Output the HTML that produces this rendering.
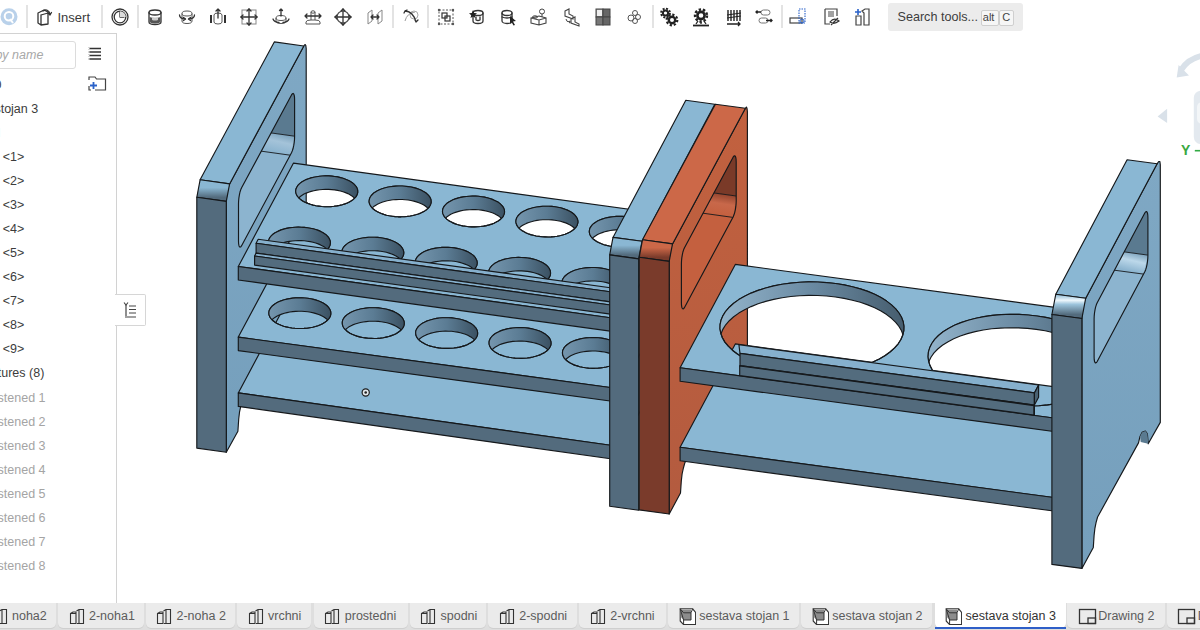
<!DOCTYPE html>
<html><head><meta charset="utf-8"><style>
html,body{margin:0;padding:0;width:1200px;height:630px;overflow:hidden;background:#fff;font-family:"Liberation Sans",sans-serif;}
#wrap{position:relative;width:1200px;height:630px;overflow:hidden;background:#fff;}
.t{position:absolute;white-space:nowrap;font-size:12.5px;line-height:1;}
.sep{position:absolute;top:5px;width:2px;height:23px;background:#e3e3e3;}
.ic{position:absolute;top:8px;}
.tab{position:absolute;top:603px;height:25px;background:#ebebeb;border-radius:0 0 5px 5px;box-shadow:0 1px 0 #cfcfcf;}
.tab span{position:absolute;top:7px;font-size:12.5px;color:#5a5a5a;white-space:nowrap;line-height:1;}
.li{position:absolute;font-size:12.5px;line-height:1;white-space:nowrap;color:#3c3c3c;}
.lg{color:#a6a6a6;}
</style></head><body><div id="wrap">
<svg width="1200" height="630" viewBox="0 0 1200 630" style="position:absolute;left:0;top:0"><defs><linearGradient id="g1" gradientUnits="userSpaceOnUse" x1="0.0" y1="44.5" x2="0.0" y2="452.2"><stop offset="0" stop-color="#7fa8c4"/><stop offset="1" stop-color="#759fbc"/></linearGradient><clipPath id="c2"><path d="M294.6,99.6 L294.5,97.1 L294.2,95.2 L293.7,93.9 L293.1,93.4 L292.3,93.8 L291.5,94.9 L241.6,187.8 L240.8,189.6 L240.0,192.0 L239.4,194.9 L238.9,197.9 L238.6,201.0 L238.5,203.9 L238.5,240.9 L238.6,243.5 L238.9,245.4 L239.4,246.7 L240.0,247.1 L240.8,246.8 L241.6,245.7 L291.5,152.8 L292.3,150.9 L293.1,148.5 L293.7,145.7 L294.2,142.6 L294.5,139.5 L294.6,136.6Z"/></clipPath><linearGradient id="g3" gradientUnits="userSpaceOnUse" x1="294.6" y1="136.2" x2="290.2" y2="155.2"><stop offset="0" stop-color="#7aa0ba"/><stop offset="0.45" stop-color="#a4c3d9"/><stop offset="1" stop-color="#8cb4cf"/></linearGradient><linearGradient id="g4" gradientUnits="userSpaceOnUse" x1="0.0" y1="179.8" x2="0.0" y2="197.3"><stop offset="0" stop-color="#8ab7d3"/><stop offset="0.45" stop-color="#8ab7d3"/><stop offset="1" stop-color="#536b7d"/></linearGradient><linearGradient id="g5" gradientUnits="userSpaceOnUse" x1="238.3" y1="0.0" x2="621.2" y2="0.0"><stop offset="0" stop-color="#5d7a8e"/><stop offset="1" stop-color="#56707f"/></linearGradient><clipPath id="c6"><path d="M329.8,317.2 L330.5,315.7 L330.8,314.2 L330.8,312.7 L330.6,311.2 L330.0,309.7 L329.2,308.3 L328.1,306.9 L326.7,305.5 L325.0,304.3 L323.1,303.1 L321.0,302.0 L318.7,301.0 L316.1,300.1 L313.5,299.4 L310.7,298.8 L307.8,298.3 L304.8,298.0 L301.8,297.8 L298.7,297.8 L295.7,297.9 L292.7,298.1 L289.8,298.6 L287.0,299.1 L284.3,299.8 L281.7,300.6 L279.3,301.5 L277.2,302.6 L275.2,303.7 L273.5,305.0 L272.0,306.3 L270.8,307.7 L269.9,309.1 L269.2,310.6 L268.9,312.1 L268.9,313.6 L269.1,315.1 L269.7,316.6 L270.5,318.0 L271.7,319.4 L273.1,320.8 L274.7,322.0 L276.6,323.2 L278.7,324.3 L281.1,325.3 L283.6,326.2 L286.2,326.9 L289.0,327.5 L291.9,328.0 L294.9,328.3 L297.9,328.5 L301.0,328.5 L304.0,328.4 L307.0,328.2 L309.9,327.7 L312.7,327.2 L315.5,326.5 L318.0,325.7 L320.4,324.8 L322.6,323.7 L324.5,322.6 L326.2,321.3 L327.7,320.0 L328.9,318.6Z"/></clipPath><linearGradient id="g7" gradientUnits="userSpaceOnUse" x1="268.9" y1="0.0" x2="330.8" y2="0.0"><stop offset="0" stop-color="#7596ae"/><stop offset="0.5" stop-color="#5b7c94"/><stop offset="1" stop-color="#3b5162"/></linearGradient><clipPath id="c8"><path d="M403.2,327.2 L403.9,325.7 L404.2,324.2 L404.2,322.7 L404.0,321.2 L403.4,319.7 L402.6,318.2 L401.5,316.8 L400.1,315.5 L398.4,314.2 L396.5,313.0 L394.4,311.9 L392.0,310.9 L389.5,310.1 L386.9,309.3 L384.1,308.7 L381.2,308.3 L378.2,307.9 L375.2,307.7 L372.1,307.7 L369.1,307.8 L366.1,308.1 L363.2,308.5 L360.4,309.0 L357.7,309.7 L355.1,310.5 L352.7,311.5 L350.6,312.5 L348.6,313.7 L346.9,314.9 L345.4,316.2 L344.2,317.6 L343.3,319.0 L342.6,320.5 L342.3,322.0 L342.3,323.5 L342.5,325.0 L343.1,326.5 L343.9,328.0 L345.1,329.4 L346.5,330.7 L348.1,332.0 L350.0,333.2 L352.1,334.3 L354.5,335.2 L357.0,336.1 L359.6,336.9 L362.4,337.5 L365.3,337.9 L368.3,338.3 L371.3,338.4 L374.4,338.5 L377.4,338.4 L380.4,338.1 L383.3,337.7 L386.1,337.1 L388.8,336.5 L391.4,335.6 L393.8,334.7 L396.0,333.7 L397.9,332.5 L399.6,331.3 L401.1,330.0 L402.3,328.6Z"/></clipPath><linearGradient id="g9" gradientUnits="userSpaceOnUse" x1="342.3" y1="0.0" x2="404.2" y2="0.0"><stop offset="0" stop-color="#7596ae"/><stop offset="0.5" stop-color="#5b7c94"/><stop offset="1" stop-color="#3b5162"/></linearGradient><clipPath id="c10"><path d="M476.6,337.1 L477.3,335.6 L477.6,334.1 L477.6,332.6 L477.4,331.1 L476.8,329.6 L476.0,328.2 L474.8,326.8 L473.5,325.4 L471.8,324.1 L469.9,323.0 L467.8,321.9 L465.4,320.9 L462.9,320.0 L460.3,319.3 L457.5,318.7 L454.6,318.2 L451.6,317.9 L448.6,317.7 L445.5,317.7 L442.5,317.8 L439.5,318.0 L436.6,318.4 L433.8,319.0 L431.1,319.7 L428.5,320.5 L426.1,321.4 L423.9,322.5 L422.0,323.6 L420.3,324.8 L418.8,326.2 L417.6,327.5 L416.7,329.0 L416.0,330.4 L415.7,331.9 L415.7,333.5 L415.9,335.0 L416.5,336.4 L417.3,337.9 L418.4,339.3 L419.8,340.7 L421.5,341.9 L423.4,343.1 L425.5,344.2 L427.9,345.2 L430.4,346.1 L433.0,346.8 L435.8,347.4 L438.7,347.9 L441.7,348.2 L444.7,348.4 L447.8,348.4 L450.8,348.3 L453.8,348.0 L456.7,347.6 L459.5,347.1 L462.2,346.4 L464.8,345.6 L467.2,344.7 L469.3,343.6 L471.3,342.5 L473.0,341.2 L474.5,339.9 L475.7,338.5Z"/></clipPath><linearGradient id="g11" gradientUnits="userSpaceOnUse" x1="415.7" y1="0.0" x2="477.6" y2="0.0"><stop offset="0" stop-color="#7596ae"/><stop offset="0.5" stop-color="#5b7c94"/><stop offset="1" stop-color="#3b5162"/></linearGradient><clipPath id="c12"><path d="M550.0,347.0 L550.7,345.6 L551.0,344.1 L551.0,342.6 L550.8,341.1 L550.2,339.6 L549.4,338.1 L548.2,336.7 L546.8,335.4 L545.2,334.1 L543.3,332.9 L541.2,331.8 L538.8,330.8 L536.3,330.0 L533.7,329.2 L530.9,328.6 L528.0,328.1 L525.0,327.8 L522.0,327.6 L518.9,327.6 L515.9,327.7 L512.9,328.0 L510.0,328.4 L507.2,328.9 L504.5,329.6 L501.9,330.4 L499.5,331.4 L497.3,332.4 L495.4,333.5 L493.7,334.8 L492.2,336.1 L491.0,337.5 L490.1,338.9 L489.4,340.4 L489.1,341.9 L489.1,343.4 L489.3,344.9 L489.9,346.4 L490.7,347.8 L491.8,349.3 L493.2,350.6 L494.9,351.9 L496.8,353.1 L498.9,354.2 L501.2,355.1 L503.8,356.0 L506.4,356.7 L509.2,357.3 L512.1,357.8 L515.1,358.1 L518.1,358.3 L521.2,358.4 L524.2,358.2 L527.2,358.0 L530.1,357.6 L532.9,357.0 L535.6,356.3 L538.2,355.5 L540.6,354.6 L542.7,353.6 L544.7,352.4 L546.4,351.2 L547.9,349.9 L549.1,348.5Z"/></clipPath><linearGradient id="g13" gradientUnits="userSpaceOnUse" x1="489.1" y1="0.0" x2="551.0" y2="0.0"><stop offset="0" stop-color="#7596ae"/><stop offset="0.5" stop-color="#5b7c94"/><stop offset="1" stop-color="#3b5162"/></linearGradient><clipPath id="c14"><path d="M623.4,357.0 L624.0,355.5 L624.4,354.0 L624.4,352.5 L624.2,351.0 L623.6,349.5 L622.8,348.1 L621.6,346.6 L620.2,345.3 L618.6,344.0 L616.7,342.8 L614.6,341.7 L612.2,340.8 L609.7,339.9 L607.1,339.2 L604.3,338.6 L601.4,338.1 L598.4,337.8 L595.4,337.6 L592.3,337.5 L589.3,337.7 L586.3,337.9 L583.4,338.3 L580.5,338.9 L577.8,339.6 L575.3,340.4 L572.9,341.3 L570.7,342.3 L568.8,343.5 L567.1,344.7 L565.6,346.0 L564.4,347.4 L563.5,348.9 L562.8,350.3 L562.5,351.8 L562.5,353.3 L562.7,354.8 L563.3,356.3 L564.1,357.8 L565.2,359.2 L566.6,360.5 L568.3,361.8 L570.2,363.0 L572.3,364.1 L574.6,365.1 L577.2,365.9 L579.8,366.7 L582.6,367.3 L585.5,367.8 L588.5,368.1 L591.5,368.3 L594.6,368.3 L597.6,368.2 L600.6,367.9 L603.5,367.5 L606.3,367.0 L609.0,366.3 L611.6,365.5 L614.0,364.5 L616.1,363.5 L618.1,362.4 L619.8,361.1 L621.3,359.8 L622.5,358.4Z"/></clipPath><linearGradient id="g15" gradientUnits="userSpaceOnUse" x1="562.5" y1="0.0" x2="624.4" y2="0.0"><stop offset="0" stop-color="#7596ae"/><stop offset="0.5" stop-color="#5b7c94"/><stop offset="1" stop-color="#3b5162"/></linearGradient><linearGradient id="g16" gradientUnits="userSpaceOnUse" x1="238.3" y1="0.0" x2="621.2" y2="0.0"><stop offset="0" stop-color="#5d7a8e"/><stop offset="1" stop-color="#56707f"/></linearGradient><clipPath id="c17"><path d="M329.4,246.6 L330.0,245.2 L330.3,243.7 L330.4,242.2 L330.1,240.7 L329.5,239.2 L328.7,237.7 L327.6,236.3 L326.2,234.9 L324.5,233.7 L322.6,232.5 L320.5,231.4 L318.2,230.4 L315.7,229.5 L313.0,228.8 L310.2,228.2 L307.3,227.7 L304.3,227.4 L301.3,227.2 L298.3,227.1 L295.2,227.2 L292.2,227.5 L289.3,227.9 L286.5,228.4 L283.8,229.1 L281.2,229.9 L278.9,230.9 L276.7,231.9 L274.7,233.0 L273.0,234.3 L271.5,235.6 L270.3,237.0 L269.4,238.4 L268.8,239.9 L268.4,241.4 L268.4,242.9 L268.6,244.4 L269.2,245.9 L270.0,247.3 L271.2,248.8 L272.6,250.1 L274.2,251.4 L276.1,252.6 L278.3,253.7 L280.6,254.7 L283.1,255.5 L285.8,256.3 L288.5,256.9 L291.4,257.4 L294.4,257.7 L297.4,257.9 L300.5,257.9 L303.5,257.8 L306.5,257.6 L309.4,257.2 L312.3,256.6 L315.0,255.9 L317.5,255.1 L319.9,254.2 L322.1,253.2 L324.0,252.0 L325.8,250.8 L327.2,249.5 L328.4,248.1Z"/></clipPath><linearGradient id="g18" gradientUnits="userSpaceOnUse" x1="268.4" y1="0.0" x2="330.4" y2="0.0"><stop offset="0" stop-color="#7596ae"/><stop offset="0.5" stop-color="#5b7c94"/><stop offset="1" stop-color="#3b5162"/></linearGradient><clipPath id="c19"><path d="M402.7,256.7 L403.4,255.3 L403.7,253.8 L403.8,252.3 L403.5,250.8 L402.9,249.3 L402.1,247.8 L401.0,246.4 L399.6,245.0 L397.9,243.8 L396.0,242.6 L393.9,241.5 L391.6,240.5 L389.1,239.6 L386.4,238.9 L383.6,238.3 L380.7,237.8 L377.7,237.4 L374.7,237.3 L371.7,237.2 L368.6,237.3 L365.6,237.6 L362.7,238.0 L359.9,238.5 L357.2,239.2 L354.6,240.0 L352.2,240.9 L350.1,242.0 L348.1,243.1 L346.4,244.4 L344.9,245.7 L343.7,247.1 L342.8,248.5 L342.2,250.0 L341.8,251.5 L341.8,253.0 L342.0,254.5 L342.6,256.0 L343.4,257.4 L344.6,258.8 L346.0,260.2 L347.6,261.5 L349.5,262.7 L351.6,263.8 L354.0,264.8 L356.5,265.6 L359.1,266.4 L361.9,267.0 L364.8,267.5 L367.8,267.8 L370.8,268.0 L373.9,268.0 L376.9,267.9 L379.9,267.7 L382.8,267.3 L385.7,266.7 L388.4,266.0 L390.9,265.2 L393.3,264.3 L395.5,263.3 L397.4,262.1 L399.2,260.9 L400.6,259.6 L401.8,258.2Z"/></clipPath><linearGradient id="g20" gradientUnits="userSpaceOnUse" x1="341.8" y1="0.0" x2="403.8" y2="0.0"><stop offset="0" stop-color="#7596ae"/><stop offset="0.5" stop-color="#5b7c94"/><stop offset="1" stop-color="#3b5162"/></linearGradient><clipPath id="c21"><path d="M476.1,266.8 L476.8,265.4 L477.1,263.9 L477.2,262.4 L476.9,260.8 L476.3,259.4 L475.5,257.9 L474.4,256.5 L473.0,255.1 L471.3,253.9 L469.4,252.7 L467.3,251.6 L465.0,250.6 L462.5,249.7 L459.8,249.0 L457.0,248.4 L454.1,247.9 L451.1,247.5 L448.1,247.4 L445.0,247.3 L442.0,247.4 L439.0,247.7 L436.1,248.1 L433.3,248.6 L430.6,249.3 L428.0,250.1 L425.6,251.0 L423.5,252.1 L421.5,253.2 L419.8,254.5 L418.3,255.8 L417.1,257.2 L416.2,258.6 L415.6,260.1 L415.2,261.6 L415.2,263.1 L415.4,264.6 L416.0,266.1 L416.8,267.5 L418.0,268.9 L419.4,270.3 L421.0,271.6 L422.9,272.8 L425.0,273.9 L427.4,274.8 L429.9,275.7 L432.5,276.5 L435.3,277.1 L438.2,277.6 L441.2,277.9 L444.2,278.1 L447.3,278.1 L450.3,278.0 L453.3,277.7 L456.2,277.3 L459.1,276.8 L461.8,276.1 L464.3,275.3 L466.7,274.4 L468.9,273.3 L470.8,272.2 L472.6,271.0 L474.0,269.7 L475.2,268.3Z"/></clipPath><linearGradient id="g22" gradientUnits="userSpaceOnUse" x1="415.2" y1="0.0" x2="477.2" y2="0.0"><stop offset="0" stop-color="#7596ae"/><stop offset="0.5" stop-color="#5b7c94"/><stop offset="1" stop-color="#3b5162"/></linearGradient><clipPath id="c23"><path d="M549.5,276.9 L550.2,275.5 L550.5,274.0 L550.5,272.4 L550.3,270.9 L549.7,269.5 L548.9,268.0 L547.8,266.6 L546.4,265.2 L544.7,264.0 L542.8,262.8 L540.7,261.7 L538.4,260.7 L535.8,259.8 L533.2,259.1 L530.4,258.4 L527.5,258.0 L524.5,257.6 L521.5,257.5 L518.4,257.4 L515.4,257.5 L512.4,257.8 L509.5,258.2 L506.7,258.7 L504.0,259.4 L501.4,260.2 L499.0,261.1 L496.9,262.2 L494.9,263.3 L493.2,264.6 L491.7,265.9 L490.5,267.3 L489.6,268.7 L489.0,270.2 L488.6,271.7 L488.6,273.2 L488.8,274.7 L489.4,276.2 L490.2,277.6 L491.4,279.0 L492.8,280.4 L494.4,281.7 L496.3,282.9 L498.4,284.0 L500.8,284.9 L503.3,285.8 L505.9,286.6 L508.7,287.2 L511.6,287.7 L514.6,288.0 L517.6,288.2 L520.7,288.2 L523.7,288.1 L526.7,287.8 L529.6,287.4 L532.5,286.9 L535.2,286.2 L537.7,285.4 L540.1,284.5 L542.3,283.4 L544.2,282.3 L545.9,281.1 L547.4,279.7 L548.6,278.4Z"/></clipPath><linearGradient id="g24" gradientUnits="userSpaceOnUse" x1="488.6" y1="0.0" x2="550.5" y2="0.0"><stop offset="0" stop-color="#7596ae"/><stop offset="0.5" stop-color="#5b7c94"/><stop offset="1" stop-color="#3b5162"/></linearGradient><clipPath id="c25"><path d="M622.9,287.0 L623.6,285.6 L623.9,284.1 L623.9,282.5 L623.7,281.0 L623.1,279.5 L622.3,278.1 L621.2,276.7 L619.8,275.3 L618.1,274.0 L616.2,272.9 L614.1,271.8 L611.8,270.8 L609.2,269.9 L606.6,269.2 L603.8,268.5 L600.9,268.1 L597.9,267.7 L594.9,267.5 L591.8,267.5 L588.8,267.6 L585.8,267.9 L582.9,268.3 L580.1,268.8 L577.4,269.5 L574.8,270.3 L572.4,271.2 L570.3,272.3 L568.3,273.4 L566.6,274.7 L565.1,276.0 L563.9,277.3 L563.0,278.8 L562.3,280.3 L562.0,281.8 L562.0,283.3 L562.2,284.8 L562.8,286.3 L563.6,287.7 L564.8,289.1 L566.2,290.5 L567.8,291.8 L569.7,293.0 L571.8,294.0 L574.2,295.0 L576.7,295.9 L579.3,296.7 L582.1,297.3 L585.0,297.7 L588.0,298.1 L591.0,298.3 L594.1,298.3 L597.1,298.2 L600.1,297.9 L603.0,297.5 L605.8,297.0 L608.5,296.3 L611.1,295.5 L613.5,294.6 L615.7,293.5 L617.6,292.4 L619.3,291.2 L620.8,289.8 L622.0,288.5Z"/></clipPath><linearGradient id="g26" gradientUnits="userSpaceOnUse" x1="562.0" y1="0.0" x2="623.9" y2="0.0"><stop offset="0" stop-color="#7596ae"/><stop offset="0.5" stop-color="#5b7c94"/><stop offset="1" stop-color="#3b5162"/></linearGradient><clipPath id="c27"><path d="M356.7,195.4 L357.3,194.0 L357.7,192.5 L357.7,190.9 L357.5,189.4 L356.9,187.9 L356.1,186.5 L354.9,185.1 L353.5,183.7 L351.9,182.4 L350.0,181.3 L347.9,180.2 L345.5,179.2 L343.0,178.3 L340.4,177.6 L337.6,176.9 L334.7,176.5 L331.7,176.1 L328.7,175.9 L325.6,175.9 L322.6,176.0 L319.6,176.3 L316.7,176.7 L313.8,177.2 L311.1,177.9 L308.6,178.7 L306.2,179.6 L304.0,180.7 L302.1,181.8 L300.3,183.1 L298.9,184.4 L297.7,185.7 L296.8,187.2 L296.1,188.7 L295.8,190.2 L295.7,191.7 L296.0,193.2 L296.6,194.7 L297.4,196.1 L298.5,197.5 L299.9,198.9 L301.6,200.2 L303.5,201.4 L305.6,202.4 L307.9,203.4 L310.4,204.3 L313.1,205.1 L315.9,205.7 L318.8,206.1 L321.8,206.5 L324.8,206.7 L327.9,206.7 L330.9,206.6 L333.9,206.3 L336.8,205.9 L339.6,205.4 L342.3,204.7 L344.9,203.9 L347.3,203.0 L349.4,201.9 L351.4,200.8 L353.1,199.6 L354.6,198.2 L355.8,196.9Z"/></clipPath><linearGradient id="g28" gradientUnits="userSpaceOnUse" x1="295.7" y1="0.0" x2="357.7" y2="0.0"><stop offset="0" stop-color="#7596ae"/><stop offset="0.5" stop-color="#5b7c94"/><stop offset="1" stop-color="#3b5162"/></linearGradient><clipPath id="c29"><path d="M430.1,205.5 L430.7,204.0 L431.1,202.5 L431.1,201.0 L430.9,199.5 L430.3,198.0 L429.5,196.6 L428.3,195.2 L426.9,193.8 L425.3,192.5 L423.4,191.4 L421.3,190.3 L418.9,189.3 L416.4,188.4 L413.8,187.6 L411.0,187.0 L408.1,186.6 L405.1,186.2 L402.1,186.0 L399.0,186.0 L396.0,186.1 L393.0,186.4 L390.1,186.8 L387.2,187.3 L384.5,188.0 L382.0,188.8 L379.6,189.7 L377.4,190.8 L375.5,191.9 L373.7,193.1 L372.3,194.5 L371.1,195.8 L370.2,197.3 L369.5,198.8 L369.2,200.3 L369.1,201.8 L369.4,203.3 L370.0,204.8 L370.8,206.2 L371.9,207.6 L373.3,209.0 L375.0,210.3 L376.9,211.4 L379.0,212.5 L381.3,213.5 L383.8,214.4 L386.5,215.2 L389.3,215.8 L392.2,216.2 L395.2,216.6 L398.2,216.8 L401.2,216.8 L404.3,216.7 L407.3,216.4 L410.2,216.0 L413.0,215.5 L415.7,214.8 L418.3,214.0 L420.7,213.1 L422.8,212.0 L424.8,210.9 L426.5,209.7 L428.0,208.3 L429.2,207.0Z"/></clipPath><linearGradient id="g30" gradientUnits="userSpaceOnUse" x1="369.1" y1="0.0" x2="431.1" y2="0.0"><stop offset="0" stop-color="#7596ae"/><stop offset="0.5" stop-color="#5b7c94"/><stop offset="1" stop-color="#3b5162"/></linearGradient><clipPath id="c31"><path d="M503.5,215.6 L504.1,214.1 L504.5,212.6 L504.5,211.1 L504.3,209.6 L503.7,208.1 L502.9,206.7 L501.7,205.3 L500.3,203.9 L498.7,202.6 L496.8,201.4 L494.6,200.4 L492.3,199.4 L489.8,198.5 L487.1,197.7 L484.4,197.1 L481.5,196.7 L478.5,196.3 L475.5,196.1 L472.4,196.1 L469.4,196.2 L466.4,196.5 L463.5,196.9 L460.6,197.4 L457.9,198.1 L455.4,198.9 L453.0,199.8 L450.8,200.9 L448.9,202.0 L447.1,203.2 L445.7,204.6 L444.5,205.9 L443.5,207.4 L442.9,208.8 L442.6,210.3 L442.5,211.9 L442.8,213.4 L443.4,214.9 L444.2,216.3 L445.3,217.7 L446.7,219.1 L448.4,220.4 L450.3,221.5 L452.4,222.6 L454.7,223.6 L457.2,224.5 L459.9,225.2 L462.7,225.9 L465.6,226.3 L468.6,226.7 L471.6,226.9 L474.6,226.9 L477.7,226.8 L480.7,226.5 L483.6,226.1 L486.4,225.6 L489.1,224.9 L491.7,224.1 L494.0,223.2 L496.2,222.1 L498.2,221.0 L499.9,219.7 L501.4,218.4 L502.6,217.1Z"/></clipPath><linearGradient id="g32" gradientUnits="userSpaceOnUse" x1="442.5" y1="0.0" x2="504.5" y2="0.0"><stop offset="0" stop-color="#7596ae"/><stop offset="0.5" stop-color="#5b7c94"/><stop offset="1" stop-color="#3b5162"/></linearGradient><clipPath id="c33"><path d="M576.9,225.7 L577.5,224.2 L577.9,222.7 L577.9,221.2 L577.6,219.7 L577.1,218.2 L576.2,216.8 L575.1,215.4 L573.7,214.0 L572.1,212.7 L570.2,211.5 L568.0,210.4 L565.7,209.5 L563.2,208.6 L560.5,207.8 L557.7,207.2 L554.8,206.7 L551.9,206.4 L548.8,206.2 L545.8,206.2 L542.8,206.3 L539.8,206.6 L536.9,207.0 L534.0,207.5 L531.3,208.2 L528.8,209.0 L526.4,209.9 L524.2,211.0 L522.3,212.1 L520.5,213.3 L519.1,214.7 L517.9,216.0 L516.9,217.5 L516.3,218.9 L516.0,220.4 L515.9,222.0 L516.2,223.5 L516.7,224.9 L517.6,226.4 L518.7,227.8 L520.1,229.2 L521.8,230.4 L523.7,231.6 L525.8,232.7 L528.1,233.7 L530.6,234.6 L533.3,235.3 L536.1,236.0 L539.0,236.4 L542.0,236.8 L545.0,236.9 L548.0,237.0 L551.1,236.9 L554.1,236.6 L557.0,236.2 L559.8,235.7 L562.5,235.0 L565.1,234.2 L567.4,233.3 L569.6,232.2 L571.6,231.1 L573.3,229.8 L574.8,228.5 L576.0,227.1Z"/></clipPath><linearGradient id="g34" gradientUnits="userSpaceOnUse" x1="515.9" y1="0.0" x2="577.9" y2="0.0"><stop offset="0" stop-color="#7596ae"/><stop offset="0.5" stop-color="#5b7c94"/><stop offset="1" stop-color="#3b5162"/></linearGradient><clipPath id="c35"><path d="M650.3,235.8 L650.9,234.3 L651.3,232.8 L651.3,231.3 L651.0,229.8 L650.5,228.3 L649.6,226.9 L648.5,225.5 L647.1,224.1 L645.5,222.8 L643.6,221.6 L641.4,220.5 L639.1,219.6 L636.6,218.7 L633.9,217.9 L631.1,217.3 L628.2,216.8 L625.3,216.5 L622.2,216.3 L619.2,216.3 L616.2,216.4 L613.2,216.7 L610.3,217.1 L607.4,217.6 L604.7,218.3 L602.2,219.1 L599.8,220.0 L597.6,221.1 L595.7,222.2 L593.9,223.4 L592.5,224.7 L591.3,226.1 L590.3,227.6 L589.7,229.0 L589.4,230.5 L589.3,232.0 L589.6,233.6 L590.1,235.0 L591.0,236.5 L592.1,237.9 L593.5,239.3 L595.2,240.5 L597.1,241.7 L599.2,242.8 L601.5,243.8 L604.0,244.7 L606.7,245.4 L609.5,246.0 L612.4,246.5 L615.4,246.9 L618.4,247.0 L621.4,247.1 L624.5,247.0 L627.5,246.7 L630.4,246.3 L633.2,245.8 L635.9,245.1 L638.5,244.3 L640.8,243.4 L643.0,242.3 L645.0,241.2 L646.7,239.9 L648.2,238.6 L649.4,237.2Z"/></clipPath><linearGradient id="g36" gradientUnits="userSpaceOnUse" x1="589.3" y1="0.0" x2="651.3" y2="0.0"><stop offset="0" stop-color="#7596ae"/><stop offset="0.5" stop-color="#5b7c94"/><stop offset="1" stop-color="#3b5162"/></linearGradient><linearGradient id="g37" gradientUnits="userSpaceOnUse" x1="238.3" y1="0.0" x2="621.2" y2="0.0"><stop offset="0" stop-color="#5d7a8e"/><stop offset="1" stop-color="#56707f"/></linearGradient><linearGradient id="g38" gradientUnits="userSpaceOnUse" x1="0.0" y1="243.2" x2="0.0" y2="253.1"><stop offset="0" stop-color="#4f6779"/><stop offset="1" stop-color="#5f7a8d"/></linearGradient><linearGradient id="g39" gradientUnits="userSpaceOnUse" x1="0.0" y1="237.4" x2="0.0" y2="254.9"><stop offset="0" stop-color="#8ab7d3"/><stop offset="0.45" stop-color="#8ab7d3"/><stop offset="1" stop-color="#536b7d"/></linearGradient><linearGradient id="g40" gradientUnits="userSpaceOnUse" x1="0.0" y1="107.1" x2="0.0" y2="514.0"><stop offset="0" stop-color="#c2613f"/><stop offset="1" stop-color="#b35b3f"/></linearGradient><clipPath id="c41"><path d="M736.2,161.9 L736.1,159.4 L735.8,157.5 L735.3,156.2 L734.7,155.8 L733.9,156.1 L733.1,157.2 L684.5,247.8 L683.7,249.6 L682.9,252.0 L682.3,254.9 L681.8,257.9 L681.5,261.0 L681.4,263.9 L681.4,302.7 L681.5,305.2 L681.8,307.2 L682.3,308.4 L682.9,308.9 L683.7,308.6 L684.5,307.4 L733.1,216.9 L733.9,215.1 L734.7,212.6 L735.3,209.8 L735.8,206.7 L736.1,203.6 L736.2,200.8Z"/></clipPath><linearGradient id="g42" gradientUnits="userSpaceOnUse" x1="736.2" y1="196.0" x2="732.9" y2="217.4"><stop offset="0" stop-color="#93442e"/><stop offset="0.45" stop-color="#c8684a"/><stop offset="1" stop-color="#c4603f"/></linearGradient><linearGradient id="g43" gradientUnits="userSpaceOnUse" x1="0.0" y1="239.8" x2="0.0" y2="257.3"><stop offset="0" stop-color="#cc6848"/><stop offset="0.45" stop-color="#cc6848"/><stop offset="1" stop-color="#7a3b2b"/></linearGradient><linearGradient id="g44" gradientUnits="userSpaceOnUse" x1="680.1" y1="0.0" x2="1063.0" y2="0.0"><stop offset="0" stop-color="#5d7a8e"/><stop offset="1" stop-color="#56707f"/></linearGradient><clipPath id="c45"><path d="M900.9,339.5 L902.8,335.1 L903.8,330.7 L903.9,326.2 L903.2,321.7 L901.5,317.3 L899.0,313.0 L895.7,308.9 L891.5,304.9 L886.6,301.1 L881.0,297.6 L874.7,294.3 L867.8,291.4 L860.3,288.9 L852.4,286.7 L844.1,284.9 L835.5,283.5 L826.7,282.6 L817.7,282.0 L808.7,281.9 L799.7,282.3 L790.8,283.1 L782.1,284.3 L773.7,285.9 L765.7,288.0 L758.1,290.4 L751.1,293.1 L744.6,296.2 L738.8,299.6 L733.7,303.3 L729.3,307.2 L725.7,311.3 L723.0,315.6 L721.1,320.0 L720.1,324.4 L720.0,328.9 L720.8,333.4 L722.4,337.8 L724.9,342.1 L728.3,346.2 L732.4,350.2 L737.4,354.0 L743.0,357.5 L749.3,360.8 L756.2,363.7 L763.6,366.2 L771.6,368.4 L779.8,370.2 L788.5,371.6 L797.3,372.6 L806.3,373.1 L815.3,373.2 L824.3,372.8 L833.2,372.0 L841.8,370.8 L850.2,369.2 L858.3,367.2 L865.8,364.7 L872.9,362.0 L879.3,358.9 L885.2,355.5 L890.3,351.8 L894.6,347.9 L898.2,343.8Z"/></clipPath><linearGradient id="g46" gradientUnits="userSpaceOnUse" x1="720.0" y1="0.0" x2="903.9" y2="0.0"><stop offset="0" stop-color="#93b4cb"/><stop offset="0.5" stop-color="#6a8aa2"/><stop offset="1" stop-color="#465d6e"/></linearGradient><clipPath id="c47"><path d="M1108.2,376.7 L1110.3,372.5 L1111.6,368.1 L1111.9,363.6 L1111.4,359.1 L1110.0,354.6 L1107.7,350.2 L1104.6,345.8 L1100.6,341.6 L1095.9,337.6 L1090.5,333.8 L1084.3,330.3 L1077.6,327.0 L1070.3,324.0 L1062.5,321.4 L1054.3,319.2 L1045.8,317.4 L1037.0,316.0 L1028.1,315.0 L1019.1,314.4 L1010.1,314.3 L1001.2,314.6 L992.4,315.4 L984.0,316.6 L975.9,318.2 L968.2,320.2 L961.0,322.6 L954.4,325.3 L948.4,328.4 L943.1,331.8 L938.5,335.5 L934.7,339.4 L931.8,343.5 L929.7,347.8 L928.4,352.2 L928.1,356.7 L928.6,361.2 L930.0,365.6 L932.3,370.1 L935.4,374.4 L939.4,378.6 L944.1,382.6 L949.5,386.5 L955.7,390.0 L962.4,393.3 L969.7,396.2 L977.5,398.8 L985.7,401.1 L994.2,402.9 L1003.0,404.3 L1011.9,405.3 L1020.9,405.9 L1029.9,406.0 L1038.8,405.7 L1047.6,404.9 L1056.0,403.7 L1064.1,402.1 L1071.8,400.1 L1079.0,397.7 L1085.6,394.9 L1091.6,391.8 L1096.9,388.4 L1101.5,384.8 L1105.3,380.8Z"/></clipPath><linearGradient id="g48" gradientUnits="userSpaceOnUse" x1="928.1" y1="0.0" x2="1111.9" y2="0.0"><stop offset="0" stop-color="#93b4cb"/><stop offset="0.5" stop-color="#6a8aa2"/><stop offset="1" stop-color="#465d6e"/></linearGradient><linearGradient id="g49" gradientUnits="userSpaceOnUse" x1="680.1" y1="0.0" x2="1063.0" y2="0.0"><stop offset="0" stop-color="#5d7a8e"/><stop offset="1" stop-color="#56707f"/></linearGradient><linearGradient id="g50" gradientUnits="userSpaceOnUse" x1="0.0" y1="353.4" x2="0.0" y2="365.5"><stop offset="0" stop-color="#4f6779"/><stop offset="1" stop-color="#5f7a8d"/></linearGradient><linearGradient id="g51" gradientUnits="userSpaceOnUse" x1="0.0" y1="161.5" x2="0.0" y2="568.4"><stop offset="0" stop-color="#7fa8c4"/><stop offset="1" stop-color="#759fbc"/></linearGradient><clipPath id="c52"><path d="M1147.9,217.6 L1147.8,215.1 L1147.5,213.2 L1147.0,212.0 L1146.4,211.5 L1145.6,211.9 L1144.8,213.0 L1097.2,302.8 L1096.4,304.6 L1095.6,307.1 L1095.0,309.9 L1094.5,313.0 L1094.2,316.1 L1094.1,319.0 L1094.1,356.8 L1094.2,359.4 L1094.5,361.3 L1095.0,362.5 L1095.6,363.0 L1096.4,362.6 L1097.2,361.5 L1144.8,271.7 L1145.6,269.9 L1146.4,267.4 L1147.0,264.6 L1147.5,261.5 L1147.8,258.4 L1147.9,255.5Z"/></clipPath><linearGradient id="g53" gradientUnits="userSpaceOnUse" x1="1147.9" y1="255.1" x2="1143.5" y2="274.1"><stop offset="0" stop-color="#7aa0ba"/><stop offset="0.45" stop-color="#bcd8ea"/><stop offset="1" stop-color="#8cb4cf"/></linearGradient><linearGradient id="g54" gradientUnits="userSpaceOnUse" x1="0.0" y1="294.2" x2="0.0" y2="314.5"><stop offset="0" stop-color="#8ab7d3"/><stop offset="0.3" stop-color="#eef7fc"/><stop offset="0.5" stop-color="#9cc4dc"/><stop offset="1" stop-color="#536b7d"/></linearGradient></defs><polygon points="229.6,183.9 228.8,185.9 228.0,188.5 227.3,191.6 226.7,194.9 226.4,198.3 226.3,201.4 226.3,452.2 237.9,431.2 238.3,425.2 238.7,419.2 239.5,412.2 240.8,406.2 242.3,400.8 284.0,326.7 285.5,320.2 287.6,316.2 291.0,314.8 293.1,317.6 293.9,327.6 306.2,306.2 306.2,48.5 305.8,45.3 305.0,44.5 303.8,46.0" fill="url(#g1)" stroke="#15181b" stroke-width="1.15" stroke-linejoin="round" />
<polygon points="285.5,320.2 287.6,316.2 291.0,314.8 293.1,317.6 293.9,327.6 286.3,325.7" fill="#5a7a90"  />
<g clip-path="url(#c2)">
<polygon points="294.6,99.6 294.5,97.1 294.2,95.2 293.7,93.9 293.1,93.4 292.3,93.8 291.5,94.9 241.6,187.8 240.8,189.6 240.0,192.0 239.4,194.9 238.9,197.9 238.6,201.0 238.5,203.9 238.5,240.9 238.6,243.5 238.9,245.4 239.4,246.7 240.0,247.1 240.8,246.8 241.6,245.7 291.5,152.8 292.3,150.9 293.1,148.5 293.7,145.7 294.2,142.6 294.5,139.5 294.6,136.6" fill="#8cb4cf"  />
<polygon points="294.6,84.8 294.6,136.2 265.1,132.1 265.1,80.8" fill="#5a7a90"  />
<polygon points="294.6,136.2 290.2,155.2 260.8,151.1 265.1,132.1" fill="url(#g3)"  />
<line x1="294.6" y1="136.2" x2="265.1" y2="132.1" stroke="#16191c" stroke-width="0.9"/>
<line x1="290.2" y1="155.2" x2="260.8" y2="151.1" stroke="#16191c" stroke-width="0.9"/>
</g>
<polygon points="294.6,99.6 294.5,97.1 294.2,95.2 293.7,93.9 293.1,93.4 292.3,93.8 291.5,94.9 241.6,187.8 240.8,189.6 240.0,192.0 239.4,194.9 238.9,197.9 238.6,201.0 238.5,203.9 238.5,240.9 238.6,243.5 238.9,245.4 239.4,246.7 240.0,247.1 240.8,246.8 241.6,245.7 291.5,152.8 292.3,150.9 293.1,148.5 293.7,145.7 294.2,142.6 294.5,139.5 294.6,136.6" fill="none" stroke="#15181b" stroke-width="1.15" stroke-linejoin="round" />
<polygon points="200.1,179.8 229.6,183.9 303.8,46.0 274.3,41.9" fill="#8ab7d3" stroke="#15181b" stroke-width="1.15" stroke-linejoin="round" />
<polygon points="200.1,179.8 229.6,183.9 226.3,201.4 196.8,197.3" fill="url(#g4)" stroke="#15181b" stroke-width="1.15" stroke-linejoin="round" />
<polygon points="196.8,197.3 226.3,201.4 226.3,452.2 196.8,448.1" fill="#536b7d" stroke="#15181b" stroke-width="1.15" stroke-linejoin="round" />
<path d="M238.3,392.9 L621.2,446.8 L676.5,343.4 L293.5,289.5Z" fill="#8ab7d3" stroke="#15181b" stroke-width="1.15" stroke-linejoin="round" fill-rule="evenodd"/>
<polygon points="238.3,392.9 621.2,446.8 621.2,460.3 238.3,406.4" fill="#536b7d" stroke="#15181b" stroke-width="1.15" stroke-linejoin="round" />
<circle cx="365.7" cy="392.5" r="3.6" fill="#e4e9ec" stroke="#1e1e1e" stroke-width="1.2"/><circle cx="365.7" cy="392.5" r="1.3" fill="#222"/>
<path d="M238.3,337.1 L621.2,389.0 L676.5,285.6 L293.5,233.8ZM329.8,317.2 L330.5,315.7 L330.8,314.2 L330.8,312.7 L330.6,311.2 L330.0,309.7 L329.2,308.3 L328.1,306.9 L326.7,305.5 L325.0,304.3 L323.1,303.1 L321.0,302.0 L318.7,301.0 L316.1,300.1 L313.5,299.4 L310.7,298.8 L307.8,298.3 L304.8,298.0 L301.8,297.8 L298.7,297.8 L295.7,297.9 L292.7,298.1 L289.8,298.6 L287.0,299.1 L284.3,299.8 L281.7,300.6 L279.3,301.5 L277.2,302.6 L275.2,303.7 L273.5,305.0 L272.0,306.3 L270.8,307.7 L269.9,309.1 L269.2,310.6 L268.9,312.1 L268.9,313.6 L269.1,315.1 L269.7,316.6 L270.5,318.0 L271.7,319.4 L273.1,320.8 L274.7,322.0 L276.6,323.2 L278.7,324.3 L281.1,325.3 L283.6,326.2 L286.2,326.9 L289.0,327.5 L291.9,328.0 L294.9,328.3 L297.9,328.5 L301.0,328.5 L304.0,328.4 L307.0,328.2 L309.9,327.7 L312.7,327.2 L315.5,326.5 L318.0,325.7 L320.4,324.8 L322.6,323.7 L324.5,322.6 L326.2,321.3 L327.7,320.0 L328.9,318.6ZM403.2,327.2 L403.9,325.7 L404.2,324.2 L404.2,322.7 L404.0,321.2 L403.4,319.7 L402.6,318.2 L401.5,316.8 L400.1,315.5 L398.4,314.2 L396.5,313.0 L394.4,311.9 L392.0,310.9 L389.5,310.1 L386.9,309.3 L384.1,308.7 L381.2,308.3 L378.2,307.9 L375.2,307.7 L372.1,307.7 L369.1,307.8 L366.1,308.1 L363.2,308.5 L360.4,309.0 L357.7,309.7 L355.1,310.5 L352.7,311.5 L350.6,312.5 L348.6,313.7 L346.9,314.9 L345.4,316.2 L344.2,317.6 L343.3,319.0 L342.6,320.5 L342.3,322.0 L342.3,323.5 L342.5,325.0 L343.1,326.5 L343.9,328.0 L345.1,329.4 L346.5,330.7 L348.1,332.0 L350.0,333.2 L352.1,334.3 L354.5,335.2 L357.0,336.1 L359.6,336.9 L362.4,337.5 L365.3,337.9 L368.3,338.3 L371.3,338.4 L374.4,338.5 L377.4,338.4 L380.4,338.1 L383.3,337.7 L386.1,337.1 L388.8,336.5 L391.4,335.6 L393.8,334.7 L396.0,333.7 L397.9,332.5 L399.6,331.3 L401.1,330.0 L402.3,328.6ZM476.6,337.1 L477.3,335.6 L477.6,334.1 L477.6,332.6 L477.4,331.1 L476.8,329.6 L476.0,328.2 L474.8,326.8 L473.5,325.4 L471.8,324.1 L469.9,323.0 L467.8,321.9 L465.4,320.9 L462.9,320.0 L460.3,319.3 L457.5,318.7 L454.6,318.2 L451.6,317.9 L448.6,317.7 L445.5,317.7 L442.5,317.8 L439.5,318.0 L436.6,318.4 L433.8,319.0 L431.1,319.7 L428.5,320.5 L426.1,321.4 L423.9,322.5 L422.0,323.6 L420.3,324.8 L418.8,326.2 L417.6,327.5 L416.7,329.0 L416.0,330.4 L415.7,331.9 L415.7,333.5 L415.9,335.0 L416.5,336.4 L417.3,337.9 L418.4,339.3 L419.8,340.7 L421.5,341.9 L423.4,343.1 L425.5,344.2 L427.9,345.2 L430.4,346.1 L433.0,346.8 L435.8,347.4 L438.7,347.9 L441.7,348.2 L444.7,348.4 L447.8,348.4 L450.8,348.3 L453.8,348.0 L456.7,347.6 L459.5,347.1 L462.2,346.4 L464.8,345.6 L467.2,344.7 L469.3,343.6 L471.3,342.5 L473.0,341.2 L474.5,339.9 L475.7,338.5ZM550.0,347.0 L550.7,345.6 L551.0,344.1 L551.0,342.6 L550.8,341.1 L550.2,339.6 L549.4,338.1 L548.2,336.7 L546.8,335.4 L545.2,334.1 L543.3,332.9 L541.2,331.8 L538.8,330.8 L536.3,330.0 L533.7,329.2 L530.9,328.6 L528.0,328.1 L525.0,327.8 L522.0,327.6 L518.9,327.6 L515.9,327.7 L512.9,328.0 L510.0,328.4 L507.2,328.9 L504.5,329.6 L501.9,330.4 L499.5,331.4 L497.3,332.4 L495.4,333.5 L493.7,334.8 L492.2,336.1 L491.0,337.5 L490.1,338.9 L489.4,340.4 L489.1,341.9 L489.1,343.4 L489.3,344.9 L489.9,346.4 L490.7,347.8 L491.8,349.3 L493.2,350.6 L494.9,351.9 L496.8,353.1 L498.9,354.2 L501.2,355.1 L503.8,356.0 L506.4,356.7 L509.2,357.3 L512.1,357.8 L515.1,358.1 L518.1,358.3 L521.2,358.4 L524.2,358.2 L527.2,358.0 L530.1,357.6 L532.9,357.0 L535.6,356.3 L538.2,355.5 L540.6,354.6 L542.7,353.6 L544.7,352.4 L546.4,351.2 L547.9,349.9 L549.1,348.5ZM623.4,357.0 L624.0,355.5 L624.4,354.0 L624.4,352.5 L624.2,351.0 L623.6,349.5 L622.8,348.1 L621.6,346.6 L620.2,345.3 L618.6,344.0 L616.7,342.8 L614.6,341.7 L612.2,340.8 L609.7,339.9 L607.1,339.2 L604.3,338.6 L601.4,338.1 L598.4,337.8 L595.4,337.6 L592.3,337.5 L589.3,337.7 L586.3,337.9 L583.4,338.3 L580.5,338.9 L577.8,339.6 L575.3,340.4 L572.9,341.3 L570.7,342.3 L568.8,343.5 L567.1,344.7 L565.6,346.0 L564.4,347.4 L563.5,348.9 L562.8,350.3 L562.5,351.8 L562.5,353.3 L562.7,354.8 L563.3,356.3 L564.1,357.8 L565.2,359.2 L566.6,360.5 L568.3,361.8 L570.2,363.0 L572.3,364.1 L574.6,365.1 L577.2,365.9 L579.8,366.7 L582.6,367.3 L585.5,367.8 L588.5,368.1 L591.5,368.3 L594.6,368.3 L597.6,368.2 L600.6,367.9 L603.5,367.5 L606.3,367.0 L609.0,366.3 L611.6,365.5 L614.0,364.5 L616.1,363.5 L618.1,362.4 L619.8,361.1 L621.3,359.8 L622.5,358.4Z" fill="#8ab7d3" stroke="#15181b" stroke-width="1.15" stroke-linejoin="round" fill-rule="evenodd"/>
<path d="M329.8,317.2 L330.5,315.7 L330.8,314.2 L330.8,312.7 L330.6,311.2 L330.0,309.7 L329.2,308.3 L328.1,306.9 L326.7,305.5 L325.0,304.3 L323.1,303.1 L321.0,302.0 L318.7,301.0 L316.1,300.1 L313.5,299.4 L310.7,298.8 L307.8,298.3 L304.8,298.0 L301.8,297.8 L298.7,297.8 L295.7,297.9 L292.7,298.1 L289.8,298.6 L287.0,299.1 L284.3,299.8 L281.7,300.6 L279.3,301.5 L277.2,302.6 L275.2,303.7 L273.5,305.0 L272.0,306.3 L270.8,307.7 L269.9,309.1 L269.2,310.6 L268.9,312.1 L268.9,313.6 L269.1,315.1 L269.7,316.6 L270.5,318.0 L271.7,319.4 L273.1,320.8 L274.7,322.0 L276.6,323.2 L278.7,324.3 L281.1,325.3 L283.6,326.2 L286.2,326.9 L289.0,327.5 L291.9,328.0 L294.9,328.3 L297.9,328.5 L301.0,328.5 L304.0,328.4 L307.0,328.2 L309.9,327.7 L312.7,327.2 L315.5,326.5 L318.0,325.7 L320.4,324.8 L322.6,323.7 L324.5,322.6 L326.2,321.3 L327.7,320.0 L328.9,318.6ZM329.8,330.7 L330.5,329.2 L330.8,327.7 L330.8,326.2 L330.6,324.7 L330.0,323.2 L329.2,321.8 L328.1,320.3 L326.7,319.0 L325.0,317.7 L323.1,316.5 L321.0,315.4 L318.7,314.5 L316.1,313.6 L313.5,312.9 L310.7,312.2 L307.8,311.8 L304.8,311.5 L301.8,311.3 L298.7,311.2 L295.7,311.4 L292.7,311.6 L289.8,312.0 L287.0,312.6 L284.3,313.3 L281.7,314.1 L279.3,315.0 L277.2,316.0 L275.2,317.2 L273.5,318.4 L272.0,319.7 L270.8,321.1 L269.9,322.6 L269.2,324.0 L268.9,325.5 L268.9,327.0 L269.1,328.5 L269.7,330.0 L270.5,331.5 L271.7,332.9 L273.1,334.2 L274.7,335.5 L276.6,336.7 L278.7,337.8 L281.1,338.8 L283.6,339.6 L286.2,340.4 L289.0,341.0 L291.9,341.5 L294.9,341.8 L297.9,342.0 L301.0,342.0 L304.0,341.9 L307.0,341.6 L309.9,341.2 L312.7,340.7 L315.5,340.0 L318.0,339.2 L320.4,338.2 L322.6,337.2 L324.5,336.0 L326.2,334.8 L327.7,333.5 L328.9,332.1Z" fill="url(#g7)" fill-rule="evenodd" clip-path="url(#c6)"/>
<path d="M329.8,330.7 L330.5,329.2 L330.8,327.7 L330.8,326.2 L330.6,324.7 L330.0,323.2 L329.2,321.8 L328.1,320.3 L326.7,319.0 L325.0,317.7 L323.1,316.5 L321.0,315.4 L318.7,314.5 L316.1,313.6 L313.5,312.9 L310.7,312.2 L307.8,311.8 L304.8,311.5 L301.8,311.3 L298.7,311.2 L295.7,311.4 L292.7,311.6 L289.8,312.0 L287.0,312.6 L284.3,313.3 L281.7,314.1 L279.3,315.0 L277.2,316.0 L275.2,317.2 L273.5,318.4 L272.0,319.7 L270.8,321.1 L269.9,322.6 L269.2,324.0 L268.9,325.5 L268.9,327.0 L269.1,328.5 L269.7,330.0 L270.5,331.5 L271.7,332.9 L273.1,334.2 L274.7,335.5 L276.6,336.7 L278.7,337.8 L281.1,338.8 L283.6,339.6 L286.2,340.4 L289.0,341.0 L291.9,341.5 L294.9,341.8 L297.9,342.0 L301.0,342.0 L304.0,341.9 L307.0,341.6 L309.9,341.2 L312.7,340.7 L315.5,340.0 L318.0,339.2 L320.4,338.2 L322.6,337.2 L324.5,336.0 L326.2,334.8 L327.7,333.5 L328.9,332.1Z" fill="none" stroke="#15181b" stroke-width="1.15" stroke-linejoin="round" clip-path="url(#c6)"/>
<path d="M329.8,317.2 L330.5,315.7 L330.8,314.2 L330.8,312.7 L330.6,311.2 L330.0,309.7 L329.2,308.3 L328.1,306.9 L326.7,305.5 L325.0,304.3 L323.1,303.1 L321.0,302.0 L318.7,301.0 L316.1,300.1 L313.5,299.4 L310.7,298.8 L307.8,298.3 L304.8,298.0 L301.8,297.8 L298.7,297.8 L295.7,297.9 L292.7,298.1 L289.8,298.6 L287.0,299.1 L284.3,299.8 L281.7,300.6 L279.3,301.5 L277.2,302.6 L275.2,303.7 L273.5,305.0 L272.0,306.3 L270.8,307.7 L269.9,309.1 L269.2,310.6 L268.9,312.1 L268.9,313.6 L269.1,315.1 L269.7,316.6 L270.5,318.0 L271.7,319.4 L273.1,320.8 L274.7,322.0 L276.6,323.2 L278.7,324.3 L281.1,325.3 L283.6,326.2 L286.2,326.9 L289.0,327.5 L291.9,328.0 L294.9,328.3 L297.9,328.5 L301.0,328.5 L304.0,328.4 L307.0,328.2 L309.9,327.7 L312.7,327.2 L315.5,326.5 L318.0,325.7 L320.4,324.8 L322.6,323.7 L324.5,322.6 L326.2,321.3 L327.7,320.0 L328.9,318.6Z" fill="none" stroke="#15181b" stroke-width="1.15" stroke-linejoin="round" />
<path d="M403.2,327.2 L403.9,325.7 L404.2,324.2 L404.2,322.7 L404.0,321.2 L403.4,319.7 L402.6,318.2 L401.5,316.8 L400.1,315.5 L398.4,314.2 L396.5,313.0 L394.4,311.9 L392.0,310.9 L389.5,310.1 L386.9,309.3 L384.1,308.7 L381.2,308.3 L378.2,307.9 L375.2,307.7 L372.1,307.7 L369.1,307.8 L366.1,308.1 L363.2,308.5 L360.4,309.0 L357.7,309.7 L355.1,310.5 L352.7,311.5 L350.6,312.5 L348.6,313.7 L346.9,314.9 L345.4,316.2 L344.2,317.6 L343.3,319.0 L342.6,320.5 L342.3,322.0 L342.3,323.5 L342.5,325.0 L343.1,326.5 L343.9,328.0 L345.1,329.4 L346.5,330.7 L348.1,332.0 L350.0,333.2 L352.1,334.3 L354.5,335.2 L357.0,336.1 L359.6,336.9 L362.4,337.5 L365.3,337.9 L368.3,338.3 L371.3,338.4 L374.4,338.5 L377.4,338.4 L380.4,338.1 L383.3,337.7 L386.1,337.1 L388.8,336.5 L391.4,335.6 L393.8,334.7 L396.0,333.7 L397.9,332.5 L399.6,331.3 L401.1,330.0 L402.3,328.6ZM403.2,340.6 L403.9,339.1 L404.2,337.6 L404.2,336.1 L404.0,334.6 L403.4,333.1 L402.6,331.7 L401.5,330.3 L400.1,328.9 L398.4,327.7 L396.5,326.5 L394.4,325.4 L392.0,324.4 L389.5,323.5 L386.9,322.8 L384.1,322.2 L381.2,321.7 L378.2,321.4 L375.2,321.2 L372.1,321.2 L369.1,321.3 L366.1,321.6 L363.2,322.0 L360.4,322.5 L357.7,323.2 L355.1,324.0 L352.7,324.9 L350.6,326.0 L348.6,327.1 L346.9,328.4 L345.4,329.7 L344.2,331.1 L343.3,332.5 L342.6,334.0 L342.3,335.5 L342.3,337.0 L342.5,338.5 L343.1,340.0 L343.9,341.4 L345.1,342.8 L346.5,344.2 L348.1,345.5 L350.0,346.6 L352.1,347.7 L354.5,348.7 L357.0,349.6 L359.6,350.3 L362.4,350.9 L365.3,351.4 L368.3,351.7 L371.3,351.9 L374.4,351.9 L377.4,351.8 L380.4,351.6 L383.3,351.2 L386.1,350.6 L388.8,349.9 L391.4,349.1 L393.8,348.2 L396.0,347.1 L397.9,346.0 L399.6,344.8 L401.1,343.4 L402.3,342.1Z" fill="url(#g9)" fill-rule="evenodd" clip-path="url(#c8)"/>
<path d="M403.2,340.6 L403.9,339.1 L404.2,337.6 L404.2,336.1 L404.0,334.6 L403.4,333.1 L402.6,331.7 L401.5,330.3 L400.1,328.9 L398.4,327.7 L396.5,326.5 L394.4,325.4 L392.0,324.4 L389.5,323.5 L386.9,322.8 L384.1,322.2 L381.2,321.7 L378.2,321.4 L375.2,321.2 L372.1,321.2 L369.1,321.3 L366.1,321.6 L363.2,322.0 L360.4,322.5 L357.7,323.2 L355.1,324.0 L352.7,324.9 L350.6,326.0 L348.6,327.1 L346.9,328.4 L345.4,329.7 L344.2,331.1 L343.3,332.5 L342.6,334.0 L342.3,335.5 L342.3,337.0 L342.5,338.5 L343.1,340.0 L343.9,341.4 L345.1,342.8 L346.5,344.2 L348.1,345.5 L350.0,346.6 L352.1,347.7 L354.5,348.7 L357.0,349.6 L359.6,350.3 L362.4,350.9 L365.3,351.4 L368.3,351.7 L371.3,351.9 L374.4,351.9 L377.4,351.8 L380.4,351.6 L383.3,351.2 L386.1,350.6 L388.8,349.9 L391.4,349.1 L393.8,348.2 L396.0,347.1 L397.9,346.0 L399.6,344.8 L401.1,343.4 L402.3,342.1Z" fill="none" stroke="#15181b" stroke-width="1.15" stroke-linejoin="round" clip-path="url(#c8)"/>
<path d="M403.2,327.2 L403.9,325.7 L404.2,324.2 L404.2,322.7 L404.0,321.2 L403.4,319.7 L402.6,318.2 L401.5,316.8 L400.1,315.5 L398.4,314.2 L396.5,313.0 L394.4,311.9 L392.0,310.9 L389.5,310.1 L386.9,309.3 L384.1,308.7 L381.2,308.3 L378.2,307.9 L375.2,307.7 L372.1,307.7 L369.1,307.8 L366.1,308.1 L363.2,308.5 L360.4,309.0 L357.7,309.7 L355.1,310.5 L352.7,311.5 L350.6,312.5 L348.6,313.7 L346.9,314.9 L345.4,316.2 L344.2,317.6 L343.3,319.0 L342.6,320.5 L342.3,322.0 L342.3,323.5 L342.5,325.0 L343.1,326.5 L343.9,328.0 L345.1,329.4 L346.5,330.7 L348.1,332.0 L350.0,333.2 L352.1,334.3 L354.5,335.2 L357.0,336.1 L359.6,336.9 L362.4,337.5 L365.3,337.9 L368.3,338.3 L371.3,338.4 L374.4,338.5 L377.4,338.4 L380.4,338.1 L383.3,337.7 L386.1,337.1 L388.8,336.5 L391.4,335.6 L393.8,334.7 L396.0,333.7 L397.9,332.5 L399.6,331.3 L401.1,330.0 L402.3,328.6Z" fill="none" stroke="#15181b" stroke-width="1.15" stroke-linejoin="round" />
<path d="M476.6,337.1 L477.3,335.6 L477.6,334.1 L477.6,332.6 L477.4,331.1 L476.8,329.6 L476.0,328.2 L474.8,326.8 L473.5,325.4 L471.8,324.1 L469.9,323.0 L467.8,321.9 L465.4,320.9 L462.9,320.0 L460.3,319.3 L457.5,318.7 L454.6,318.2 L451.6,317.9 L448.6,317.7 L445.5,317.7 L442.5,317.8 L439.5,318.0 L436.6,318.4 L433.8,319.0 L431.1,319.7 L428.5,320.5 L426.1,321.4 L423.9,322.5 L422.0,323.6 L420.3,324.8 L418.8,326.2 L417.6,327.5 L416.7,329.0 L416.0,330.4 L415.7,331.9 L415.7,333.5 L415.9,335.0 L416.5,336.4 L417.3,337.9 L418.4,339.3 L419.8,340.7 L421.5,341.9 L423.4,343.1 L425.5,344.2 L427.9,345.2 L430.4,346.1 L433.0,346.8 L435.8,347.4 L438.7,347.9 L441.7,348.2 L444.7,348.4 L447.8,348.4 L450.8,348.3 L453.8,348.0 L456.7,347.6 L459.5,347.1 L462.2,346.4 L464.8,345.6 L467.2,344.7 L469.3,343.6 L471.3,342.5 L473.0,341.2 L474.5,339.9 L475.7,338.5ZM476.6,350.6 L477.3,349.1 L477.6,347.6 L477.6,346.1 L477.4,344.6 L476.8,343.1 L476.0,341.6 L474.8,340.2 L473.5,338.9 L471.8,337.6 L469.9,336.4 L467.8,335.3 L465.4,334.3 L462.9,333.5 L460.3,332.7 L457.5,332.1 L454.6,331.7 L451.6,331.3 L448.6,331.2 L445.5,331.1 L442.5,331.2 L439.5,331.5 L436.6,331.9 L433.8,332.5 L431.1,333.1 L428.5,334.0 L426.1,334.9 L423.9,335.9 L422.0,337.1 L420.3,338.3 L418.8,339.6 L417.6,341.0 L416.7,342.4 L416.0,343.9 L415.7,345.4 L415.7,346.9 L415.9,348.4 L416.5,349.9 L417.3,351.4 L418.4,352.8 L419.8,354.1 L421.5,355.4 L423.4,356.6 L425.5,357.7 L427.9,358.7 L430.4,359.5 L433.0,360.3 L435.8,360.9 L438.7,361.3 L441.7,361.7 L444.7,361.9 L447.8,361.9 L450.8,361.8 L453.8,361.5 L456.7,361.1 L459.5,360.6 L462.2,359.9 L464.8,359.1 L467.2,358.1 L469.3,357.1 L471.3,355.9 L473.0,354.7 L474.5,353.4 L475.7,352.0Z" fill="url(#g11)" fill-rule="evenodd" clip-path="url(#c10)"/>
<path d="M476.6,350.6 L477.3,349.1 L477.6,347.6 L477.6,346.1 L477.4,344.6 L476.8,343.1 L476.0,341.6 L474.8,340.2 L473.5,338.9 L471.8,337.6 L469.9,336.4 L467.8,335.3 L465.4,334.3 L462.9,333.5 L460.3,332.7 L457.5,332.1 L454.6,331.7 L451.6,331.3 L448.6,331.2 L445.5,331.1 L442.5,331.2 L439.5,331.5 L436.6,331.9 L433.8,332.5 L431.1,333.1 L428.5,334.0 L426.1,334.9 L423.9,335.9 L422.0,337.1 L420.3,338.3 L418.8,339.6 L417.6,341.0 L416.7,342.4 L416.0,343.9 L415.7,345.4 L415.7,346.9 L415.9,348.4 L416.5,349.9 L417.3,351.4 L418.4,352.8 L419.8,354.1 L421.5,355.4 L423.4,356.6 L425.5,357.7 L427.9,358.7 L430.4,359.5 L433.0,360.3 L435.8,360.9 L438.7,361.3 L441.7,361.7 L444.7,361.9 L447.8,361.9 L450.8,361.8 L453.8,361.5 L456.7,361.1 L459.5,360.6 L462.2,359.9 L464.8,359.1 L467.2,358.1 L469.3,357.1 L471.3,355.9 L473.0,354.7 L474.5,353.4 L475.7,352.0Z" fill="none" stroke="#15181b" stroke-width="1.15" stroke-linejoin="round" clip-path="url(#c10)"/>
<path d="M476.6,337.1 L477.3,335.6 L477.6,334.1 L477.6,332.6 L477.4,331.1 L476.8,329.6 L476.0,328.2 L474.8,326.8 L473.5,325.4 L471.8,324.1 L469.9,323.0 L467.8,321.9 L465.4,320.9 L462.9,320.0 L460.3,319.3 L457.5,318.7 L454.6,318.2 L451.6,317.9 L448.6,317.7 L445.5,317.7 L442.5,317.8 L439.5,318.0 L436.6,318.4 L433.8,319.0 L431.1,319.7 L428.5,320.5 L426.1,321.4 L423.9,322.5 L422.0,323.6 L420.3,324.8 L418.8,326.2 L417.6,327.5 L416.7,329.0 L416.0,330.4 L415.7,331.9 L415.7,333.5 L415.9,335.0 L416.5,336.4 L417.3,337.9 L418.4,339.3 L419.8,340.7 L421.5,341.9 L423.4,343.1 L425.5,344.2 L427.9,345.2 L430.4,346.1 L433.0,346.8 L435.8,347.4 L438.7,347.9 L441.7,348.2 L444.7,348.4 L447.8,348.4 L450.8,348.3 L453.8,348.0 L456.7,347.6 L459.5,347.1 L462.2,346.4 L464.8,345.6 L467.2,344.7 L469.3,343.6 L471.3,342.5 L473.0,341.2 L474.5,339.9 L475.7,338.5Z" fill="none" stroke="#15181b" stroke-width="1.15" stroke-linejoin="round" />
<path d="M550.0,347.0 L550.7,345.6 L551.0,344.1 L551.0,342.6 L550.8,341.1 L550.2,339.6 L549.4,338.1 L548.2,336.7 L546.8,335.4 L545.2,334.1 L543.3,332.9 L541.2,331.8 L538.8,330.8 L536.3,330.0 L533.7,329.2 L530.9,328.6 L528.0,328.1 L525.0,327.8 L522.0,327.6 L518.9,327.6 L515.9,327.7 L512.9,328.0 L510.0,328.4 L507.2,328.9 L504.5,329.6 L501.9,330.4 L499.5,331.4 L497.3,332.4 L495.4,333.5 L493.7,334.8 L492.2,336.1 L491.0,337.5 L490.1,338.9 L489.4,340.4 L489.1,341.9 L489.1,343.4 L489.3,344.9 L489.9,346.4 L490.7,347.8 L491.8,349.3 L493.2,350.6 L494.9,351.9 L496.8,353.1 L498.9,354.2 L501.2,355.1 L503.8,356.0 L506.4,356.7 L509.2,357.3 L512.1,357.8 L515.1,358.1 L518.1,358.3 L521.2,358.4 L524.2,358.2 L527.2,358.0 L530.1,357.6 L532.9,357.0 L535.6,356.3 L538.2,355.5 L540.6,354.6 L542.7,353.6 L544.7,352.4 L546.4,351.2 L547.9,349.9 L549.1,348.5ZM550.0,360.5 L550.7,359.0 L551.0,357.5 L551.0,356.0 L550.8,354.5 L550.2,353.0 L549.4,351.6 L548.2,350.2 L546.8,348.8 L545.2,347.6 L543.3,346.4 L541.2,345.3 L538.8,344.3 L536.3,343.4 L533.7,342.7 L530.9,342.1 L528.0,341.6 L525.0,341.3 L522.0,341.1 L518.9,341.1 L515.9,341.2 L512.9,341.4 L510.0,341.9 L507.2,342.4 L504.5,343.1 L501.9,343.9 L499.5,344.8 L497.3,345.9 L495.4,347.0 L493.7,348.3 L492.2,349.6 L491.0,351.0 L490.1,352.4 L489.4,353.9 L489.1,355.4 L489.1,356.9 L489.3,358.4 L489.9,359.9 L490.7,361.3 L491.8,362.7 L493.2,364.1 L494.9,365.3 L496.8,366.5 L498.9,367.6 L501.2,368.6 L503.8,369.5 L506.4,370.2 L509.2,370.8 L512.1,371.3 L515.1,371.6 L518.1,371.8 L521.2,371.8 L524.2,371.7 L527.2,371.4 L530.1,371.0 L532.9,370.5 L535.6,369.8 L538.2,369.0 L540.6,368.1 L542.7,367.0 L544.7,365.9 L546.4,364.6 L547.9,363.3 L549.1,361.9Z" fill="url(#g13)" fill-rule="evenodd" clip-path="url(#c12)"/>
<path d="M550.0,360.5 L550.7,359.0 L551.0,357.5 L551.0,356.0 L550.8,354.5 L550.2,353.0 L549.4,351.6 L548.2,350.2 L546.8,348.8 L545.2,347.6 L543.3,346.4 L541.2,345.3 L538.8,344.3 L536.3,343.4 L533.7,342.7 L530.9,342.1 L528.0,341.6 L525.0,341.3 L522.0,341.1 L518.9,341.1 L515.9,341.2 L512.9,341.4 L510.0,341.9 L507.2,342.4 L504.5,343.1 L501.9,343.9 L499.5,344.8 L497.3,345.9 L495.4,347.0 L493.7,348.3 L492.2,349.6 L491.0,351.0 L490.1,352.4 L489.4,353.9 L489.1,355.4 L489.1,356.9 L489.3,358.4 L489.9,359.9 L490.7,361.3 L491.8,362.7 L493.2,364.1 L494.9,365.3 L496.8,366.5 L498.9,367.6 L501.2,368.6 L503.8,369.5 L506.4,370.2 L509.2,370.8 L512.1,371.3 L515.1,371.6 L518.1,371.8 L521.2,371.8 L524.2,371.7 L527.2,371.4 L530.1,371.0 L532.9,370.5 L535.6,369.8 L538.2,369.0 L540.6,368.1 L542.7,367.0 L544.7,365.9 L546.4,364.6 L547.9,363.3 L549.1,361.9Z" fill="none" stroke="#15181b" stroke-width="1.15" stroke-linejoin="round" clip-path="url(#c12)"/>
<path d="M550.0,347.0 L550.7,345.6 L551.0,344.1 L551.0,342.6 L550.8,341.1 L550.2,339.6 L549.4,338.1 L548.2,336.7 L546.8,335.4 L545.2,334.1 L543.3,332.9 L541.2,331.8 L538.8,330.8 L536.3,330.0 L533.7,329.2 L530.9,328.6 L528.0,328.1 L525.0,327.8 L522.0,327.6 L518.9,327.6 L515.9,327.7 L512.9,328.0 L510.0,328.4 L507.2,328.9 L504.5,329.6 L501.9,330.4 L499.5,331.4 L497.3,332.4 L495.4,333.5 L493.7,334.8 L492.2,336.1 L491.0,337.5 L490.1,338.9 L489.4,340.4 L489.1,341.9 L489.1,343.4 L489.3,344.9 L489.9,346.4 L490.7,347.8 L491.8,349.3 L493.2,350.6 L494.9,351.9 L496.8,353.1 L498.9,354.2 L501.2,355.1 L503.8,356.0 L506.4,356.7 L509.2,357.3 L512.1,357.8 L515.1,358.1 L518.1,358.3 L521.2,358.4 L524.2,358.2 L527.2,358.0 L530.1,357.6 L532.9,357.0 L535.6,356.3 L538.2,355.5 L540.6,354.6 L542.7,353.6 L544.7,352.4 L546.4,351.2 L547.9,349.9 L549.1,348.5Z" fill="none" stroke="#15181b" stroke-width="1.15" stroke-linejoin="round" />
<path d="M623.4,357.0 L624.0,355.5 L624.4,354.0 L624.4,352.5 L624.2,351.0 L623.6,349.5 L622.8,348.1 L621.6,346.6 L620.2,345.3 L618.6,344.0 L616.7,342.8 L614.6,341.7 L612.2,340.8 L609.7,339.9 L607.1,339.2 L604.3,338.6 L601.4,338.1 L598.4,337.8 L595.4,337.6 L592.3,337.5 L589.3,337.7 L586.3,337.9 L583.4,338.3 L580.5,338.9 L577.8,339.6 L575.3,340.4 L572.9,341.3 L570.7,342.3 L568.8,343.5 L567.1,344.7 L565.6,346.0 L564.4,347.4 L563.5,348.9 L562.8,350.3 L562.5,351.8 L562.5,353.3 L562.7,354.8 L563.3,356.3 L564.1,357.8 L565.2,359.2 L566.6,360.5 L568.3,361.8 L570.2,363.0 L572.3,364.1 L574.6,365.1 L577.2,365.9 L579.8,366.7 L582.6,367.3 L585.5,367.8 L588.5,368.1 L591.5,368.3 L594.6,368.3 L597.6,368.2 L600.6,367.9 L603.5,367.5 L606.3,367.0 L609.0,366.3 L611.6,365.5 L614.0,364.5 L616.1,363.5 L618.1,362.4 L619.8,361.1 L621.3,359.8 L622.5,358.4ZM623.4,370.5 L624.0,369.0 L624.4,367.5 L624.4,366.0 L624.2,364.5 L623.6,363.0 L622.8,361.5 L621.6,360.1 L620.2,358.8 L618.6,357.5 L616.7,356.3 L614.6,355.2 L612.2,354.2 L609.7,353.4 L607.1,352.6 L604.3,352.0 L601.4,351.6 L598.4,351.2 L595.4,351.0 L592.3,351.0 L589.3,351.1 L586.3,351.4 L583.4,351.8 L580.5,352.3 L577.8,353.0 L575.3,353.8 L572.9,354.8 L570.7,355.8 L568.8,357.0 L567.1,358.2 L565.6,359.5 L564.4,360.9 L563.5,362.3 L562.8,363.8 L562.5,365.3 L562.5,366.8 L562.7,368.3 L563.3,369.8 L564.1,371.3 L565.2,372.7 L566.6,374.0 L568.3,375.3 L570.2,376.5 L572.3,377.6 L574.6,378.5 L577.2,379.4 L579.8,380.2 L582.6,380.8 L585.5,381.2 L588.5,381.6 L591.5,381.7 L594.6,381.8 L597.6,381.7 L600.6,381.4 L603.5,381.0 L606.3,380.4 L609.0,379.8 L611.6,378.9 L614.0,378.0 L616.1,377.0 L618.1,375.8 L619.8,374.6 L621.3,373.3 L622.5,371.9Z" fill="url(#g15)" fill-rule="evenodd" clip-path="url(#c14)"/>
<path d="M623.4,370.5 L624.0,369.0 L624.4,367.5 L624.4,366.0 L624.2,364.5 L623.6,363.0 L622.8,361.5 L621.6,360.1 L620.2,358.8 L618.6,357.5 L616.7,356.3 L614.6,355.2 L612.2,354.2 L609.7,353.4 L607.1,352.6 L604.3,352.0 L601.4,351.6 L598.4,351.2 L595.4,351.0 L592.3,351.0 L589.3,351.1 L586.3,351.4 L583.4,351.8 L580.5,352.3 L577.8,353.0 L575.3,353.8 L572.9,354.8 L570.7,355.8 L568.8,357.0 L567.1,358.2 L565.6,359.5 L564.4,360.9 L563.5,362.3 L562.8,363.8 L562.5,365.3 L562.5,366.8 L562.7,368.3 L563.3,369.8 L564.1,371.3 L565.2,372.7 L566.6,374.0 L568.3,375.3 L570.2,376.5 L572.3,377.6 L574.6,378.5 L577.2,379.4 L579.8,380.2 L582.6,380.8 L585.5,381.2 L588.5,381.6 L591.5,381.7 L594.6,381.8 L597.6,381.7 L600.6,381.4 L603.5,381.0 L606.3,380.4 L609.0,379.8 L611.6,378.9 L614.0,378.0 L616.1,377.0 L618.1,375.8 L619.8,374.6 L621.3,373.3 L622.5,371.9Z" fill="none" stroke="#15181b" stroke-width="1.15" stroke-linejoin="round" clip-path="url(#c14)"/>
<path d="M623.4,357.0 L624.0,355.5 L624.4,354.0 L624.4,352.5 L624.2,351.0 L623.6,349.5 L622.8,348.1 L621.6,346.6 L620.2,345.3 L618.6,344.0 L616.7,342.8 L614.6,341.7 L612.2,340.8 L609.7,339.9 L607.1,339.2 L604.3,338.6 L601.4,338.1 L598.4,337.8 L595.4,337.6 L592.3,337.5 L589.3,337.7 L586.3,337.9 L583.4,338.3 L580.5,338.9 L577.8,339.6 L575.3,340.4 L572.9,341.3 L570.7,342.3 L568.8,343.5 L567.1,344.7 L565.6,346.0 L564.4,347.4 L563.5,348.9 L562.8,350.3 L562.5,351.8 L562.5,353.3 L562.7,354.8 L563.3,356.3 L564.1,357.8 L565.2,359.2 L566.6,360.5 L568.3,361.8 L570.2,363.0 L572.3,364.1 L574.6,365.1 L577.2,365.9 L579.8,366.7 L582.6,367.3 L585.5,367.8 L588.5,368.1 L591.5,368.3 L594.6,368.3 L597.6,368.2 L600.6,367.9 L603.5,367.5 L606.3,367.0 L609.0,366.3 L611.6,365.5 L614.0,364.5 L616.1,363.5 L618.1,362.4 L619.8,361.1 L621.3,359.8 L622.5,358.4Z" fill="none" stroke="#15181b" stroke-width="1.15" stroke-linejoin="round" />
<polygon points="238.3,337.1 621.2,389.0 621.2,402.5 238.3,350.6" fill="#536b7d" stroke="#15181b" stroke-width="1.15" stroke-linejoin="round" />
<path d="M238.3,266.5 L621.2,319.2 L676.5,215.8 L293.5,163.1ZM329.4,246.6 L330.0,245.2 L330.3,243.7 L330.4,242.2 L330.1,240.7 L329.5,239.2 L328.7,237.7 L327.6,236.3 L326.2,234.9 L324.5,233.7 L322.6,232.5 L320.5,231.4 L318.2,230.4 L315.7,229.5 L313.0,228.8 L310.2,228.2 L307.3,227.7 L304.3,227.4 L301.3,227.2 L298.3,227.1 L295.2,227.2 L292.2,227.5 L289.3,227.9 L286.5,228.4 L283.8,229.1 L281.2,229.9 L278.9,230.9 L276.7,231.9 L274.7,233.0 L273.0,234.3 L271.5,235.6 L270.3,237.0 L269.4,238.4 L268.8,239.9 L268.4,241.4 L268.4,242.9 L268.6,244.4 L269.2,245.9 L270.0,247.3 L271.2,248.8 L272.6,250.1 L274.2,251.4 L276.1,252.6 L278.3,253.7 L280.6,254.7 L283.1,255.5 L285.8,256.3 L288.5,256.9 L291.4,257.4 L294.4,257.7 L297.4,257.9 L300.5,257.9 L303.5,257.8 L306.5,257.6 L309.4,257.2 L312.3,256.6 L315.0,255.9 L317.5,255.1 L319.9,254.2 L322.1,253.2 L324.0,252.0 L325.8,250.8 L327.2,249.5 L328.4,248.1ZM402.7,256.7 L403.4,255.3 L403.7,253.8 L403.8,252.3 L403.5,250.8 L402.9,249.3 L402.1,247.8 L401.0,246.4 L399.6,245.0 L397.9,243.8 L396.0,242.6 L393.9,241.5 L391.6,240.5 L389.1,239.6 L386.4,238.9 L383.6,238.3 L380.7,237.8 L377.7,237.4 L374.7,237.3 L371.7,237.2 L368.6,237.3 L365.6,237.6 L362.7,238.0 L359.9,238.5 L357.2,239.2 L354.6,240.0 L352.2,240.9 L350.1,242.0 L348.1,243.1 L346.4,244.4 L344.9,245.7 L343.7,247.1 L342.8,248.5 L342.2,250.0 L341.8,251.5 L341.8,253.0 L342.0,254.5 L342.6,256.0 L343.4,257.4 L344.6,258.8 L346.0,260.2 L347.6,261.5 L349.5,262.7 L351.6,263.8 L354.0,264.8 L356.5,265.6 L359.1,266.4 L361.9,267.0 L364.8,267.5 L367.8,267.8 L370.8,268.0 L373.9,268.0 L376.9,267.9 L379.9,267.7 L382.8,267.3 L385.7,266.7 L388.4,266.0 L390.9,265.2 L393.3,264.3 L395.5,263.3 L397.4,262.1 L399.2,260.9 L400.6,259.6 L401.8,258.2ZM476.1,266.8 L476.8,265.4 L477.1,263.9 L477.2,262.4 L476.9,260.8 L476.3,259.4 L475.5,257.9 L474.4,256.5 L473.0,255.1 L471.3,253.9 L469.4,252.7 L467.3,251.6 L465.0,250.6 L462.5,249.7 L459.8,249.0 L457.0,248.4 L454.1,247.9 L451.1,247.5 L448.1,247.4 L445.0,247.3 L442.0,247.4 L439.0,247.7 L436.1,248.1 L433.3,248.6 L430.6,249.3 L428.0,250.1 L425.6,251.0 L423.5,252.1 L421.5,253.2 L419.8,254.5 L418.3,255.8 L417.1,257.2 L416.2,258.6 L415.6,260.1 L415.2,261.6 L415.2,263.1 L415.4,264.6 L416.0,266.1 L416.8,267.5 L418.0,268.9 L419.4,270.3 L421.0,271.6 L422.9,272.8 L425.0,273.9 L427.4,274.8 L429.9,275.7 L432.5,276.5 L435.3,277.1 L438.2,277.6 L441.2,277.9 L444.2,278.1 L447.3,278.1 L450.3,278.0 L453.3,277.7 L456.2,277.3 L459.1,276.8 L461.8,276.1 L464.3,275.3 L466.7,274.4 L468.9,273.3 L470.8,272.2 L472.6,271.0 L474.0,269.7 L475.2,268.3ZM549.5,276.9 L550.2,275.5 L550.5,274.0 L550.5,272.4 L550.3,270.9 L549.7,269.5 L548.9,268.0 L547.8,266.6 L546.4,265.2 L544.7,264.0 L542.8,262.8 L540.7,261.7 L538.4,260.7 L535.8,259.8 L533.2,259.1 L530.4,258.4 L527.5,258.0 L524.5,257.6 L521.5,257.5 L518.4,257.4 L515.4,257.5 L512.4,257.8 L509.5,258.2 L506.7,258.7 L504.0,259.4 L501.4,260.2 L499.0,261.1 L496.9,262.2 L494.9,263.3 L493.2,264.6 L491.7,265.9 L490.5,267.3 L489.6,268.7 L489.0,270.2 L488.6,271.7 L488.6,273.2 L488.8,274.7 L489.4,276.2 L490.2,277.6 L491.4,279.0 L492.8,280.4 L494.4,281.7 L496.3,282.9 L498.4,284.0 L500.8,284.9 L503.3,285.8 L505.9,286.6 L508.7,287.2 L511.6,287.7 L514.6,288.0 L517.6,288.2 L520.7,288.2 L523.7,288.1 L526.7,287.8 L529.6,287.4 L532.5,286.9 L535.2,286.2 L537.7,285.4 L540.1,284.5 L542.3,283.4 L544.2,282.3 L545.9,281.1 L547.4,279.7 L548.6,278.4ZM622.9,287.0 L623.6,285.6 L623.9,284.1 L623.9,282.5 L623.7,281.0 L623.1,279.5 L622.3,278.1 L621.2,276.7 L619.8,275.3 L618.1,274.0 L616.2,272.9 L614.1,271.8 L611.8,270.8 L609.2,269.9 L606.6,269.2 L603.8,268.5 L600.9,268.1 L597.9,267.7 L594.9,267.5 L591.8,267.5 L588.8,267.6 L585.8,267.9 L582.9,268.3 L580.1,268.8 L577.4,269.5 L574.8,270.3 L572.4,271.2 L570.3,272.3 L568.3,273.4 L566.6,274.7 L565.1,276.0 L563.9,277.3 L563.0,278.8 L562.3,280.3 L562.0,281.8 L562.0,283.3 L562.2,284.8 L562.8,286.3 L563.6,287.7 L564.8,289.1 L566.2,290.5 L567.8,291.8 L569.7,293.0 L571.8,294.0 L574.2,295.0 L576.7,295.9 L579.3,296.7 L582.1,297.3 L585.0,297.7 L588.0,298.1 L591.0,298.3 L594.1,298.3 L597.1,298.2 L600.1,297.9 L603.0,297.5 L605.8,297.0 L608.5,296.3 L611.1,295.5 L613.5,294.6 L615.7,293.5 L617.6,292.4 L619.3,291.2 L620.8,289.8 L622.0,288.5ZM356.7,195.4 L357.3,194.0 L357.7,192.5 L357.7,190.9 L357.5,189.4 L356.9,187.9 L356.1,186.5 L354.9,185.1 L353.5,183.7 L351.9,182.4 L350.0,181.3 L347.9,180.2 L345.5,179.2 L343.0,178.3 L340.4,177.6 L337.6,176.9 L334.7,176.5 L331.7,176.1 L328.7,175.9 L325.6,175.9 L322.6,176.0 L319.6,176.3 L316.7,176.7 L313.8,177.2 L311.1,177.9 L308.6,178.7 L306.2,179.6 L304.0,180.7 L302.1,181.8 L300.3,183.1 L298.9,184.4 L297.7,185.7 L296.8,187.2 L296.1,188.7 L295.8,190.2 L295.7,191.7 L296.0,193.2 L296.6,194.7 L297.4,196.1 L298.5,197.5 L299.9,198.9 L301.6,200.2 L303.5,201.4 L305.6,202.4 L307.9,203.4 L310.4,204.3 L313.1,205.1 L315.9,205.7 L318.8,206.1 L321.8,206.5 L324.8,206.7 L327.9,206.7 L330.9,206.6 L333.9,206.3 L336.8,205.9 L339.6,205.4 L342.3,204.7 L344.9,203.9 L347.3,203.0 L349.4,201.9 L351.4,200.8 L353.1,199.6 L354.6,198.2 L355.8,196.9ZM430.1,205.5 L430.7,204.0 L431.1,202.5 L431.1,201.0 L430.9,199.5 L430.3,198.0 L429.5,196.6 L428.3,195.2 L426.9,193.8 L425.3,192.5 L423.4,191.4 L421.3,190.3 L418.9,189.3 L416.4,188.4 L413.8,187.6 L411.0,187.0 L408.1,186.6 L405.1,186.2 L402.1,186.0 L399.0,186.0 L396.0,186.1 L393.0,186.4 L390.1,186.8 L387.2,187.3 L384.5,188.0 L382.0,188.8 L379.6,189.7 L377.4,190.8 L375.5,191.9 L373.7,193.1 L372.3,194.5 L371.1,195.8 L370.2,197.3 L369.5,198.8 L369.2,200.3 L369.1,201.8 L369.4,203.3 L370.0,204.8 L370.8,206.2 L371.9,207.6 L373.3,209.0 L375.0,210.3 L376.9,211.4 L379.0,212.5 L381.3,213.5 L383.8,214.4 L386.5,215.2 L389.3,215.8 L392.2,216.2 L395.2,216.6 L398.2,216.8 L401.2,216.8 L404.3,216.7 L407.3,216.4 L410.2,216.0 L413.0,215.5 L415.7,214.8 L418.3,214.0 L420.7,213.1 L422.8,212.0 L424.8,210.9 L426.5,209.7 L428.0,208.3 L429.2,207.0ZM503.5,215.6 L504.1,214.1 L504.5,212.6 L504.5,211.1 L504.3,209.6 L503.7,208.1 L502.9,206.7 L501.7,205.3 L500.3,203.9 L498.7,202.6 L496.8,201.4 L494.6,200.4 L492.3,199.4 L489.8,198.5 L487.1,197.7 L484.4,197.1 L481.5,196.7 L478.5,196.3 L475.5,196.1 L472.4,196.1 L469.4,196.2 L466.4,196.5 L463.5,196.9 L460.6,197.4 L457.9,198.1 L455.4,198.9 L453.0,199.8 L450.8,200.9 L448.9,202.0 L447.1,203.2 L445.7,204.6 L444.5,205.9 L443.5,207.4 L442.9,208.8 L442.6,210.3 L442.5,211.9 L442.8,213.4 L443.4,214.9 L444.2,216.3 L445.3,217.7 L446.7,219.1 L448.4,220.4 L450.3,221.5 L452.4,222.6 L454.7,223.6 L457.2,224.5 L459.9,225.2 L462.7,225.9 L465.6,226.3 L468.6,226.7 L471.6,226.9 L474.6,226.9 L477.7,226.8 L480.7,226.5 L483.6,226.1 L486.4,225.6 L489.1,224.9 L491.7,224.1 L494.0,223.2 L496.2,222.1 L498.2,221.0 L499.9,219.7 L501.4,218.4 L502.6,217.1ZM576.9,225.7 L577.5,224.2 L577.9,222.7 L577.9,221.2 L577.6,219.7 L577.1,218.2 L576.2,216.8 L575.1,215.4 L573.7,214.0 L572.1,212.7 L570.2,211.5 L568.0,210.4 L565.7,209.5 L563.2,208.6 L560.5,207.8 L557.7,207.2 L554.8,206.7 L551.9,206.4 L548.8,206.2 L545.8,206.2 L542.8,206.3 L539.8,206.6 L536.9,207.0 L534.0,207.5 L531.3,208.2 L528.8,209.0 L526.4,209.9 L524.2,211.0 L522.3,212.1 L520.5,213.3 L519.1,214.7 L517.9,216.0 L516.9,217.5 L516.3,218.9 L516.0,220.4 L515.9,222.0 L516.2,223.5 L516.7,224.9 L517.6,226.4 L518.7,227.8 L520.1,229.2 L521.8,230.4 L523.7,231.6 L525.8,232.7 L528.1,233.7 L530.6,234.6 L533.3,235.3 L536.1,236.0 L539.0,236.4 L542.0,236.8 L545.0,236.9 L548.0,237.0 L551.1,236.9 L554.1,236.6 L557.0,236.2 L559.8,235.7 L562.5,235.0 L565.1,234.2 L567.4,233.3 L569.6,232.2 L571.6,231.1 L573.3,229.8 L574.8,228.5 L576.0,227.1ZM650.3,235.8 L650.9,234.3 L651.3,232.8 L651.3,231.3 L651.0,229.8 L650.5,228.3 L649.6,226.9 L648.5,225.5 L647.1,224.1 L645.5,222.8 L643.6,221.6 L641.4,220.5 L639.1,219.6 L636.6,218.7 L633.9,217.9 L631.1,217.3 L628.2,216.8 L625.3,216.5 L622.2,216.3 L619.2,216.3 L616.2,216.4 L613.2,216.7 L610.3,217.1 L607.4,217.6 L604.7,218.3 L602.2,219.1 L599.8,220.0 L597.6,221.1 L595.7,222.2 L593.9,223.4 L592.5,224.7 L591.3,226.1 L590.3,227.6 L589.7,229.0 L589.4,230.5 L589.3,232.0 L589.6,233.6 L590.1,235.0 L591.0,236.5 L592.1,237.9 L593.5,239.3 L595.2,240.5 L597.1,241.7 L599.2,242.8 L601.5,243.8 L604.0,244.7 L606.7,245.4 L609.5,246.0 L612.4,246.5 L615.4,246.9 L618.4,247.0 L621.4,247.1 L624.5,247.0 L627.5,246.7 L630.4,246.3 L633.2,245.8 L635.9,245.1 L638.5,244.3 L640.8,243.4 L643.0,242.3 L645.0,241.2 L646.7,239.9 L648.2,238.6 L649.4,237.2Z" fill="#8ab7d3" stroke="#15181b" stroke-width="1.15" stroke-linejoin="round" fill-rule="evenodd"/>
<path d="M329.4,246.6 L330.0,245.2 L330.3,243.7 L330.4,242.2 L330.1,240.7 L329.5,239.2 L328.7,237.7 L327.6,236.3 L326.2,234.9 L324.5,233.7 L322.6,232.5 L320.5,231.4 L318.2,230.4 L315.7,229.5 L313.0,228.8 L310.2,228.2 L307.3,227.7 L304.3,227.4 L301.3,227.2 L298.3,227.1 L295.2,227.2 L292.2,227.5 L289.3,227.9 L286.5,228.4 L283.8,229.1 L281.2,229.9 L278.9,230.9 L276.7,231.9 L274.7,233.0 L273.0,234.3 L271.5,235.6 L270.3,237.0 L269.4,238.4 L268.8,239.9 L268.4,241.4 L268.4,242.9 L268.6,244.4 L269.2,245.9 L270.0,247.3 L271.2,248.8 L272.6,250.1 L274.2,251.4 L276.1,252.6 L278.3,253.7 L280.6,254.7 L283.1,255.5 L285.8,256.3 L288.5,256.9 L291.4,257.4 L294.4,257.7 L297.4,257.9 L300.5,257.9 L303.5,257.8 L306.5,257.6 L309.4,257.2 L312.3,256.6 L315.0,255.9 L317.5,255.1 L319.9,254.2 L322.1,253.2 L324.0,252.0 L325.8,250.8 L327.2,249.5 L328.4,248.1ZM329.4,260.1 L330.0,258.6 L330.3,257.1 L330.4,255.6 L330.1,254.1 L329.5,252.6 L328.7,251.2 L327.6,249.8 L326.2,248.4 L324.5,247.1 L322.6,245.9 L320.5,244.9 L318.2,243.9 L315.7,243.0 L313.0,242.2 L310.2,241.6 L307.3,241.2 L304.3,240.8 L301.3,240.6 L298.3,240.6 L295.2,240.7 L292.2,241.0 L289.3,241.4 L286.5,241.9 L283.8,242.6 L281.2,243.4 L278.9,244.3 L276.7,245.4 L274.7,246.5 L273.0,247.7 L271.5,249.1 L270.3,250.4 L269.4,251.9 L268.8,253.3 L268.4,254.8 L268.4,256.4 L268.6,257.9 L269.2,259.4 L270.0,260.8 L271.2,262.2 L272.6,263.6 L274.2,264.9 L276.1,266.0 L278.3,267.1 L280.6,268.1 L283.1,269.0 L285.8,269.7 L288.5,270.4 L291.4,270.8 L294.4,271.2 L297.4,271.4 L300.5,271.4 L303.5,271.3 L306.5,271.0 L309.4,270.6 L312.3,270.1 L315.0,269.4 L317.5,268.6 L319.9,267.7 L322.1,266.6 L324.0,265.5 L325.8,264.2 L327.2,262.9 L328.4,261.6Z" fill="url(#g18)" fill-rule="evenodd" clip-path="url(#c17)"/>
<path d="M329.4,260.1 L330.0,258.6 L330.3,257.1 L330.4,255.6 L330.1,254.1 L329.5,252.6 L328.7,251.2 L327.6,249.8 L326.2,248.4 L324.5,247.1 L322.6,245.9 L320.5,244.9 L318.2,243.9 L315.7,243.0 L313.0,242.2 L310.2,241.6 L307.3,241.2 L304.3,240.8 L301.3,240.6 L298.3,240.6 L295.2,240.7 L292.2,241.0 L289.3,241.4 L286.5,241.9 L283.8,242.6 L281.2,243.4 L278.9,244.3 L276.7,245.4 L274.7,246.5 L273.0,247.7 L271.5,249.1 L270.3,250.4 L269.4,251.9 L268.8,253.3 L268.4,254.8 L268.4,256.4 L268.6,257.9 L269.2,259.4 L270.0,260.8 L271.2,262.2 L272.6,263.6 L274.2,264.9 L276.1,266.0 L278.3,267.1 L280.6,268.1 L283.1,269.0 L285.8,269.7 L288.5,270.4 L291.4,270.8 L294.4,271.2 L297.4,271.4 L300.5,271.4 L303.5,271.3 L306.5,271.0 L309.4,270.6 L312.3,270.1 L315.0,269.4 L317.5,268.6 L319.9,267.7 L322.1,266.6 L324.0,265.5 L325.8,264.2 L327.2,262.9 L328.4,261.6Z" fill="none" stroke="#15181b" stroke-width="1.15" stroke-linejoin="round" clip-path="url(#c17)"/>
<path d="M329.4,246.6 L330.0,245.2 L330.3,243.7 L330.4,242.2 L330.1,240.7 L329.5,239.2 L328.7,237.7 L327.6,236.3 L326.2,234.9 L324.5,233.7 L322.6,232.5 L320.5,231.4 L318.2,230.4 L315.7,229.5 L313.0,228.8 L310.2,228.2 L307.3,227.7 L304.3,227.4 L301.3,227.2 L298.3,227.1 L295.2,227.2 L292.2,227.5 L289.3,227.9 L286.5,228.4 L283.8,229.1 L281.2,229.9 L278.9,230.9 L276.7,231.9 L274.7,233.0 L273.0,234.3 L271.5,235.6 L270.3,237.0 L269.4,238.4 L268.8,239.9 L268.4,241.4 L268.4,242.9 L268.6,244.4 L269.2,245.9 L270.0,247.3 L271.2,248.8 L272.6,250.1 L274.2,251.4 L276.1,252.6 L278.3,253.7 L280.6,254.7 L283.1,255.5 L285.8,256.3 L288.5,256.9 L291.4,257.4 L294.4,257.7 L297.4,257.9 L300.5,257.9 L303.5,257.8 L306.5,257.6 L309.4,257.2 L312.3,256.6 L315.0,255.9 L317.5,255.1 L319.9,254.2 L322.1,253.2 L324.0,252.0 L325.8,250.8 L327.2,249.5 L328.4,248.1Z" fill="none" stroke="#15181b" stroke-width="1.15" stroke-linejoin="round" />
<path d="M402.7,256.7 L403.4,255.3 L403.7,253.8 L403.8,252.3 L403.5,250.8 L402.9,249.3 L402.1,247.8 L401.0,246.4 L399.6,245.0 L397.9,243.8 L396.0,242.6 L393.9,241.5 L391.6,240.5 L389.1,239.6 L386.4,238.9 L383.6,238.3 L380.7,237.8 L377.7,237.4 L374.7,237.3 L371.7,237.2 L368.6,237.3 L365.6,237.6 L362.7,238.0 L359.9,238.5 L357.2,239.2 L354.6,240.0 L352.2,240.9 L350.1,242.0 L348.1,243.1 L346.4,244.4 L344.9,245.7 L343.7,247.1 L342.8,248.5 L342.2,250.0 L341.8,251.5 L341.8,253.0 L342.0,254.5 L342.6,256.0 L343.4,257.4 L344.6,258.8 L346.0,260.2 L347.6,261.5 L349.5,262.7 L351.6,263.8 L354.0,264.8 L356.5,265.6 L359.1,266.4 L361.9,267.0 L364.8,267.5 L367.8,267.8 L370.8,268.0 L373.9,268.0 L376.9,267.9 L379.9,267.7 L382.8,267.3 L385.7,266.7 L388.4,266.0 L390.9,265.2 L393.3,264.3 L395.5,263.3 L397.4,262.1 L399.2,260.9 L400.6,259.6 L401.8,258.2ZM402.7,270.2 L403.4,268.7 L403.7,267.2 L403.8,265.7 L403.5,264.2 L402.9,262.7 L402.1,261.3 L401.0,259.9 L399.6,258.5 L397.9,257.2 L396.0,256.0 L393.9,254.9 L391.6,254.0 L389.1,253.1 L386.4,252.3 L383.6,251.7 L380.7,251.3 L377.7,250.9 L374.7,250.7 L371.7,250.7 L368.6,250.8 L365.6,251.1 L362.7,251.5 L359.9,252.0 L357.2,252.7 L354.6,253.5 L352.2,254.4 L350.1,255.5 L348.1,256.6 L346.4,257.8 L344.9,259.2 L343.7,260.5 L342.8,262.0 L342.2,263.4 L341.8,264.9 L341.8,266.5 L342.0,268.0 L342.6,269.4 L343.4,270.9 L344.6,272.3 L346.0,273.7 L347.6,274.9 L349.5,276.1 L351.6,277.2 L354.0,278.2 L356.5,279.1 L359.1,279.8 L361.9,280.5 L364.8,280.9 L367.8,281.3 L370.8,281.4 L373.9,281.5 L376.9,281.4 L379.9,281.1 L382.8,280.7 L385.7,280.2 L388.4,279.5 L390.9,278.7 L393.3,277.8 L395.5,276.7 L397.4,275.6 L399.2,274.3 L400.6,273.0 L401.8,271.6Z" fill="url(#g20)" fill-rule="evenodd" clip-path="url(#c19)"/>
<path d="M402.7,270.2 L403.4,268.7 L403.7,267.2 L403.8,265.7 L403.5,264.2 L402.9,262.7 L402.1,261.3 L401.0,259.9 L399.6,258.5 L397.9,257.2 L396.0,256.0 L393.9,254.9 L391.6,254.0 L389.1,253.1 L386.4,252.3 L383.6,251.7 L380.7,251.3 L377.7,250.9 L374.7,250.7 L371.7,250.7 L368.6,250.8 L365.6,251.1 L362.7,251.5 L359.9,252.0 L357.2,252.7 L354.6,253.5 L352.2,254.4 L350.1,255.5 L348.1,256.6 L346.4,257.8 L344.9,259.2 L343.7,260.5 L342.8,262.0 L342.2,263.4 L341.8,264.9 L341.8,266.5 L342.0,268.0 L342.6,269.4 L343.4,270.9 L344.6,272.3 L346.0,273.7 L347.6,274.9 L349.5,276.1 L351.6,277.2 L354.0,278.2 L356.5,279.1 L359.1,279.8 L361.9,280.5 L364.8,280.9 L367.8,281.3 L370.8,281.4 L373.9,281.5 L376.9,281.4 L379.9,281.1 L382.8,280.7 L385.7,280.2 L388.4,279.5 L390.9,278.7 L393.3,277.8 L395.5,276.7 L397.4,275.6 L399.2,274.3 L400.6,273.0 L401.8,271.6Z" fill="none" stroke="#15181b" stroke-width="1.15" stroke-linejoin="round" clip-path="url(#c19)"/>
<path d="M402.7,256.7 L403.4,255.3 L403.7,253.8 L403.8,252.3 L403.5,250.8 L402.9,249.3 L402.1,247.8 L401.0,246.4 L399.6,245.0 L397.9,243.8 L396.0,242.6 L393.9,241.5 L391.6,240.5 L389.1,239.6 L386.4,238.9 L383.6,238.3 L380.7,237.8 L377.7,237.4 L374.7,237.3 L371.7,237.2 L368.6,237.3 L365.6,237.6 L362.7,238.0 L359.9,238.5 L357.2,239.2 L354.6,240.0 L352.2,240.9 L350.1,242.0 L348.1,243.1 L346.4,244.4 L344.9,245.7 L343.7,247.1 L342.8,248.5 L342.2,250.0 L341.8,251.5 L341.8,253.0 L342.0,254.5 L342.6,256.0 L343.4,257.4 L344.6,258.8 L346.0,260.2 L347.6,261.5 L349.5,262.7 L351.6,263.8 L354.0,264.8 L356.5,265.6 L359.1,266.4 L361.9,267.0 L364.8,267.5 L367.8,267.8 L370.8,268.0 L373.9,268.0 L376.9,267.9 L379.9,267.7 L382.8,267.3 L385.7,266.7 L388.4,266.0 L390.9,265.2 L393.3,264.3 L395.5,263.3 L397.4,262.1 L399.2,260.9 L400.6,259.6 L401.8,258.2Z" fill="none" stroke="#15181b" stroke-width="1.15" stroke-linejoin="round" />
<path d="M476.1,266.8 L476.8,265.4 L477.1,263.9 L477.2,262.4 L476.9,260.8 L476.3,259.4 L475.5,257.9 L474.4,256.5 L473.0,255.1 L471.3,253.9 L469.4,252.7 L467.3,251.6 L465.0,250.6 L462.5,249.7 L459.8,249.0 L457.0,248.4 L454.1,247.9 L451.1,247.5 L448.1,247.4 L445.0,247.3 L442.0,247.4 L439.0,247.7 L436.1,248.1 L433.3,248.6 L430.6,249.3 L428.0,250.1 L425.6,251.0 L423.5,252.1 L421.5,253.2 L419.8,254.5 L418.3,255.8 L417.1,257.2 L416.2,258.6 L415.6,260.1 L415.2,261.6 L415.2,263.1 L415.4,264.6 L416.0,266.1 L416.8,267.5 L418.0,268.9 L419.4,270.3 L421.0,271.6 L422.9,272.8 L425.0,273.9 L427.4,274.8 L429.9,275.7 L432.5,276.5 L435.3,277.1 L438.2,277.6 L441.2,277.9 L444.2,278.1 L447.3,278.1 L450.3,278.0 L453.3,277.7 L456.2,277.3 L459.1,276.8 L461.8,276.1 L464.3,275.3 L466.7,274.4 L468.9,273.3 L470.8,272.2 L472.6,271.0 L474.0,269.7 L475.2,268.3ZM476.1,280.3 L476.8,278.8 L477.1,277.3 L477.2,275.8 L476.9,274.3 L476.3,272.8 L475.5,271.4 L474.4,270.0 L473.0,268.6 L471.3,267.3 L469.4,266.1 L467.3,265.0 L465.0,264.1 L462.5,263.2 L459.8,262.4 L457.0,261.8 L454.1,261.3 L451.1,261.0 L448.1,260.8 L445.0,260.8 L442.0,260.9 L439.0,261.2 L436.1,261.6 L433.3,262.1 L430.6,262.8 L428.0,263.6 L425.6,264.5 L423.5,265.6 L421.5,266.7 L419.8,267.9 L418.3,269.2 L417.1,270.6 L416.2,272.1 L415.6,273.5 L415.2,275.0 L415.2,276.5 L415.4,278.1 L416.0,279.5 L416.8,281.0 L418.0,282.4 L419.4,283.8 L421.0,285.0 L422.9,286.2 L425.0,287.3 L427.4,288.3 L429.9,289.2 L432.5,289.9 L435.3,290.5 L438.2,291.0 L441.2,291.4 L444.2,291.5 L447.3,291.6 L450.3,291.5 L453.3,291.2 L456.2,290.8 L459.1,290.3 L461.8,289.6 L464.3,288.8 L466.7,287.9 L468.9,286.8 L470.8,285.7 L472.6,284.4 L474.0,283.1 L475.2,281.7Z" fill="url(#g22)" fill-rule="evenodd" clip-path="url(#c21)"/>
<path d="M476.1,280.3 L476.8,278.8 L477.1,277.3 L477.2,275.8 L476.9,274.3 L476.3,272.8 L475.5,271.4 L474.4,270.0 L473.0,268.6 L471.3,267.3 L469.4,266.1 L467.3,265.0 L465.0,264.1 L462.5,263.2 L459.8,262.4 L457.0,261.8 L454.1,261.3 L451.1,261.0 L448.1,260.8 L445.0,260.8 L442.0,260.9 L439.0,261.2 L436.1,261.6 L433.3,262.1 L430.6,262.8 L428.0,263.6 L425.6,264.5 L423.5,265.6 L421.5,266.7 L419.8,267.9 L418.3,269.2 L417.1,270.6 L416.2,272.1 L415.6,273.5 L415.2,275.0 L415.2,276.5 L415.4,278.1 L416.0,279.5 L416.8,281.0 L418.0,282.4 L419.4,283.8 L421.0,285.0 L422.9,286.2 L425.0,287.3 L427.4,288.3 L429.9,289.2 L432.5,289.9 L435.3,290.5 L438.2,291.0 L441.2,291.4 L444.2,291.5 L447.3,291.6 L450.3,291.5 L453.3,291.2 L456.2,290.8 L459.1,290.3 L461.8,289.6 L464.3,288.8 L466.7,287.9 L468.9,286.8 L470.8,285.7 L472.6,284.4 L474.0,283.1 L475.2,281.7Z" fill="none" stroke="#15181b" stroke-width="1.15" stroke-linejoin="round" clip-path="url(#c21)"/>
<path d="M476.1,266.8 L476.8,265.4 L477.1,263.9 L477.2,262.4 L476.9,260.8 L476.3,259.4 L475.5,257.9 L474.4,256.5 L473.0,255.1 L471.3,253.9 L469.4,252.7 L467.3,251.6 L465.0,250.6 L462.5,249.7 L459.8,249.0 L457.0,248.4 L454.1,247.9 L451.1,247.5 L448.1,247.4 L445.0,247.3 L442.0,247.4 L439.0,247.7 L436.1,248.1 L433.3,248.6 L430.6,249.3 L428.0,250.1 L425.6,251.0 L423.5,252.1 L421.5,253.2 L419.8,254.5 L418.3,255.8 L417.1,257.2 L416.2,258.6 L415.6,260.1 L415.2,261.6 L415.2,263.1 L415.4,264.6 L416.0,266.1 L416.8,267.5 L418.0,268.9 L419.4,270.3 L421.0,271.6 L422.9,272.8 L425.0,273.9 L427.4,274.8 L429.9,275.7 L432.5,276.5 L435.3,277.1 L438.2,277.6 L441.2,277.9 L444.2,278.1 L447.3,278.1 L450.3,278.0 L453.3,277.7 L456.2,277.3 L459.1,276.8 L461.8,276.1 L464.3,275.3 L466.7,274.4 L468.9,273.3 L470.8,272.2 L472.6,271.0 L474.0,269.7 L475.2,268.3Z" fill="none" stroke="#15181b" stroke-width="1.15" stroke-linejoin="round" />
<path d="M549.5,276.9 L550.2,275.5 L550.5,274.0 L550.5,272.4 L550.3,270.9 L549.7,269.5 L548.9,268.0 L547.8,266.6 L546.4,265.2 L544.7,264.0 L542.8,262.8 L540.7,261.7 L538.4,260.7 L535.8,259.8 L533.2,259.1 L530.4,258.4 L527.5,258.0 L524.5,257.6 L521.5,257.5 L518.4,257.4 L515.4,257.5 L512.4,257.8 L509.5,258.2 L506.7,258.7 L504.0,259.4 L501.4,260.2 L499.0,261.1 L496.9,262.2 L494.9,263.3 L493.2,264.6 L491.7,265.9 L490.5,267.3 L489.6,268.7 L489.0,270.2 L488.6,271.7 L488.6,273.2 L488.8,274.7 L489.4,276.2 L490.2,277.6 L491.4,279.0 L492.8,280.4 L494.4,281.7 L496.3,282.9 L498.4,284.0 L500.8,284.9 L503.3,285.8 L505.9,286.6 L508.7,287.2 L511.6,287.7 L514.6,288.0 L517.6,288.2 L520.7,288.2 L523.7,288.1 L526.7,287.8 L529.6,287.4 L532.5,286.9 L535.2,286.2 L537.7,285.4 L540.1,284.5 L542.3,283.4 L544.2,282.3 L545.9,281.1 L547.4,279.7 L548.6,278.4ZM549.5,290.4 L550.2,288.9 L550.5,287.4 L550.5,285.9 L550.3,284.4 L549.7,282.9 L548.9,281.5 L547.8,280.1 L546.4,278.7 L544.7,277.4 L542.8,276.2 L540.7,275.1 L538.4,274.1 L535.8,273.3 L533.2,272.5 L530.4,271.9 L527.5,271.4 L524.5,271.1 L521.5,270.9 L518.4,270.9 L515.4,271.0 L512.4,271.2 L509.5,271.7 L506.7,272.2 L504.0,272.9 L501.4,273.7 L499.0,274.6 L496.9,275.6 L494.9,276.8 L493.2,278.0 L491.7,279.3 L490.5,280.7 L489.6,282.2 L489.0,283.6 L488.6,285.1 L488.6,286.6 L488.8,288.1 L489.4,289.6 L490.2,291.1 L491.4,292.5 L492.8,293.9 L494.4,295.1 L496.3,296.3 L498.4,297.4 L500.8,298.4 L503.3,299.3 L505.9,300.0 L508.7,300.6 L511.6,301.1 L514.6,301.5 L517.6,301.6 L520.7,301.7 L523.7,301.6 L526.7,301.3 L529.6,300.9 L532.5,300.4 L535.2,299.7 L537.7,298.9 L540.1,298.0 L542.3,296.9 L544.2,295.8 L545.9,294.5 L547.4,293.2 L548.6,291.8Z" fill="url(#g24)" fill-rule="evenodd" clip-path="url(#c23)"/>
<path d="M549.5,290.4 L550.2,288.9 L550.5,287.4 L550.5,285.9 L550.3,284.4 L549.7,282.9 L548.9,281.5 L547.8,280.1 L546.4,278.7 L544.7,277.4 L542.8,276.2 L540.7,275.1 L538.4,274.1 L535.8,273.3 L533.2,272.5 L530.4,271.9 L527.5,271.4 L524.5,271.1 L521.5,270.9 L518.4,270.9 L515.4,271.0 L512.4,271.2 L509.5,271.7 L506.7,272.2 L504.0,272.9 L501.4,273.7 L499.0,274.6 L496.9,275.6 L494.9,276.8 L493.2,278.0 L491.7,279.3 L490.5,280.7 L489.6,282.2 L489.0,283.6 L488.6,285.1 L488.6,286.6 L488.8,288.1 L489.4,289.6 L490.2,291.1 L491.4,292.5 L492.8,293.9 L494.4,295.1 L496.3,296.3 L498.4,297.4 L500.8,298.4 L503.3,299.3 L505.9,300.0 L508.7,300.6 L511.6,301.1 L514.6,301.5 L517.6,301.6 L520.7,301.7 L523.7,301.6 L526.7,301.3 L529.6,300.9 L532.5,300.4 L535.2,299.7 L537.7,298.9 L540.1,298.0 L542.3,296.9 L544.2,295.8 L545.9,294.5 L547.4,293.2 L548.6,291.8Z" fill="none" stroke="#15181b" stroke-width="1.15" stroke-linejoin="round" clip-path="url(#c23)"/>
<path d="M549.5,276.9 L550.2,275.5 L550.5,274.0 L550.5,272.4 L550.3,270.9 L549.7,269.5 L548.9,268.0 L547.8,266.6 L546.4,265.2 L544.7,264.0 L542.8,262.8 L540.7,261.7 L538.4,260.7 L535.8,259.8 L533.2,259.1 L530.4,258.4 L527.5,258.0 L524.5,257.6 L521.5,257.5 L518.4,257.4 L515.4,257.5 L512.4,257.8 L509.5,258.2 L506.7,258.7 L504.0,259.4 L501.4,260.2 L499.0,261.1 L496.9,262.2 L494.9,263.3 L493.2,264.6 L491.7,265.9 L490.5,267.3 L489.6,268.7 L489.0,270.2 L488.6,271.7 L488.6,273.2 L488.8,274.7 L489.4,276.2 L490.2,277.6 L491.4,279.0 L492.8,280.4 L494.4,281.7 L496.3,282.9 L498.4,284.0 L500.8,284.9 L503.3,285.8 L505.9,286.6 L508.7,287.2 L511.6,287.7 L514.6,288.0 L517.6,288.2 L520.7,288.2 L523.7,288.1 L526.7,287.8 L529.6,287.4 L532.5,286.9 L535.2,286.2 L537.7,285.4 L540.1,284.5 L542.3,283.4 L544.2,282.3 L545.9,281.1 L547.4,279.7 L548.6,278.4Z" fill="none" stroke="#15181b" stroke-width="1.15" stroke-linejoin="round" />
<path d="M622.9,287.0 L623.6,285.6 L623.9,284.1 L623.9,282.5 L623.7,281.0 L623.1,279.5 L622.3,278.1 L621.2,276.7 L619.8,275.3 L618.1,274.0 L616.2,272.9 L614.1,271.8 L611.8,270.8 L609.2,269.9 L606.6,269.2 L603.8,268.5 L600.9,268.1 L597.9,267.7 L594.9,267.5 L591.8,267.5 L588.8,267.6 L585.8,267.9 L582.9,268.3 L580.1,268.8 L577.4,269.5 L574.8,270.3 L572.4,271.2 L570.3,272.3 L568.3,273.4 L566.6,274.7 L565.1,276.0 L563.9,277.3 L563.0,278.8 L562.3,280.3 L562.0,281.8 L562.0,283.3 L562.2,284.8 L562.8,286.3 L563.6,287.7 L564.8,289.1 L566.2,290.5 L567.8,291.8 L569.7,293.0 L571.8,294.0 L574.2,295.0 L576.7,295.9 L579.3,296.7 L582.1,297.3 L585.0,297.7 L588.0,298.1 L591.0,298.3 L594.1,298.3 L597.1,298.2 L600.1,297.9 L603.0,297.5 L605.8,297.0 L608.5,296.3 L611.1,295.5 L613.5,294.6 L615.7,293.5 L617.6,292.4 L619.3,291.2 L620.8,289.8 L622.0,288.5ZM622.9,300.5 L623.6,299.0 L623.9,297.5 L623.9,296.0 L623.7,294.5 L623.1,293.0 L622.3,291.6 L621.2,290.1 L619.8,288.8 L618.1,287.5 L616.2,286.3 L614.1,285.2 L611.8,284.2 L609.2,283.4 L606.6,282.6 L603.8,282.0 L600.9,281.5 L597.9,281.2 L594.9,281.0 L591.8,281.0 L588.8,281.1 L585.8,281.3 L582.9,281.7 L580.1,282.3 L577.4,283.0 L574.8,283.8 L572.4,284.7 L570.3,285.7 L568.3,286.9 L566.6,288.1 L565.1,289.4 L563.9,290.8 L563.0,292.3 L562.3,293.7 L562.0,295.2 L562.0,296.7 L562.2,298.2 L562.8,299.7 L563.6,301.2 L564.8,302.6 L566.2,304.0 L567.8,305.2 L569.7,306.4 L571.8,307.5 L574.2,308.5 L576.7,309.4 L579.3,310.1 L582.1,310.7 L585.0,311.2 L588.0,311.5 L591.0,311.7 L594.1,311.8 L597.1,311.7 L600.1,311.4 L603.0,311.0 L605.8,310.5 L608.5,309.8 L611.1,309.0 L613.5,308.0 L615.7,307.0 L617.6,305.9 L619.3,304.6 L620.8,303.3 L622.0,301.9Z" fill="url(#g26)" fill-rule="evenodd" clip-path="url(#c25)"/>
<path d="M622.9,300.5 L623.6,299.0 L623.9,297.5 L623.9,296.0 L623.7,294.5 L623.1,293.0 L622.3,291.6 L621.2,290.1 L619.8,288.8 L618.1,287.5 L616.2,286.3 L614.1,285.2 L611.8,284.2 L609.2,283.4 L606.6,282.6 L603.8,282.0 L600.9,281.5 L597.9,281.2 L594.9,281.0 L591.8,281.0 L588.8,281.1 L585.8,281.3 L582.9,281.7 L580.1,282.3 L577.4,283.0 L574.8,283.8 L572.4,284.7 L570.3,285.7 L568.3,286.9 L566.6,288.1 L565.1,289.4 L563.9,290.8 L563.0,292.3 L562.3,293.7 L562.0,295.2 L562.0,296.7 L562.2,298.2 L562.8,299.7 L563.6,301.2 L564.8,302.6 L566.2,304.0 L567.8,305.2 L569.7,306.4 L571.8,307.5 L574.2,308.5 L576.7,309.4 L579.3,310.1 L582.1,310.7 L585.0,311.2 L588.0,311.5 L591.0,311.7 L594.1,311.8 L597.1,311.7 L600.1,311.4 L603.0,311.0 L605.8,310.5 L608.5,309.8 L611.1,309.0 L613.5,308.0 L615.7,307.0 L617.6,305.9 L619.3,304.6 L620.8,303.3 L622.0,301.9Z" fill="none" stroke="#15181b" stroke-width="1.15" stroke-linejoin="round" clip-path="url(#c25)"/>
<path d="M622.9,287.0 L623.6,285.6 L623.9,284.1 L623.9,282.5 L623.7,281.0 L623.1,279.5 L622.3,278.1 L621.2,276.7 L619.8,275.3 L618.1,274.0 L616.2,272.9 L614.1,271.8 L611.8,270.8 L609.2,269.9 L606.6,269.2 L603.8,268.5 L600.9,268.1 L597.9,267.7 L594.9,267.5 L591.8,267.5 L588.8,267.6 L585.8,267.9 L582.9,268.3 L580.1,268.8 L577.4,269.5 L574.8,270.3 L572.4,271.2 L570.3,272.3 L568.3,273.4 L566.6,274.7 L565.1,276.0 L563.9,277.3 L563.0,278.8 L562.3,280.3 L562.0,281.8 L562.0,283.3 L562.2,284.8 L562.8,286.3 L563.6,287.7 L564.8,289.1 L566.2,290.5 L567.8,291.8 L569.7,293.0 L571.8,294.0 L574.2,295.0 L576.7,295.9 L579.3,296.7 L582.1,297.3 L585.0,297.7 L588.0,298.1 L591.0,298.3 L594.1,298.3 L597.1,298.2 L600.1,297.9 L603.0,297.5 L605.8,297.0 L608.5,296.3 L611.1,295.5 L613.5,294.6 L615.7,293.5 L617.6,292.4 L619.3,291.2 L620.8,289.8 L622.0,288.5Z" fill="none" stroke="#15181b" stroke-width="1.15" stroke-linejoin="round" />
<path d="M356.7,195.4 L357.3,194.0 L357.7,192.5 L357.7,190.9 L357.5,189.4 L356.9,187.9 L356.1,186.5 L354.9,185.1 L353.5,183.7 L351.9,182.4 L350.0,181.3 L347.9,180.2 L345.5,179.2 L343.0,178.3 L340.4,177.6 L337.6,176.9 L334.7,176.5 L331.7,176.1 L328.7,175.9 L325.6,175.9 L322.6,176.0 L319.6,176.3 L316.7,176.7 L313.8,177.2 L311.1,177.9 L308.6,178.7 L306.2,179.6 L304.0,180.7 L302.1,181.8 L300.3,183.1 L298.9,184.4 L297.7,185.7 L296.8,187.2 L296.1,188.7 L295.8,190.2 L295.7,191.7 L296.0,193.2 L296.6,194.7 L297.4,196.1 L298.5,197.5 L299.9,198.9 L301.6,200.2 L303.5,201.4 L305.6,202.4 L307.9,203.4 L310.4,204.3 L313.1,205.1 L315.9,205.7 L318.8,206.1 L321.8,206.5 L324.8,206.7 L327.9,206.7 L330.9,206.6 L333.9,206.3 L336.8,205.9 L339.6,205.4 L342.3,204.7 L344.9,203.9 L347.3,203.0 L349.4,201.9 L351.4,200.8 L353.1,199.6 L354.6,198.2 L355.8,196.9ZM356.7,208.9 L357.3,207.4 L357.7,205.9 L357.7,204.4 L357.5,202.9 L356.9,201.4 L356.1,200.0 L354.9,198.5 L353.5,197.2 L351.9,195.9 L350.0,194.7 L347.9,193.6 L345.5,192.6 L343.0,191.8 L340.4,191.0 L337.6,190.4 L334.7,189.9 L331.7,189.6 L328.7,189.4 L325.6,189.4 L322.6,189.5 L319.6,189.7 L316.7,190.1 L313.8,190.7 L311.1,191.4 L308.6,192.2 L306.2,193.1 L304.0,194.1 L302.1,195.3 L300.3,196.5 L298.9,197.8 L297.7,199.2 L296.8,200.7 L296.1,202.1 L295.8,203.6 L295.7,205.1 L296.0,206.6 L296.6,208.1 L297.4,209.6 L298.5,211.0 L299.9,212.4 L301.6,213.6 L303.5,214.8 L305.6,215.9 L307.9,216.9 L310.4,217.8 L313.1,218.5 L315.9,219.1 L318.8,219.6 L321.8,219.9 L324.8,220.1 L327.9,220.2 L330.9,220.1 L333.9,219.8 L336.8,219.4 L339.6,218.9 L342.3,218.2 L344.9,217.4 L347.3,216.4 L349.4,215.4 L351.4,214.3 L353.1,213.0 L354.6,211.7 L355.8,210.3Z" fill="url(#g28)" fill-rule="evenodd" clip-path="url(#c27)"/>
<path d="M356.7,208.9 L357.3,207.4 L357.7,205.9 L357.7,204.4 L357.5,202.9 L356.9,201.4 L356.1,200.0 L354.9,198.5 L353.5,197.2 L351.9,195.9 L350.0,194.7 L347.9,193.6 L345.5,192.6 L343.0,191.8 L340.4,191.0 L337.6,190.4 L334.7,189.9 L331.7,189.6 L328.7,189.4 L325.6,189.4 L322.6,189.5 L319.6,189.7 L316.7,190.1 L313.8,190.7 L311.1,191.4 L308.6,192.2 L306.2,193.1 L304.0,194.1 L302.1,195.3 L300.3,196.5 L298.9,197.8 L297.7,199.2 L296.8,200.7 L296.1,202.1 L295.8,203.6 L295.7,205.1 L296.0,206.6 L296.6,208.1 L297.4,209.6 L298.5,211.0 L299.9,212.4 L301.6,213.6 L303.5,214.8 L305.6,215.9 L307.9,216.9 L310.4,217.8 L313.1,218.5 L315.9,219.1 L318.8,219.6 L321.8,219.9 L324.8,220.1 L327.9,220.2 L330.9,220.1 L333.9,219.8 L336.8,219.4 L339.6,218.9 L342.3,218.2 L344.9,217.4 L347.3,216.4 L349.4,215.4 L351.4,214.3 L353.1,213.0 L354.6,211.7 L355.8,210.3Z" fill="none" stroke="#15181b" stroke-width="1.15" stroke-linejoin="round" clip-path="url(#c27)"/>
<path d="M356.7,195.4 L357.3,194.0 L357.7,192.5 L357.7,190.9 L357.5,189.4 L356.9,187.9 L356.1,186.5 L354.9,185.1 L353.5,183.7 L351.9,182.4 L350.0,181.3 L347.9,180.2 L345.5,179.2 L343.0,178.3 L340.4,177.6 L337.6,176.9 L334.7,176.5 L331.7,176.1 L328.7,175.9 L325.6,175.9 L322.6,176.0 L319.6,176.3 L316.7,176.7 L313.8,177.2 L311.1,177.9 L308.6,178.7 L306.2,179.6 L304.0,180.7 L302.1,181.8 L300.3,183.1 L298.9,184.4 L297.7,185.7 L296.8,187.2 L296.1,188.7 L295.8,190.2 L295.7,191.7 L296.0,193.2 L296.6,194.7 L297.4,196.1 L298.5,197.5 L299.9,198.9 L301.6,200.2 L303.5,201.4 L305.6,202.4 L307.9,203.4 L310.4,204.3 L313.1,205.1 L315.9,205.7 L318.8,206.1 L321.8,206.5 L324.8,206.7 L327.9,206.7 L330.9,206.6 L333.9,206.3 L336.8,205.9 L339.6,205.4 L342.3,204.7 L344.9,203.9 L347.3,203.0 L349.4,201.9 L351.4,200.8 L353.1,199.6 L354.6,198.2 L355.8,196.9Z" fill="none" stroke="#15181b" stroke-width="1.15" stroke-linejoin="round" />
<path d="M430.1,205.5 L430.7,204.0 L431.1,202.5 L431.1,201.0 L430.9,199.5 L430.3,198.0 L429.5,196.6 L428.3,195.2 L426.9,193.8 L425.3,192.5 L423.4,191.4 L421.3,190.3 L418.9,189.3 L416.4,188.4 L413.8,187.6 L411.0,187.0 L408.1,186.6 L405.1,186.2 L402.1,186.0 L399.0,186.0 L396.0,186.1 L393.0,186.4 L390.1,186.8 L387.2,187.3 L384.5,188.0 L382.0,188.8 L379.6,189.7 L377.4,190.8 L375.5,191.9 L373.7,193.1 L372.3,194.5 L371.1,195.8 L370.2,197.3 L369.5,198.8 L369.2,200.3 L369.1,201.8 L369.4,203.3 L370.0,204.8 L370.8,206.2 L371.9,207.6 L373.3,209.0 L375.0,210.3 L376.9,211.4 L379.0,212.5 L381.3,213.5 L383.8,214.4 L386.5,215.2 L389.3,215.8 L392.2,216.2 L395.2,216.6 L398.2,216.8 L401.2,216.8 L404.3,216.7 L407.3,216.4 L410.2,216.0 L413.0,215.5 L415.7,214.8 L418.3,214.0 L420.7,213.1 L422.8,212.0 L424.8,210.9 L426.5,209.7 L428.0,208.3 L429.2,207.0ZM430.1,219.0 L430.7,217.5 L431.1,216.0 L431.1,214.5 L430.9,213.0 L430.3,211.5 L429.5,210.1 L428.3,208.6 L426.9,207.3 L425.3,206.0 L423.4,204.8 L421.3,203.7 L418.9,202.7 L416.4,201.9 L413.8,201.1 L411.0,200.5 L408.1,200.0 L405.1,199.7 L402.1,199.5 L399.0,199.5 L396.0,199.6 L393.0,199.8 L390.1,200.2 L387.2,200.8 L384.5,201.5 L382.0,202.3 L379.6,203.2 L377.4,204.2 L375.5,205.4 L373.7,206.6 L372.3,207.9 L371.1,209.3 L370.2,210.7 L369.5,212.2 L369.2,213.7 L369.1,215.2 L369.4,216.7 L370.0,218.2 L370.8,219.7 L371.9,221.1 L373.3,222.4 L375.0,223.7 L376.9,224.9 L379.0,226.0 L381.3,227.0 L383.8,227.9 L386.5,228.6 L389.3,229.2 L392.2,229.7 L395.2,230.0 L398.2,230.2 L401.2,230.3 L404.3,230.2 L407.3,229.9 L410.2,229.5 L413.0,229.0 L415.7,228.3 L418.3,227.5 L420.7,226.5 L422.8,225.5 L424.8,224.4 L426.5,223.1 L428.0,221.8 L429.2,220.4Z" fill="url(#g30)" fill-rule="evenodd" clip-path="url(#c29)"/>
<path d="M430.1,219.0 L430.7,217.5 L431.1,216.0 L431.1,214.5 L430.9,213.0 L430.3,211.5 L429.5,210.1 L428.3,208.6 L426.9,207.3 L425.3,206.0 L423.4,204.8 L421.3,203.7 L418.9,202.7 L416.4,201.9 L413.8,201.1 L411.0,200.5 L408.1,200.0 L405.1,199.7 L402.1,199.5 L399.0,199.5 L396.0,199.6 L393.0,199.8 L390.1,200.2 L387.2,200.8 L384.5,201.5 L382.0,202.3 L379.6,203.2 L377.4,204.2 L375.5,205.4 L373.7,206.6 L372.3,207.9 L371.1,209.3 L370.2,210.7 L369.5,212.2 L369.2,213.7 L369.1,215.2 L369.4,216.7 L370.0,218.2 L370.8,219.7 L371.9,221.1 L373.3,222.4 L375.0,223.7 L376.9,224.9 L379.0,226.0 L381.3,227.0 L383.8,227.9 L386.5,228.6 L389.3,229.2 L392.2,229.7 L395.2,230.0 L398.2,230.2 L401.2,230.3 L404.3,230.2 L407.3,229.9 L410.2,229.5 L413.0,229.0 L415.7,228.3 L418.3,227.5 L420.7,226.5 L422.8,225.5 L424.8,224.4 L426.5,223.1 L428.0,221.8 L429.2,220.4Z" fill="none" stroke="#15181b" stroke-width="1.15" stroke-linejoin="round" clip-path="url(#c29)"/>
<path d="M430.1,205.5 L430.7,204.0 L431.1,202.5 L431.1,201.0 L430.9,199.5 L430.3,198.0 L429.5,196.6 L428.3,195.2 L426.9,193.8 L425.3,192.5 L423.4,191.4 L421.3,190.3 L418.9,189.3 L416.4,188.4 L413.8,187.6 L411.0,187.0 L408.1,186.6 L405.1,186.2 L402.1,186.0 L399.0,186.0 L396.0,186.1 L393.0,186.4 L390.1,186.8 L387.2,187.3 L384.5,188.0 L382.0,188.8 L379.6,189.7 L377.4,190.8 L375.5,191.9 L373.7,193.1 L372.3,194.5 L371.1,195.8 L370.2,197.3 L369.5,198.8 L369.2,200.3 L369.1,201.8 L369.4,203.3 L370.0,204.8 L370.8,206.2 L371.9,207.6 L373.3,209.0 L375.0,210.3 L376.9,211.4 L379.0,212.5 L381.3,213.5 L383.8,214.4 L386.5,215.2 L389.3,215.8 L392.2,216.2 L395.2,216.6 L398.2,216.8 L401.2,216.8 L404.3,216.7 L407.3,216.4 L410.2,216.0 L413.0,215.5 L415.7,214.8 L418.3,214.0 L420.7,213.1 L422.8,212.0 L424.8,210.9 L426.5,209.7 L428.0,208.3 L429.2,207.0Z" fill="none" stroke="#15181b" stroke-width="1.15" stroke-linejoin="round" />
<path d="M503.5,215.6 L504.1,214.1 L504.5,212.6 L504.5,211.1 L504.3,209.6 L503.7,208.1 L502.9,206.7 L501.7,205.3 L500.3,203.9 L498.7,202.6 L496.8,201.4 L494.6,200.4 L492.3,199.4 L489.8,198.5 L487.1,197.7 L484.4,197.1 L481.5,196.7 L478.5,196.3 L475.5,196.1 L472.4,196.1 L469.4,196.2 L466.4,196.5 L463.5,196.9 L460.6,197.4 L457.9,198.1 L455.4,198.9 L453.0,199.8 L450.8,200.9 L448.9,202.0 L447.1,203.2 L445.7,204.6 L444.5,205.9 L443.5,207.4 L442.9,208.8 L442.6,210.3 L442.5,211.9 L442.8,213.4 L443.4,214.9 L444.2,216.3 L445.3,217.7 L446.7,219.1 L448.4,220.4 L450.3,221.5 L452.4,222.6 L454.7,223.6 L457.2,224.5 L459.9,225.2 L462.7,225.9 L465.6,226.3 L468.6,226.7 L471.6,226.9 L474.6,226.9 L477.7,226.8 L480.7,226.5 L483.6,226.1 L486.4,225.6 L489.1,224.9 L491.7,224.1 L494.0,223.2 L496.2,222.1 L498.2,221.0 L499.9,219.7 L501.4,218.4 L502.6,217.1ZM503.5,229.1 L504.1,227.6 L504.5,226.1 L504.5,224.6 L504.3,223.1 L503.7,221.6 L502.9,220.1 L501.7,218.7 L500.3,217.4 L498.7,216.1 L496.8,214.9 L494.6,213.8 L492.3,212.8 L489.8,212.0 L487.1,211.2 L484.4,210.6 L481.5,210.1 L478.5,209.8 L475.5,209.6 L472.4,209.6 L469.4,209.7 L466.4,209.9 L463.5,210.3 L460.6,210.9 L457.9,211.6 L455.4,212.4 L453.0,213.3 L450.8,214.3 L448.9,215.5 L447.1,216.7 L445.7,218.0 L444.5,219.4 L443.5,220.8 L442.9,222.3 L442.6,223.8 L442.5,225.3 L442.8,226.8 L443.4,228.3 L444.2,229.8 L445.3,231.2 L446.7,232.5 L448.4,233.8 L450.3,235.0 L452.4,236.1 L454.7,237.1 L457.2,238.0 L459.9,238.7 L462.7,239.3 L465.6,239.8 L468.6,240.1 L471.6,240.3 L474.6,240.4 L477.7,240.3 L480.7,240.0 L483.6,239.6 L486.4,239.1 L489.1,238.4 L491.7,237.6 L494.0,236.6 L496.2,235.6 L498.2,234.5 L499.9,233.2 L501.4,231.9 L502.6,230.5Z" fill="url(#g32)" fill-rule="evenodd" clip-path="url(#c31)"/>
<path d="M503.5,229.1 L504.1,227.6 L504.5,226.1 L504.5,224.6 L504.3,223.1 L503.7,221.6 L502.9,220.1 L501.7,218.7 L500.3,217.4 L498.7,216.1 L496.8,214.9 L494.6,213.8 L492.3,212.8 L489.8,212.0 L487.1,211.2 L484.4,210.6 L481.5,210.1 L478.5,209.8 L475.5,209.6 L472.4,209.6 L469.4,209.7 L466.4,209.9 L463.5,210.3 L460.6,210.9 L457.9,211.6 L455.4,212.4 L453.0,213.3 L450.8,214.3 L448.9,215.5 L447.1,216.7 L445.7,218.0 L444.5,219.4 L443.5,220.8 L442.9,222.3 L442.6,223.8 L442.5,225.3 L442.8,226.8 L443.4,228.3 L444.2,229.8 L445.3,231.2 L446.7,232.5 L448.4,233.8 L450.3,235.0 L452.4,236.1 L454.7,237.1 L457.2,238.0 L459.9,238.7 L462.7,239.3 L465.6,239.8 L468.6,240.1 L471.6,240.3 L474.6,240.4 L477.7,240.3 L480.7,240.0 L483.6,239.6 L486.4,239.1 L489.1,238.4 L491.7,237.6 L494.0,236.6 L496.2,235.6 L498.2,234.5 L499.9,233.2 L501.4,231.9 L502.6,230.5Z" fill="none" stroke="#15181b" stroke-width="1.15" stroke-linejoin="round" clip-path="url(#c31)"/>
<path d="M503.5,215.6 L504.1,214.1 L504.5,212.6 L504.5,211.1 L504.3,209.6 L503.7,208.1 L502.9,206.7 L501.7,205.3 L500.3,203.9 L498.7,202.6 L496.8,201.4 L494.6,200.4 L492.3,199.4 L489.8,198.5 L487.1,197.7 L484.4,197.1 L481.5,196.7 L478.5,196.3 L475.5,196.1 L472.4,196.1 L469.4,196.2 L466.4,196.5 L463.5,196.9 L460.6,197.4 L457.9,198.1 L455.4,198.9 L453.0,199.8 L450.8,200.9 L448.9,202.0 L447.1,203.2 L445.7,204.6 L444.5,205.9 L443.5,207.4 L442.9,208.8 L442.6,210.3 L442.5,211.9 L442.8,213.4 L443.4,214.9 L444.2,216.3 L445.3,217.7 L446.7,219.1 L448.4,220.4 L450.3,221.5 L452.4,222.6 L454.7,223.6 L457.2,224.5 L459.9,225.2 L462.7,225.9 L465.6,226.3 L468.6,226.7 L471.6,226.9 L474.6,226.9 L477.7,226.8 L480.7,226.5 L483.6,226.1 L486.4,225.6 L489.1,224.9 L491.7,224.1 L494.0,223.2 L496.2,222.1 L498.2,221.0 L499.9,219.7 L501.4,218.4 L502.6,217.1Z" fill="none" stroke="#15181b" stroke-width="1.15" stroke-linejoin="round" />
<path d="M576.9,225.7 L577.5,224.2 L577.9,222.7 L577.9,221.2 L577.6,219.7 L577.1,218.2 L576.2,216.8 L575.1,215.4 L573.7,214.0 L572.1,212.7 L570.2,211.5 L568.0,210.4 L565.7,209.5 L563.2,208.6 L560.5,207.8 L557.7,207.2 L554.8,206.7 L551.9,206.4 L548.8,206.2 L545.8,206.2 L542.8,206.3 L539.8,206.6 L536.9,207.0 L534.0,207.5 L531.3,208.2 L528.8,209.0 L526.4,209.9 L524.2,211.0 L522.3,212.1 L520.5,213.3 L519.1,214.7 L517.9,216.0 L516.9,217.5 L516.3,218.9 L516.0,220.4 L515.9,222.0 L516.2,223.5 L516.7,224.9 L517.6,226.4 L518.7,227.8 L520.1,229.2 L521.8,230.4 L523.7,231.6 L525.8,232.7 L528.1,233.7 L530.6,234.6 L533.3,235.3 L536.1,236.0 L539.0,236.4 L542.0,236.8 L545.0,236.9 L548.0,237.0 L551.1,236.9 L554.1,236.6 L557.0,236.2 L559.8,235.7 L562.5,235.0 L565.1,234.2 L567.4,233.3 L569.6,232.2 L571.6,231.1 L573.3,229.8 L574.8,228.5 L576.0,227.1ZM576.9,239.2 L577.5,237.7 L577.9,236.2 L577.9,234.7 L577.6,233.2 L577.1,231.7 L576.2,230.2 L575.1,228.8 L573.7,227.5 L572.1,226.2 L570.2,225.0 L568.0,223.9 L565.7,222.9 L563.2,222.1 L560.5,221.3 L557.7,220.7 L554.8,220.2 L551.9,219.9 L548.8,219.7 L545.8,219.7 L542.8,219.8 L539.8,220.0 L536.9,220.4 L534.0,221.0 L531.3,221.7 L528.8,222.5 L526.4,223.4 L524.2,224.4 L522.3,225.6 L520.5,226.8 L519.1,228.1 L517.9,229.5 L516.9,230.9 L516.3,232.4 L516.0,233.9 L515.9,235.4 L516.2,236.9 L516.7,238.4 L517.6,239.9 L518.7,241.3 L520.1,242.6 L521.8,243.9 L523.7,245.1 L525.8,246.2 L528.1,247.2 L530.6,248.1 L533.3,248.8 L536.1,249.4 L539.0,249.9 L542.0,250.2 L545.0,250.4 L548.0,250.5 L551.1,250.3 L554.1,250.1 L557.0,249.7 L559.8,249.1 L562.5,248.5 L565.1,247.7 L567.4,246.7 L569.6,245.7 L571.6,244.5 L573.3,243.3 L574.8,242.0 L576.0,240.6Z" fill="url(#g34)" fill-rule="evenodd" clip-path="url(#c33)"/>
<path d="M576.9,239.2 L577.5,237.7 L577.9,236.2 L577.9,234.7 L577.6,233.2 L577.1,231.7 L576.2,230.2 L575.1,228.8 L573.7,227.5 L572.1,226.2 L570.2,225.0 L568.0,223.9 L565.7,222.9 L563.2,222.1 L560.5,221.3 L557.7,220.7 L554.8,220.2 L551.9,219.9 L548.8,219.7 L545.8,219.7 L542.8,219.8 L539.8,220.0 L536.9,220.4 L534.0,221.0 L531.3,221.7 L528.8,222.5 L526.4,223.4 L524.2,224.4 L522.3,225.6 L520.5,226.8 L519.1,228.1 L517.9,229.5 L516.9,230.9 L516.3,232.4 L516.0,233.9 L515.9,235.4 L516.2,236.9 L516.7,238.4 L517.6,239.9 L518.7,241.3 L520.1,242.6 L521.8,243.9 L523.7,245.1 L525.8,246.2 L528.1,247.2 L530.6,248.1 L533.3,248.8 L536.1,249.4 L539.0,249.9 L542.0,250.2 L545.0,250.4 L548.0,250.5 L551.1,250.3 L554.1,250.1 L557.0,249.7 L559.8,249.1 L562.5,248.5 L565.1,247.7 L567.4,246.7 L569.6,245.7 L571.6,244.5 L573.3,243.3 L574.8,242.0 L576.0,240.6Z" fill="none" stroke="#15181b" stroke-width="1.15" stroke-linejoin="round" clip-path="url(#c33)"/>
<path d="M576.9,225.7 L577.5,224.2 L577.9,222.7 L577.9,221.2 L577.6,219.7 L577.1,218.2 L576.2,216.8 L575.1,215.4 L573.7,214.0 L572.1,212.7 L570.2,211.5 L568.0,210.4 L565.7,209.5 L563.2,208.6 L560.5,207.8 L557.7,207.2 L554.8,206.7 L551.9,206.4 L548.8,206.2 L545.8,206.2 L542.8,206.3 L539.8,206.6 L536.9,207.0 L534.0,207.5 L531.3,208.2 L528.8,209.0 L526.4,209.9 L524.2,211.0 L522.3,212.1 L520.5,213.3 L519.1,214.7 L517.9,216.0 L516.9,217.5 L516.3,218.9 L516.0,220.4 L515.9,222.0 L516.2,223.5 L516.7,224.9 L517.6,226.4 L518.7,227.8 L520.1,229.2 L521.8,230.4 L523.7,231.6 L525.8,232.7 L528.1,233.7 L530.6,234.6 L533.3,235.3 L536.1,236.0 L539.0,236.4 L542.0,236.8 L545.0,236.9 L548.0,237.0 L551.1,236.9 L554.1,236.6 L557.0,236.2 L559.8,235.7 L562.5,235.0 L565.1,234.2 L567.4,233.3 L569.6,232.2 L571.6,231.1 L573.3,229.8 L574.8,228.5 L576.0,227.1Z" fill="none" stroke="#15181b" stroke-width="1.15" stroke-linejoin="round" />
<path d="M650.3,235.8 L650.9,234.3 L651.3,232.8 L651.3,231.3 L651.0,229.8 L650.5,228.3 L649.6,226.9 L648.5,225.5 L647.1,224.1 L645.5,222.8 L643.6,221.6 L641.4,220.5 L639.1,219.6 L636.6,218.7 L633.9,217.9 L631.1,217.3 L628.2,216.8 L625.3,216.5 L622.2,216.3 L619.2,216.3 L616.2,216.4 L613.2,216.7 L610.3,217.1 L607.4,217.6 L604.7,218.3 L602.2,219.1 L599.8,220.0 L597.6,221.1 L595.7,222.2 L593.9,223.4 L592.5,224.7 L591.3,226.1 L590.3,227.6 L589.7,229.0 L589.4,230.5 L589.3,232.0 L589.6,233.6 L590.1,235.0 L591.0,236.5 L592.1,237.9 L593.5,239.3 L595.2,240.5 L597.1,241.7 L599.2,242.8 L601.5,243.8 L604.0,244.7 L606.7,245.4 L609.5,246.0 L612.4,246.5 L615.4,246.9 L618.4,247.0 L621.4,247.1 L624.5,247.0 L627.5,246.7 L630.4,246.3 L633.2,245.8 L635.9,245.1 L638.5,244.3 L640.8,243.4 L643.0,242.3 L645.0,241.2 L646.7,239.9 L648.2,238.6 L649.4,237.2ZM650.3,249.3 L650.9,247.8 L651.3,246.3 L651.3,244.8 L651.0,243.3 L650.5,241.8 L649.6,240.3 L648.5,238.9 L647.1,237.6 L645.5,236.3 L643.6,235.1 L641.4,234.0 L639.1,233.0 L636.6,232.1 L633.9,231.4 L631.1,230.8 L628.2,230.3 L625.3,230.0 L622.2,229.8 L619.2,229.8 L616.2,229.9 L613.2,230.1 L610.3,230.5 L607.4,231.1 L604.7,231.7 L602.2,232.6 L599.8,233.5 L597.6,234.5 L595.7,235.7 L593.9,236.9 L592.5,238.2 L591.3,239.6 L590.3,241.0 L589.7,242.5 L589.4,244.0 L589.3,245.5 L589.6,247.0 L590.1,248.5 L591.0,250.0 L592.1,251.4 L593.5,252.7 L595.2,254.0 L597.1,255.2 L599.2,256.3 L601.5,257.3 L604.0,258.2 L606.7,258.9 L609.5,259.5 L612.4,260.0 L615.4,260.3 L618.4,260.5 L621.4,260.6 L624.5,260.4 L627.5,260.2 L630.4,259.8 L633.2,259.2 L635.9,258.6 L638.5,257.8 L640.8,256.8 L643.0,255.8 L645.0,254.6 L646.7,253.4 L648.2,252.1 L649.4,250.7Z" fill="url(#g36)" fill-rule="evenodd" clip-path="url(#c35)"/>
<path d="M650.3,249.3 L650.9,247.8 L651.3,246.3 L651.3,244.8 L651.0,243.3 L650.5,241.8 L649.6,240.3 L648.5,238.9 L647.1,237.6 L645.5,236.3 L643.6,235.1 L641.4,234.0 L639.1,233.0 L636.6,232.1 L633.9,231.4 L631.1,230.8 L628.2,230.3 L625.3,230.0 L622.2,229.8 L619.2,229.8 L616.2,229.9 L613.2,230.1 L610.3,230.5 L607.4,231.1 L604.7,231.7 L602.2,232.6 L599.8,233.5 L597.6,234.5 L595.7,235.7 L593.9,236.9 L592.5,238.2 L591.3,239.6 L590.3,241.0 L589.7,242.5 L589.4,244.0 L589.3,245.5 L589.6,247.0 L590.1,248.5 L591.0,250.0 L592.1,251.4 L593.5,252.7 L595.2,254.0 L597.1,255.2 L599.2,256.3 L601.5,257.3 L604.0,258.2 L606.7,258.9 L609.5,259.5 L612.4,260.0 L615.4,260.3 L618.4,260.5 L621.4,260.6 L624.5,260.4 L627.5,260.2 L630.4,259.8 L633.2,259.2 L635.9,258.6 L638.5,257.8 L640.8,256.8 L643.0,255.8 L645.0,254.6 L646.7,253.4 L648.2,252.1 L649.4,250.7Z" fill="none" stroke="#15181b" stroke-width="1.15" stroke-linejoin="round" clip-path="url(#c35)"/>
<path d="M650.3,235.8 L650.9,234.3 L651.3,232.8 L651.3,231.3 L651.0,229.8 L650.5,228.3 L649.6,226.9 L648.5,225.5 L647.1,224.1 L645.5,222.8 L643.6,221.6 L641.4,220.5 L639.1,219.6 L636.6,218.7 L633.9,217.9 L631.1,217.3 L628.2,216.8 L625.3,216.5 L622.2,216.3 L619.2,216.3 L616.2,216.4 L613.2,216.7 L610.3,217.1 L607.4,217.6 L604.7,218.3 L602.2,219.1 L599.8,220.0 L597.6,221.1 L595.7,222.2 L593.9,223.4 L592.5,224.7 L591.3,226.1 L590.3,227.6 L589.7,229.0 L589.4,230.5 L589.3,232.0 L589.6,233.6 L590.1,235.0 L591.0,236.5 L592.1,237.9 L593.5,239.3 L595.2,240.5 L597.1,241.7 L599.2,242.8 L601.5,243.8 L604.0,244.7 L606.7,245.4 L609.5,246.0 L612.4,246.5 L615.4,246.9 L618.4,247.0 L621.4,247.1 L624.5,247.0 L627.5,246.7 L630.4,246.3 L633.2,245.8 L635.9,245.1 L638.5,244.3 L640.8,243.4 L643.0,242.3 L645.0,241.2 L646.7,239.9 L648.2,238.6 L649.4,237.2Z" fill="none" stroke="#15181b" stroke-width="1.15" stroke-linejoin="round" />
<polygon points="238.3,266.5 621.2,319.2 621.2,332.6 238.3,280.0" fill="#536b7d" stroke="#15181b" stroke-width="1.15" stroke-linejoin="round" />
<polygon points="256.1,243.2 624.6,293.8 626.6,290.0 258.2,239.3" fill="#86b0cd" stroke="#15181b" stroke-width="1.15" stroke-linejoin="round" />
<polygon points="256.1,243.2 624.6,293.8 624.6,303.8 256.1,253.1" fill="#536c7e" stroke="#15181b" stroke-width="1.15" stroke-linejoin="round" />
<polygon points="254.6,256.0 610.5,305.0 612.0,302.1 256.1,253.1" fill="#86b0cd" stroke="#15181b" stroke-width="1.15" stroke-linejoin="round" />
<polygon points="254.6,256.0 610.5,305.0 610.5,314.1 254.6,265.1" fill="#536c7e" stroke="#15181b" stroke-width="1.15" stroke-linejoin="round" />
<polygon points="624.6,293.8 626.6,290.0 626.6,300.0 624.6,303.8" fill="#4a6272" stroke="#15181b" stroke-width="1.15" stroke-linejoin="round" />
<polygon points="610.5,305.0 612.0,302.1 612.0,311.2 610.5,314.1" fill="#4a6272" stroke="#15181b" stroke-width="1.15" stroke-linejoin="round" />
<polygon points="613.0,237.4 642.0,241.3 714.8,104.3 685.8,100.3" fill="#8ab7d3" stroke="#15181b" stroke-width="1.15" stroke-linejoin="round" />
<polygon points="613.0,237.4 642.0,241.3 638.7,258.9 609.7,254.9" fill="url(#g39)" stroke="#15181b" stroke-width="1.15" stroke-linejoin="round" />
<polygon points="609.7,254.9 638.7,258.9 638.7,510.2 609.7,506.2" fill="#536b7d" stroke="#15181b" stroke-width="1.15" stroke-linejoin="round" />
<polygon points="672.5,243.9 671.7,245.9 670.9,248.5 670.2,251.6 669.6,254.9 669.3,258.3 669.2,261.4 669.2,514.0 680.5,493.0 680.9,487.0 681.3,481.0 682.1,474.0 683.4,468.0 684.9,462.6 725.6,388.5 727.2,382.0 729.2,378.0 732.5,376.6 734.6,379.4 735.4,389.4 747.4,368.0 747.4,111.5 747.0,108.3 746.4,107.1 745.4,108.3" fill="url(#g40)" stroke="#15181b" stroke-width="1.15" stroke-linejoin="round" />
<polygon points="727.2,382.0 729.2,378.0 732.5,376.6 734.6,379.4 735.4,389.4 727.9,387.5" fill="#7a3a28"  />
<g clip-path="url(#c41)">
<polygon points="736.2,161.9 736.1,159.4 735.8,157.5 735.3,156.2 734.7,155.8 733.9,156.1 733.1,157.2 684.5,247.8 683.7,249.6 682.9,252.0 682.3,254.9 681.8,257.9 681.5,261.0 681.4,263.9 681.4,302.7 681.5,305.2 681.8,307.2 682.3,308.4 682.9,308.9 683.7,308.6 684.5,307.4 733.1,216.9 733.9,215.1 734.7,212.6 735.3,209.8 735.8,206.7 736.1,203.6 736.2,200.8" fill="#c4603f"  />
<polygon points="736.2,147.2 736.2,196.0 706.2,191.9 706.2,143.0" fill="#7a3a28"  />
<polygon points="736.2,196.0 732.9,217.4 702.9,213.2 706.2,191.9" fill="url(#g42)"  />
<line x1="736.2" y1="196.0" x2="706.2" y2="191.9" stroke="#16191c" stroke-width="0.9"/>
<line x1="732.9" y1="217.4" x2="702.9" y2="213.2" stroke="#16191c" stroke-width="0.9"/>
</g>
<polygon points="736.2,161.9 736.1,159.4 735.8,157.5 735.3,156.2 734.7,155.8 733.9,156.1 733.1,157.2 684.5,247.8 683.7,249.6 682.9,252.0 682.3,254.9 681.8,257.9 681.5,261.0 681.4,263.9 681.4,302.7 681.5,305.2 681.8,307.2 682.3,308.4 682.9,308.9 683.7,308.6 684.5,307.4 733.1,216.9 733.9,215.1 734.7,212.6 735.3,209.8 735.8,206.7 736.1,203.6 736.2,200.8" fill="none" stroke="#15181b" stroke-width="1.15" stroke-linejoin="round" />
<polygon points="642.5,239.8 672.5,243.9 745.4,108.3 715.4,104.2" fill="#cc6848" stroke="#15181b" stroke-width="1.15" stroke-linejoin="round" />
<polygon points="642.5,239.8 672.5,243.9 669.2,261.4 639.2,257.3" fill="url(#g43)" stroke="#15181b" stroke-width="1.15" stroke-linejoin="round" />
<polygon points="639.2,257.3 669.2,261.4 669.2,514.0 639.2,509.9" fill="#7a3b2b" stroke="#15181b" stroke-width="1.15" stroke-linejoin="round" />
<path d="M680.1,447.3 L1063.0,498.8 L1118.3,395.4 L735.3,343.9Z" fill="#8ab7d3" stroke="#15181b" stroke-width="1.15" stroke-linejoin="round" fill-rule="evenodd"/>
<polygon points="680.1,447.3 1063.0,498.8 1063.0,512.3 680.1,460.8" fill="#536b7d" stroke="#15181b" stroke-width="1.15" stroke-linejoin="round" />
<path d="M680.1,367.8 L1063.0,419.3 L1118.3,315.9 L735.3,264.4ZM900.9,339.5 L902.8,335.1 L903.8,330.7 L903.9,326.2 L903.2,321.7 L901.5,317.3 L899.0,313.0 L895.7,308.9 L891.5,304.9 L886.6,301.1 L881.0,297.6 L874.7,294.3 L867.8,291.4 L860.3,288.9 L852.4,286.7 L844.1,284.9 L835.5,283.5 L826.7,282.6 L817.7,282.0 L808.7,281.9 L799.7,282.3 L790.8,283.1 L782.1,284.3 L773.7,285.9 L765.7,288.0 L758.1,290.4 L751.1,293.1 L744.6,296.2 L738.8,299.6 L733.7,303.3 L729.3,307.2 L725.7,311.3 L723.0,315.6 L721.1,320.0 L720.1,324.4 L720.0,328.9 L720.8,333.4 L722.4,337.8 L724.9,342.1 L728.3,346.2 L732.4,350.2 L737.4,354.0 L743.0,357.5 L749.3,360.8 L756.2,363.7 L763.6,366.2 L771.6,368.4 L779.8,370.2 L788.5,371.6 L797.3,372.6 L806.3,373.1 L815.3,373.2 L824.3,372.8 L833.2,372.0 L841.8,370.8 L850.2,369.2 L858.3,367.2 L865.8,364.7 L872.9,362.0 L879.3,358.9 L885.2,355.5 L890.3,351.8 L894.6,347.9 L898.2,343.8ZM1108.2,376.7 L1110.3,372.5 L1111.6,368.1 L1111.9,363.6 L1111.4,359.1 L1110.0,354.6 L1107.7,350.2 L1104.6,345.8 L1100.6,341.6 L1095.9,337.6 L1090.5,333.8 L1084.3,330.3 L1077.6,327.0 L1070.3,324.0 L1062.5,321.4 L1054.3,319.2 L1045.8,317.4 L1037.0,316.0 L1028.1,315.0 L1019.1,314.4 L1010.1,314.3 L1001.2,314.6 L992.4,315.4 L984.0,316.6 L975.9,318.2 L968.2,320.2 L961.0,322.6 L954.4,325.3 L948.4,328.4 L943.1,331.8 L938.5,335.5 L934.7,339.4 L931.8,343.5 L929.7,347.8 L928.4,352.2 L928.1,356.7 L928.6,361.2 L930.0,365.6 L932.3,370.1 L935.4,374.4 L939.4,378.6 L944.1,382.6 L949.5,386.5 L955.7,390.0 L962.4,393.3 L969.7,396.2 L977.5,398.8 L985.7,401.1 L994.2,402.9 L1003.0,404.3 L1011.9,405.3 L1020.9,405.9 L1029.9,406.0 L1038.8,405.7 L1047.6,404.9 L1056.0,403.7 L1064.1,402.1 L1071.8,400.1 L1079.0,397.7 L1085.6,394.9 L1091.6,391.8 L1096.9,388.4 L1101.5,384.8 L1105.3,380.8Z" fill="#8ab7d3" stroke="#15181b" stroke-width="1.15" stroke-linejoin="round" fill-rule="evenodd"/>
<path d="M900.9,339.5 L902.8,335.1 L903.8,330.7 L903.9,326.2 L903.2,321.7 L901.5,317.3 L899.0,313.0 L895.7,308.9 L891.5,304.9 L886.6,301.1 L881.0,297.6 L874.7,294.3 L867.8,291.4 L860.3,288.9 L852.4,286.7 L844.1,284.9 L835.5,283.5 L826.7,282.6 L817.7,282.0 L808.7,281.9 L799.7,282.3 L790.8,283.1 L782.1,284.3 L773.7,285.9 L765.7,288.0 L758.1,290.4 L751.1,293.1 L744.6,296.2 L738.8,299.6 L733.7,303.3 L729.3,307.2 L725.7,311.3 L723.0,315.6 L721.1,320.0 L720.1,324.4 L720.0,328.9 L720.8,333.4 L722.4,337.8 L724.9,342.1 L728.3,346.2 L732.4,350.2 L737.4,354.0 L743.0,357.5 L749.3,360.8 L756.2,363.7 L763.6,366.2 L771.6,368.4 L779.8,370.2 L788.5,371.6 L797.3,372.6 L806.3,373.1 L815.3,373.2 L824.3,372.8 L833.2,372.0 L841.8,370.8 L850.2,369.2 L858.3,367.2 L865.8,364.7 L872.9,362.0 L879.3,358.9 L885.2,355.5 L890.3,351.8 L894.6,347.9 L898.2,343.8ZM900.9,353.0 L902.8,348.6 L903.8,344.2 L903.9,339.7 L903.2,335.2 L901.5,330.8 L899.0,326.5 L895.7,322.3 L891.5,318.3 L886.6,314.6 L881.0,311.0 L874.7,307.8 L867.8,304.9 L860.3,302.3 L852.4,300.2 L844.1,298.4 L835.5,297.0 L826.7,296.0 L817.7,295.5 L808.7,295.4 L799.7,295.8 L790.8,296.5 L782.1,297.8 L773.7,299.4 L765.7,301.4 L758.1,303.8 L751.1,306.6 L744.6,309.7 L738.8,313.1 L733.7,316.8 L729.3,320.7 L725.7,324.8 L723.0,329.1 L721.1,333.4 L720.1,337.9 L720.0,342.4 L720.8,346.8 L722.4,351.2 L724.9,355.5 L728.3,359.7 L732.4,363.7 L737.4,367.5 L743.0,371.0 L749.3,374.2 L756.2,377.1 L763.6,379.7 L771.6,381.9 L779.8,383.7 L788.5,385.1 L797.3,386.0 L806.3,386.5 L815.3,386.6 L824.3,386.3 L833.2,385.5 L841.8,384.3 L850.2,382.7 L858.3,380.6 L865.8,378.2 L872.9,375.4 L879.3,372.3 L885.2,368.9 L890.3,365.3 L894.6,361.3 L898.2,357.2Z" fill="url(#g46)" fill-rule="evenodd" clip-path="url(#c45)"/>
<path d="M900.9,353.0 L902.8,348.6 L903.8,344.2 L903.9,339.7 L903.2,335.2 L901.5,330.8 L899.0,326.5 L895.7,322.3 L891.5,318.3 L886.6,314.6 L881.0,311.0 L874.7,307.8 L867.8,304.9 L860.3,302.3 L852.4,300.2 L844.1,298.4 L835.5,297.0 L826.7,296.0 L817.7,295.5 L808.7,295.4 L799.7,295.8 L790.8,296.5 L782.1,297.8 L773.7,299.4 L765.7,301.4 L758.1,303.8 L751.1,306.6 L744.6,309.7 L738.8,313.1 L733.7,316.8 L729.3,320.7 L725.7,324.8 L723.0,329.1 L721.1,333.4 L720.1,337.9 L720.0,342.4 L720.8,346.8 L722.4,351.2 L724.9,355.5 L728.3,359.7 L732.4,363.7 L737.4,367.5 L743.0,371.0 L749.3,374.2 L756.2,377.1 L763.6,379.7 L771.6,381.9 L779.8,383.7 L788.5,385.1 L797.3,386.0 L806.3,386.5 L815.3,386.6 L824.3,386.3 L833.2,385.5 L841.8,384.3 L850.2,382.7 L858.3,380.6 L865.8,378.2 L872.9,375.4 L879.3,372.3 L885.2,368.9 L890.3,365.3 L894.6,361.3 L898.2,357.2Z" fill="none" stroke="#15181b" stroke-width="1.15" stroke-linejoin="round" clip-path="url(#c45)"/>
<path d="M900.9,339.5 L902.8,335.1 L903.8,330.7 L903.9,326.2 L903.2,321.7 L901.5,317.3 L899.0,313.0 L895.7,308.9 L891.5,304.9 L886.6,301.1 L881.0,297.6 L874.7,294.3 L867.8,291.4 L860.3,288.9 L852.4,286.7 L844.1,284.9 L835.5,283.5 L826.7,282.6 L817.7,282.0 L808.7,281.9 L799.7,282.3 L790.8,283.1 L782.1,284.3 L773.7,285.9 L765.7,288.0 L758.1,290.4 L751.1,293.1 L744.6,296.2 L738.8,299.6 L733.7,303.3 L729.3,307.2 L725.7,311.3 L723.0,315.6 L721.1,320.0 L720.1,324.4 L720.0,328.9 L720.8,333.4 L722.4,337.8 L724.9,342.1 L728.3,346.2 L732.4,350.2 L737.4,354.0 L743.0,357.5 L749.3,360.8 L756.2,363.7 L763.6,366.2 L771.6,368.4 L779.8,370.2 L788.5,371.6 L797.3,372.6 L806.3,373.1 L815.3,373.2 L824.3,372.8 L833.2,372.0 L841.8,370.8 L850.2,369.2 L858.3,367.2 L865.8,364.7 L872.9,362.0 L879.3,358.9 L885.2,355.5 L890.3,351.8 L894.6,347.9 L898.2,343.8Z" fill="none" stroke="#15181b" stroke-width="1.15" stroke-linejoin="round" />
<path d="M1108.2,376.7 L1110.3,372.5 L1111.6,368.1 L1111.9,363.6 L1111.4,359.1 L1110.0,354.6 L1107.7,350.2 L1104.6,345.8 L1100.6,341.6 L1095.9,337.6 L1090.5,333.8 L1084.3,330.3 L1077.6,327.0 L1070.3,324.0 L1062.5,321.4 L1054.3,319.2 L1045.8,317.4 L1037.0,316.0 L1028.1,315.0 L1019.1,314.4 L1010.1,314.3 L1001.2,314.6 L992.4,315.4 L984.0,316.6 L975.9,318.2 L968.2,320.2 L961.0,322.6 L954.4,325.3 L948.4,328.4 L943.1,331.8 L938.5,335.5 L934.7,339.4 L931.8,343.5 L929.7,347.8 L928.4,352.2 L928.1,356.7 L928.6,361.2 L930.0,365.6 L932.3,370.1 L935.4,374.4 L939.4,378.6 L944.1,382.6 L949.5,386.5 L955.7,390.0 L962.4,393.3 L969.7,396.2 L977.5,398.8 L985.7,401.1 L994.2,402.9 L1003.0,404.3 L1011.9,405.3 L1020.9,405.9 L1029.9,406.0 L1038.8,405.7 L1047.6,404.9 L1056.0,403.7 L1064.1,402.1 L1071.8,400.1 L1079.0,397.7 L1085.6,394.9 L1091.6,391.8 L1096.9,388.4 L1101.5,384.8 L1105.3,380.8ZM1107.5,390.2 L1109.6,385.9 L1110.8,381.5 L1111.2,377.1 L1110.7,372.6 L1109.3,368.1 L1107.0,363.6 L1103.9,359.3 L1099.9,355.1 L1095.2,351.1 L1089.8,347.3 L1083.6,343.7 L1076.9,340.4 L1069.6,337.5 L1061.8,334.9 L1053.6,332.7 L1045.1,330.8 L1036.3,329.4 L1027.4,328.4 L1018.4,327.9 L1009.4,327.7 L1000.5,328.1 L991.7,328.8 L983.3,330.0 L975.2,331.6 L967.5,333.6 L960.3,336.0 L953.7,338.8 L947.7,341.9 L942.4,345.3 L937.8,349.0 L934.0,352.9 L931.1,357.0 L929.0,361.3 L927.7,365.6 L927.4,370.1 L927.9,374.6 L929.3,379.1 L931.6,383.5 L934.7,387.9 L938.7,392.1 L943.4,396.1 L948.8,399.9 L955.0,403.5 L961.7,406.7 L969.0,409.7 L976.8,412.3 L985.0,414.5 L993.5,416.3 L1002.3,417.8 L1011.2,418.8 L1020.2,419.3 L1029.2,419.4 L1038.1,419.1 L1046.9,418.4 L1055.3,417.2 L1063.4,415.6 L1071.1,413.5 L1078.3,411.1 L1084.9,408.4 L1090.9,405.3 L1096.2,401.9 L1100.8,398.2 L1104.6,394.3Z" fill="url(#g48)" fill-rule="evenodd" clip-path="url(#c47)"/>
<path d="M1107.5,390.2 L1109.6,385.9 L1110.8,381.5 L1111.2,377.1 L1110.7,372.6 L1109.3,368.1 L1107.0,363.6 L1103.9,359.3 L1099.9,355.1 L1095.2,351.1 L1089.8,347.3 L1083.6,343.7 L1076.9,340.4 L1069.6,337.5 L1061.8,334.9 L1053.6,332.7 L1045.1,330.8 L1036.3,329.4 L1027.4,328.4 L1018.4,327.9 L1009.4,327.7 L1000.5,328.1 L991.7,328.8 L983.3,330.0 L975.2,331.6 L967.5,333.6 L960.3,336.0 L953.7,338.8 L947.7,341.9 L942.4,345.3 L937.8,349.0 L934.0,352.9 L931.1,357.0 L929.0,361.3 L927.7,365.6 L927.4,370.1 L927.9,374.6 L929.3,379.1 L931.6,383.5 L934.7,387.9 L938.7,392.1 L943.4,396.1 L948.8,399.9 L955.0,403.5 L961.7,406.7 L969.0,409.7 L976.8,412.3 L985.0,414.5 L993.5,416.3 L1002.3,417.8 L1011.2,418.8 L1020.2,419.3 L1029.2,419.4 L1038.1,419.1 L1046.9,418.4 L1055.3,417.2 L1063.4,415.6 L1071.1,413.5 L1078.3,411.1 L1084.9,408.4 L1090.9,405.3 L1096.2,401.9 L1100.8,398.2 L1104.6,394.3Z" fill="none" stroke="#15181b" stroke-width="1.15" stroke-linejoin="round" clip-path="url(#c47)"/>
<path d="M1108.2,376.7 L1110.3,372.5 L1111.6,368.1 L1111.9,363.6 L1111.4,359.1 L1110.0,354.6 L1107.7,350.2 L1104.6,345.8 L1100.6,341.6 L1095.9,337.6 L1090.5,333.8 L1084.3,330.3 L1077.6,327.0 L1070.3,324.0 L1062.5,321.4 L1054.3,319.2 L1045.8,317.4 L1037.0,316.0 L1028.1,315.0 L1019.1,314.4 L1010.1,314.3 L1001.2,314.6 L992.4,315.4 L984.0,316.6 L975.9,318.2 L968.2,320.2 L961.0,322.6 L954.4,325.3 L948.4,328.4 L943.1,331.8 L938.5,335.5 L934.7,339.4 L931.8,343.5 L929.7,347.8 L928.4,352.2 L928.1,356.7 L928.6,361.2 L930.0,365.6 L932.3,370.1 L935.4,374.4 L939.4,378.6 L944.1,382.6 L949.5,386.5 L955.7,390.0 L962.4,393.3 L969.7,396.2 L977.5,398.8 L985.7,401.1 L994.2,402.9 L1003.0,404.3 L1011.9,405.3 L1020.9,405.9 L1029.9,406.0 L1038.8,405.7 L1047.6,404.9 L1056.0,403.7 L1064.1,402.1 L1071.8,400.1 L1079.0,397.7 L1085.6,394.9 L1091.6,391.8 L1096.9,388.4 L1101.5,384.8 L1105.3,380.8Z" fill="none" stroke="#15181b" stroke-width="1.15" stroke-linejoin="round" />
<polygon points="680.1,367.8 1063.0,419.3 1063.0,432.7 680.1,381.3" fill="#536b7d" stroke="#15181b" stroke-width="1.15" stroke-linejoin="round" />
<polygon points="740.0,353.4 1034.4,392.9 1038.6,385.0 738.9,344.7" fill="#86b0cd" stroke="#15181b" stroke-width="1.15" stroke-linejoin="round" />
<polygon points="740.0,353.4 1034.4,392.9 1034.4,405.1 740.0,365.5" fill="#536c7e" stroke="#15181b" stroke-width="1.15" stroke-linejoin="round" />
<polygon points="739.7,366.0 1034.1,405.6 1034.4,405.1 740.0,365.5" fill="#86b0cd" stroke="#15181b" stroke-width="1.15" stroke-linejoin="round" />
<polygon points="739.7,366.0 1034.1,405.6 1034.1,415.1 739.7,375.6" fill="#536c7e" stroke="#15181b" stroke-width="1.15" stroke-linejoin="round" />
<polygon points="1034.4,392.9 1038.6,385.0 1038.6,397.2 1034.4,405.1" fill="#4a6272" stroke="#15181b" stroke-width="1.15" stroke-linejoin="round" />
<polygon points="1034.1,405.6 1034.4,405.1 1034.4,414.7 1034.1,415.1" fill="#4a6272" stroke="#15181b" stroke-width="1.15" stroke-linejoin="round" />
<polygon points="1085.7,298.2 1084.7,300.6 1083.8,303.6 1083.0,307.2 1082.4,311.0 1082.0,314.9 1081.9,318.5 1081.9,568.4 1093.3,547.4 1093.7,541.4 1094.1,535.4 1094.9,528.4 1096.1,522.4 1097.6,517.0 1138.5,442.9 1140.0,436.4 1142.0,432.4 1145.4,431.0 1147.4,433.8 1148.2,443.8 1160.3,422.4 1160.3,164.7 1159.9,161.5 1158.7,161.5 1157.1,163.8" fill="url(#g51)" stroke="#15181b" stroke-width="1.15" stroke-linejoin="round" />
<polygon points="1140.0,436.4 1142.0,432.4 1145.4,431.0 1147.4,433.8 1148.2,443.8 1140.7,441.9" fill="#5a7a90"  />
<g clip-path="url(#c52)">
<polygon points="1147.9,217.6 1147.8,215.1 1147.5,213.2 1147.0,212.0 1146.4,211.5 1145.6,211.9 1144.8,213.0 1097.2,302.8 1096.4,304.6 1095.6,307.1 1095.0,309.9 1094.5,313.0 1094.2,316.1 1094.1,319.0 1094.1,356.8 1094.2,359.4 1094.5,361.3 1095.0,362.5 1095.6,363.0 1096.4,362.6 1097.2,361.5 1144.8,271.7 1145.6,269.9 1146.4,267.4 1147.0,264.6 1147.5,261.5 1147.8,258.4 1147.9,255.5" fill="#8cb4cf"  />
<polygon points="1147.9,202.9 1147.9,255.1 1117.9,251.0 1117.9,198.8" fill="#5a7a90"  />
<polygon points="1147.9,255.1 1143.5,274.1 1113.6,270.1 1117.9,251.0" fill="url(#g53)"  />
<line x1="1147.9" y1="255.1" x2="1117.9" y2="251.0" stroke="#16191c" stroke-width="0.9"/>
<line x1="1143.5" y1="274.1" x2="1113.6" y2="270.1" stroke="#16191c" stroke-width="0.9"/>
</g>
<polygon points="1147.9,217.6 1147.8,215.1 1147.5,213.2 1147.0,212.0 1146.4,211.5 1145.6,211.9 1144.8,213.0 1097.2,302.8 1096.4,304.6 1095.6,307.1 1095.0,309.9 1094.5,313.0 1094.2,316.1 1094.1,319.0 1094.1,356.8 1094.2,359.4 1094.5,361.3 1095.0,362.5 1095.6,363.0 1096.4,362.6 1097.2,361.5 1144.8,271.7 1145.6,269.9 1146.4,267.4 1147.0,264.6 1147.5,261.5 1147.8,258.4 1147.9,255.5" fill="none" stroke="#15181b" stroke-width="1.15" stroke-linejoin="round" />
<polygon points="1055.8,294.2 1085.7,298.2 1157.1,163.8 1127.1,159.8" fill="#8ab7d3" stroke="#15181b" stroke-width="1.15" stroke-linejoin="round" />
<polygon points="1055.8,294.2 1085.7,298.2 1081.9,318.5 1051.9,314.5" fill="url(#g54)" stroke="#15181b" stroke-width="1.15" stroke-linejoin="round" />
<polygon points="1051.9,314.5 1081.9,318.5 1081.9,568.4 1051.9,564.4" fill="#536b7d" stroke="#15181b" stroke-width="1.15" stroke-linejoin="round" /></svg>
<svg style="position:absolute;left:0;top:0" width="1200" height="34">
<circle cx="9" cy="16.7" r="8.5" fill="#b9d1ea"/><circle cx="9" cy="16.2" r="4.3" fill="none" stroke="#fff" stroke-width="2"/><path d="M10 19 l3 4" stroke="#fff" stroke-width="2"/>
</svg>
<div class="sep" style="left:25.7px"></div>
<div class="sep" style="left:101.0px"></div>
<div class="sep" style="left:136.5px"></div>
<div class="sep" style="left:392.0px"></div>
<div class="sep" style="left:427.0px"></div>
<div class="sep" style="left:651.5px"></div>
<div class="sep" style="left:780.7px"></div>
<svg style="position:absolute;left:34.5px;top:6.7px" width="20" height="20" viewBox="0 0 20 20"><path d="M3 6 L9 3 L13 5 L13 17 L6 18 L3 16 Z M6 8 L6 18 M6 8 L13 6" fill="none" stroke="#333" stroke-width="1.3" stroke-linejoin="round" stroke-linecap="round"/><path d="M8 4 C11 2 14 3 15 7 M13 6 l2 2 l1.5 -2.5" fill="none" stroke="#333" stroke-width="1.3" stroke-linejoin="round" stroke-linecap="round"/></svg>
<div class="t" style="left:57.5px;top:10.5px;font-size:13px;color:#3a3a3a;">Insert</div>
<svg style="position:absolute;left:110.0px;top:6.7px" width="20" height="20" viewBox="0 0 20 20"><circle cx="10" cy="10" r="8" fill="none" stroke="#333" stroke-width="1.3" stroke-linejoin="round" stroke-linecap="round"/><circle cx="10" cy="10" r="5.8" fill="none" stroke="#333" stroke-width="1.3" stroke-linejoin="round" stroke-linecap="round"/><path d="M10 5.5 V10 H14" fill="none" stroke="#333" stroke-width="1.3" stroke-linejoin="round" stroke-linecap="round"/><path d="M10 4.2 A5.8 5.8 0 0 1 15.8 10 H10Z" fill="#ddd"/></svg>
<svg style="position:absolute;left:145.0px;top:6.7px" width="20" height="20" viewBox="0 0 20 20"><ellipse cx="10" cy="5.5" rx="6" ry="2.5" fill="none" stroke="#333" stroke-width="1.3" stroke-linejoin="round" stroke-linecap="round"/><path d="M4 5.5 V15 A6 2.5 0 0 0 16 15 V5.5" fill="none" stroke="#333" stroke-width="1.3" stroke-linejoin="round" stroke-linecap="round"/><path d="M4.5 10 Q10 12 15.5 10 V15 A6 2.5 0 0 1 4.5 15Z" fill="#555"/><path d="M7 10.5 V13 Q10 14 13 13 V10.5" fill="#ccc"/></svg>
<svg style="position:absolute;left:176.7px;top:6.7px" width="20" height="20" viewBox="0 0 20 20"><ellipse cx="10" cy="6.5" rx="5" ry="2.5" fill="none" stroke="#555" stroke-width="1"/><path d="M5 6.5 V14 A5 2.5 0 0 0 15 14 V6.5" fill="none" stroke="#555" stroke-width="1"/><path d="M2.5 8 Q2.5 11.5 8 12 M17.5 8 Q17.5 11.5 12 12" fill="none" stroke="#333" stroke-width="1.3" stroke-linejoin="round" stroke-linecap="round"/><path d="M6.5 10.5 L8.5 12 L6.5 13.5 M13.5 10.5 L11.5 12 L13.5 13.5" fill="none" stroke="#333" stroke-width="1.3" stroke-linejoin="round" stroke-linecap="round"/></svg>
<svg style="position:absolute;left:207.5px;top:6.7px" width="20" height="20" viewBox="0 0 20 20"><path d="M6 8 V15 A4 2 0 0 0 14 15 V8 A4 2 0 0 0 6 8Z" fill="none" stroke="#555" stroke-width="1"/><path d="M10 11 V2 M8 4 L10 2 L12 4" fill="none" stroke="#333" stroke-width="1.3" stroke-linejoin="round" stroke-linecap="round"/><path d="M3 8 V16 M17 8 V16" stroke="#333" stroke-width="2"/></svg>
<svg style="position:absolute;left:239.2px;top:6.7px" width="20" height="20" viewBox="0 0 20 20"><rect x="3" y="3" width="14" height="14" fill="none" stroke="#888" stroke-width="1"/><path d="M10 2 V18 M2 10 H18" fill="none" stroke="#333" stroke-width="1.3" stroke-linejoin="round" stroke-linecap="round"/><path d="M8 4 L10 2 L12 4 M8 16 L10 18 L12 16 M4 8 L2 10 L4 12 M16 8 L18 10 L16 12" fill="none" stroke="#333" stroke-width="1.3" stroke-linejoin="round" stroke-linecap="round"/></svg>
<svg style="position:absolute;left:270.8px;top:6.7px" width="20" height="20" viewBox="0 0 20 20"><ellipse cx="10" cy="11" rx="5" ry="2.5" fill="none" stroke="#555" stroke-width="1"/><path d="M5 11 V14 A5 2.5 0 0 0 15 14 V11" fill="none" stroke="#555" stroke-width="1"/><path d="M10 9 V2 M8.5 3.5 L10 2 L11.5 3.5" fill="none" stroke="#333" stroke-width="1.3" stroke-linejoin="round" stroke-linecap="round"/><path d="M2 12 Q3 15 8 15.5 M18 12 Q17 15 12 15.5" fill="none" stroke="#333" stroke-width="1.3" stroke-linejoin="round" stroke-linecap="round"/></svg>
<svg style="position:absolute;left:302.5px;top:6.7px" width="20" height="20" viewBox="0 0 20 20"><path d="M8 5 V13 M12 5 V13" fill="none" stroke="#555" stroke-width="1"/><ellipse cx="10" cy="5" rx="2" ry="1.2" fill="none" stroke="#555" stroke-width="1"/><path d="M3 15 Q3 13 8 13 H12 Q17 13 17 15 V17 H3Z" fill="none" stroke="#555" stroke-width="1"/><path d="M2 9 H18 M4 7 L2 9 L4 11 M16 7 L18 9 L16 11" fill="none" stroke="#333" stroke-width="1.3" stroke-linejoin="round" stroke-linecap="round"/></svg>
<svg style="position:absolute;left:333.3px;top:6.7px" width="20" height="20" viewBox="0 0 20 20"><circle cx="10" cy="10" r="6" fill="none" stroke="#555" stroke-width="1.2"/><path d="M10 2 V18 M2 10 H18" fill="none" stroke="#333" stroke-width="1.3" stroke-linejoin="round" stroke-linecap="round"/><path d="M8 4 L10 2 L12 4 M8 16 L10 18 L12 16 M4 8 L2 10 L4 12 M16 8 L18 10 L16 12" fill="none" stroke="#333" stroke-width="1.3" stroke-linejoin="round" stroke-linecap="round"/></svg>
<svg style="position:absolute;left:365.3px;top:6.7px" width="20" height="20" viewBox="0 0 20 20"><path d="M3 6 L7 3 V14 L3 17Z M13 6 L17 3 V14 L13 17Z" fill="none" stroke="#888" stroke-width="1"/><path d="M6 10 H14 M8 8 L6 10 L8 12 M12 8 L14 10 L12 12" fill="none" stroke="#333" stroke-width="1.3" stroke-linejoin="round" stroke-linecap="round"/></svg>
<svg style="position:absolute;left:400.8px;top:6.7px" width="20" height="20" viewBox="0 0 20 20"><path d="M4 14 Q6 6 14 5" fill="none" stroke="#999" stroke-width="1"/><circle cx="13" cy="8" r="4" fill="none" stroke="#aaa" stroke-width="1"/><path d="M4 4 Q12 4 15 15 M3 6 L4 4 L6 3 M14 13 L15 15 L17 13" fill="none" stroke="#333" stroke-width="1.3" stroke-linejoin="round" stroke-linecap="round"/></svg>
<svg style="position:absolute;left:435.8px;top:6.7px" width="20" height="20" viewBox="0 0 20 20"><rect x="3" y="3" width="14" height="14" fill="none" stroke="#555" stroke-width="1" stroke-dasharray="2 1.5"/><rect x="6" y="6" width="5" height="5" fill="none" stroke="#333" stroke-width="1.2"/><rect x="9" y="9" width="5" height="5" fill="none" stroke="#333" stroke-width="1.2"/><circle cx="3" cy="3" r="1.2" fill="#555"/><circle cx="17" cy="3" r="1.2" fill="#555"/><circle cx="3" cy="17" r="1.2" fill="#555"/><circle cx="17" cy="17" r="1.2" fill="#555"/></svg>
<svg style="position:absolute;left:466.7px;top:6.7px" width="20" height="20" viewBox="0 0 20 20"><ellipse cx="11" cy="6" rx="5" ry="2.5" fill="none" stroke="#333" stroke-width="1.3" stroke-linejoin="round" stroke-linecap="round"/><path d="M6 6 V14 A5 2.5 0 0 0 16 14 V6" fill="none" stroke="#333" stroke-width="1.3" stroke-linejoin="round" stroke-linecap="round"/><path d="M6 3 L7.2 6 L10 6.3 L7.8 8.3 L8.5 11 L6 9.5 L3.5 11 L4.2 8.3 L2 6.3 L4.8 6Z" fill="#222"/><path d="M9 10 V13 Q11 14 13 13 V10" fill="none" stroke="#333" stroke-width="1.3" stroke-linejoin="round" stroke-linecap="round"/></svg>
<svg style="position:absolute;left:497.5px;top:6.7px" width="20" height="20" viewBox="0 0 20 20"><ellipse cx="9" cy="6" rx="5" ry="2.5" fill="none" stroke="#333" stroke-width="1.3" stroke-linejoin="round" stroke-linecap="round"/><path d="M4 6 V14 A5 2.5 0 0 0 14 14 V6" fill="none" stroke="#333" stroke-width="1.3" stroke-linejoin="round" stroke-linecap="round"/><path d="M4 10 Q9 12 14 10" fill="none" stroke="#333" stroke-width="1.3" stroke-linejoin="round" stroke-linecap="round"/><path d="M12 9 L18 14 L15 14.5 L17 18 L15.5 18.5 L13.5 15 L12 17Z" fill="#222"/></svg>
<svg style="position:absolute;left:529.2px;top:6.7px" width="20" height="20" viewBox="0 0 20 20"><path d="M2 11 L10 9 L17 11 V16 L10 18 L2 16Z M2 11 L10 13 L17 11 M10 13 V18" fill="none" stroke="#444" stroke-width="1.1"/><ellipse cx="6" cy="10" rx="2.5" ry="1.2" fill="none" stroke="#444" stroke-width="1"/><circle cx="13" cy="4.5" r="2.5" fill="none" stroke="#444" stroke-width="1"/><path d="M13 7 V10" stroke="#444"/></svg>
<svg style="position:absolute;left:561.7px;top:6.7px" width="20" height="20" viewBox="0 0 20 20"><path d="M3 4 L7 2 V7 L11 9 V12 L3 9Z M9 12 L13 10 V15 L17 17 V19 L9 16Z" fill="none" stroke="#444" stroke-width="1.1"/><path d="M4 12 Q4 15 8 15 M7 14 l1.5 1 l-1.5 1" fill="none" stroke="#444" stroke-width="1"/></svg>
<svg style="position:absolute;left:592.5px;top:6.7px" width="20" height="20" viewBox="0 0 20 20"><rect x="3" y="2" width="7" height="8" fill="#9a9a9a" stroke="#444"/><rect x="10" y="2" width="7" height="8" fill="#666" stroke="#444"/><rect x="3" y="10" width="7" height="8" fill="#777" stroke="#444"/><rect x="10" y="10" width="7" height="8" fill="#666" stroke="#444"/><rect x="4" y="3" width="5" height="6" fill="#eee"/></svg>
<svg style="position:absolute;left:624.2px;top:6.7px" width="20" height="20" viewBox="0 0 20 20"><circle cx="7" cy="11" r="3" fill="none" stroke="#555" stroke-width="1"/><circle cx="11" cy="6" r="2.5" fill="none" stroke="#555" stroke-width="1"/><circle cx="14" cy="10" r="2.5" fill="none" stroke="#555" stroke-width="1"/><circle cx="11" cy="14" r="2.5" fill="none" stroke="#555" stroke-width="1"/></svg>
<svg style="position:absolute;left:659.2px;top:6.7px" width="20" height="20" viewBox="0 0 20 20"><circle cx="6.5" cy="6" r="2.6" fill="none" stroke="#222" stroke-width="2"/><circle cx="6.5" cy="6" r="4.4" fill="none" stroke="#222" stroke-width="2" stroke-dasharray="2 1.45"/><circle cx="13" cy="13" r="3.2" fill="none" stroke="#222" stroke-width="2.4"/><circle cx="13" cy="13" r="5.3" fill="none" stroke="#222" stroke-width="2.2" stroke-dasharray="2.2 1.9"/></svg>
<svg style="position:absolute;left:690.8px;top:6.7px" width="20" height="20" viewBox="0 0 20 20"><circle cx="10" cy="8.5" r="3.6" fill="none" stroke="#222" stroke-width="2.6"/><circle cx="10" cy="8.5" r="6" fill="none" stroke="#222" stroke-width="2.4" stroke-dasharray="2.4 1.8"/><path d="M2 18.5 H18" stroke="#222" stroke-width="1.8"/><path d="M5 17 L7 14 M15 17 L13 14 M10 17 V15" stroke="#222" stroke-width="1.3"/></svg>
<svg style="position:absolute;left:724.2px;top:6.7px" width="20" height="20" viewBox="0 0 20 20"><path d="M4 3 V14 M7 3 V14 M10 3 V14 M13 3 V14 M16 3 V14" stroke="#222" stroke-width="1.4"/><path d="M3 8 L17 6 M3 11 L17 9" stroke="#222" stroke-width="1"/><path d="M3 17 H16 M14 15 L16 17 L14 19" stroke="#222" stroke-width="1.3" fill="none"/></svg>
<svg style="position:absolute;left:754.2px;top:6.7px" width="20" height="20" viewBox="0 0 20 20"><rect x="7" y="3" width="9" height="5" rx="2.5" fill="none" stroke="#777" stroke-width="1"/><rect x="5" y="11" width="9" height="5" rx="2.5" fill="none" stroke="#777" stroke-width="1"/><path d="M2 5 H7 M3.5 3.5 L2 5 L3.5 6.5 M12 13.5 H18 M16.5 12 L18 13.5 L16.5 15" stroke="#222" stroke-width="1.3" fill="none"/></svg>
<svg style="position:absolute;left:788.3px;top:6.7px" width="20" height="20" viewBox="0 0 20 20"><rect x="2" y="11" width="12" height="5" fill="none" stroke="#444" stroke-width="1.2"/><rect x="11" y="2" width="6" height="14" fill="none" stroke="#2a62c9" stroke-width="1.1" stroke-dasharray="1.5 1"/><circle cx="14" cy="14" r="2" fill="none" stroke="#2a62c9" stroke-width="1"/></svg>
<svg style="position:absolute;left:821.7px;top:6.7px" width="20" height="20" viewBox="0 0 20 20"><path d="M3 2 H15 V9 M3 2 V17 H8" fill="none" stroke="#444" stroke-width="1.2"/><path d="M6 5 H12 M6 7 H12 M6 9 H12" stroke="#444" stroke-width="1"/><path d="M8 15 Q12 10 17 14 Q12 18 8 15Z M9 18 L16 11" fill="none" stroke="#333" stroke-width="1.2"/></svg>
<svg style="position:absolute;left:851.7px;top:6.7px" width="20" height="20" viewBox="0 0 20 20"><path d="M4 9 H9 V18 H4Z M10 4 L13 2 H17 V18 H12 V6Z" fill="none" stroke="#444" stroke-width="1.2"/><path d="M6 2 V8 M3 5 H9" stroke="#2a62c9" stroke-width="1.6"/></svg>
<div style="position:absolute;left:888px;top:2.5px;width:135px;height:28px;background:#ececec;border-radius:3px;"></div>
<div class="t" style="left:897.5px;top:10.5px;font-size:12.6px;color:#3d3d3d;">Search tools...</div>
<div style="position:absolute;left:981px;top:9.5px;width:17.5px;height:16.5px;background:#f6f6f6;border:1px solid #cfcfcf;border-radius:2px;box-sizing:border-box;"></div>
<div style="position:absolute;left:998.5px;top:9.5px;width:15px;height:16.5px;background:#f6f6f6;border:1px solid #cfcfcf;border-radius:2px;box-sizing:border-box;"></div>
<div class="t" style="left:982.8px;top:12.0px;font-size:11px;color:#444;">alt</div>
<div class="t" style="left:1002.2px;top:12.0px;font-size:11px;color:#444;">C</div>
<div style="position:absolute;left:-2px;top:33.3px;width:117.5px;height:568.7px;border:1.6px solid #d2d2d2;border-left:none;background:#fff;"></div>
<div style="position:absolute;left:-4px;top:41px;width:77.5px;height:26px;border:1px solid #dcdcdc;border-radius:3px;"></div>
<div class="t" style="left:-4.6px;top:49.1px;font-size:12.5px;color:#a8a8a8;font-style:italic;">by name</div>
<svg style="position:absolute;left:87px;top:47px" width="15" height="15" viewBox="0 0 15 15"><path d="M1 1.5 H14 M1 5 H14 M1 8.5 H14 M1 12 H14" stroke="#333" stroke-width="1.6"/><path d="M1 1.5 H2.5 M1 5 H2.5 M1 8.5 H2.5 M1 12 H2.5" stroke="#fff" stroke-width="1.6" stroke-dasharray="0 0"/></svg>
<svg style="position:absolute;left:88px;top:76px" width="19" height="15" viewBox="0 0 19 15"><path d="M1 4 V1 H7 L8.5 3 H17.5 V14 H7" fill="none" stroke="#444" stroke-width="1.2"/><path d="M1 10 V14 H3" fill="none" stroke="#444" stroke-width="1.2"/><path d="M5.5 6 V13 M2 9.5 H9" stroke="#2a62c9" stroke-width="1.8"/></svg>
<div class="t" style="left:-5.5px;top:78.8px;font-size:12.5px;color:#3c3c3c;">0</div>
<div class="t" style="left:-5.6px;top:103.2px;font-size:12.5px;color:#3c3c3c;">stojan 3</div>
<div class="t" style="left:-2.5px;top:127.2px;font-size:12.5px;color:#3c3c3c;">l</div>
<div class="t" style="left:-3.5px;top:151.2px;font-size:12.5px;color:#3c3c3c;">l &lt;1&gt;</div>
<div class="t" style="left:-3.5px;top:175.2px;font-size:12.5px;color:#3c3c3c;">l &lt;2&gt;</div>
<div class="t" style="left:-3.5px;top:199.2px;font-size:12.5px;color:#3c3c3c;">l &lt;3&gt;</div>
<div class="t" style="left:-3.5px;top:223.2px;font-size:12.5px;color:#3c3c3c;">l &lt;4&gt;</div>
<div class="t" style="left:-3.5px;top:247.2px;font-size:12.5px;color:#3c3c3c;">l &lt;5&gt;</div>
<div class="t" style="left:-3.5px;top:271.2px;font-size:12.5px;color:#3c3c3c;">l &lt;6&gt;</div>
<div class="t" style="left:-3.5px;top:295.2px;font-size:12.5px;color:#3c3c3c;">l &lt;7&gt;</div>
<div class="t" style="left:-3.5px;top:319.2px;font-size:12.5px;color:#3c3c3c;">l &lt;8&gt;</div>
<div class="t" style="left:-3.5px;top:343.2px;font-size:12.5px;color:#3c3c3c;">l &lt;9&gt;</div>
<div class="t" style="left:-9.2px;top:367.2px;font-size:12.5px;color:#3c3c3c;">atures (8)</div>
<div class="t" style="left:-9.4px;top:391.6px;font-size:12.5px;color:#a4a4a4;">astened 1</div>
<div class="t" style="left:-9.4px;top:415.6px;font-size:12.5px;color:#a4a4a4;">astened 2</div>
<div class="t" style="left:-9.4px;top:439.6px;font-size:12.5px;color:#a4a4a4;">astened 3</div>
<div class="t" style="left:-9.4px;top:463.6px;font-size:12.5px;color:#a4a4a4;">astened 4</div>
<div class="t" style="left:-9.4px;top:487.6px;font-size:12.5px;color:#a4a4a4;">astened 5</div>
<div class="t" style="left:-9.4px;top:511.5px;font-size:12.5px;color:#a4a4a4;">astened 6</div>
<div class="t" style="left:-9.4px;top:535.5px;font-size:12.5px;color:#a4a4a4;">astened 7</div>
<div class="t" style="left:-9.4px;top:559.5px;font-size:12.5px;color:#a4a4a4;">astened 8</div>
<div style="position:absolute;left:115px;top:294px;width:31px;height:32px;background:#fff;border:1.5px solid #d6d6d6;border-left:none;box-sizing:border-box;border-radius:0 2px 2px 0;"></div>
<div style="position:absolute;left:115px;top:295.5px;width:2px;height:29px;background:#fff;"></div>
<svg style="position:absolute;left:122px;top:301px" width="17" height="18" viewBox="0 0 17 18"><path d="M4 4 V15 M3 16 H14 M7 5 H14 M7 8.5 H14 M7 12 H14" stroke="#444" stroke-width="1.2" fill="none"/><path d="M2 1.5 L4 4 L6 1.5" stroke="#444" stroke-width="1.1" fill="none"/></svg>
<svg style="position:absolute;left:1100px;top:40px" width="100" height="130" viewBox="0 0 100 130"><path d="M101 16 Q88 19 81 30" fill="none" stroke="#d9e1e9" stroke-width="6"/><path d="M76.7 37.4 L78.6 25 L89 35.4Z" fill="#d9e1e9"/><path d="M57.6 76.4 L67.1 68.8 L67.1 83.1Z" fill="#d9e1e9"/><rect x="93.8" y="50.7" width="20" height="53.3" rx="7" fill="#e3e9ef"/><rect x="97" y="62" width="10" height="22" rx="5" fill="#f3f6f8"/><text x="81.0" y="114.5" font-family="Liberation Sans" font-size="14" font-weight="bold" fill="#3aa83f">Y</text><path d="M94.8 110.7 H100" stroke="#33aa44" stroke-width="1.6"/></svg>
<div style="position:absolute;left:0;top:602.5px;width:1200px;height:27.5px;background:#dedede;"></div>
<div class="tab" style="left:-19.0px;width:74.7px;background:#ebebeb">
<div style="position:absolute;left:10.5px;top:4.5px"><svg width="17" height="17" viewBox="0 0 17 17"><path d="M1.5 5.5 L4 4 H7 V15.5 H1.5Z M1.5 5.5 H7" fill="none" stroke="#333" stroke-width="1.1"/><path d="M7.5 3 L10 1.5 H14.5 V15.5 H8 M10 1.5 V15.5" fill="none" stroke="#333" stroke-width="1.1"/></svg></div>
<span style="left:31px;color:#5c5c5c">noha2</span>
</div>
<div class="tab" style="left:58.0px;width:85.8px;background:#ebebeb">
<div style="position:absolute;left:10.5px;top:4.5px"><svg width="17" height="17" viewBox="0 0 17 17"><path d="M1.5 5.5 L4 4 H7 V15.5 H1.5Z M1.5 5.5 H7" fill="none" stroke="#333" stroke-width="1.1"/><path d="M7.5 3 L10 1.5 H14.5 V15.5 H8 M10 1.5 V15.5" fill="none" stroke="#333" stroke-width="1.1"/></svg></div>
<span style="left:31px;color:#5c5c5c">2-noha1</span>
</div>
<div class="tab" style="left:145.5px;width:89.5px;background:#ebebeb">
<div style="position:absolute;left:10.5px;top:4.5px"><svg width="17" height="17" viewBox="0 0 17 17"><path d="M1.5 5.5 L4 4 H7 V15.5 H1.5Z M1.5 5.5 H7" fill="none" stroke="#333" stroke-width="1.1"/><path d="M7.5 3 L10 1.5 H14.5 V15.5 H8 M10 1.5 V15.5" fill="none" stroke="#333" stroke-width="1.1"/></svg></div>
<span style="left:31px;color:#5c5c5c">2-noha 2</span>
</div>
<div class="tab" style="left:237.0px;width:74.2px;background:#ebebeb">
<div style="position:absolute;left:10.5px;top:4.5px"><svg width="17" height="17" viewBox="0 0 17 17"><path d="M1.5 5.5 L4 4 H7 V15.5 H1.5Z M1.5 5.5 H7" fill="none" stroke="#333" stroke-width="1.1"/><path d="M7.5 3 L10 1.5 H14.5 V15.5 H8 M10 1.5 V15.5" fill="none" stroke="#333" stroke-width="1.1"/></svg></div>
<span style="left:31px;color:#5c5c5c">vrchni</span>
</div>
<div class="tab" style="left:313.8px;width:93.8px;background:#ebebeb">
<div style="position:absolute;left:10.5px;top:4.5px"><svg width="17" height="17" viewBox="0 0 17 17"><path d="M1.5 5.5 L4 4 H7 V15.5 H1.5Z M1.5 5.5 H7" fill="none" stroke="#333" stroke-width="1.1"/><path d="M7.5 3 L10 1.5 H14.5 V15.5 H8 M10 1.5 V15.5" fill="none" stroke="#333" stroke-width="1.1"/></svg></div>
<span style="left:31px;color:#5c5c5c">prostedni</span>
</div>
<div class="tab" style="left:409.5px;width:76.8px;background:#ebebeb">
<div style="position:absolute;left:10.5px;top:4.5px"><svg width="17" height="17" viewBox="0 0 17 17"><path d="M1.5 5.5 L4 4 H7 V15.5 H1.5Z M1.5 5.5 H7" fill="none" stroke="#333" stroke-width="1.1"/><path d="M7.5 3 L10 1.5 H14.5 V15.5 H8 M10 1.5 V15.5" fill="none" stroke="#333" stroke-width="1.1"/></svg></div>
<span style="left:31px;color:#5c5c5c">spodni</span>
</div>
<div class="tab" style="left:488.2px;width:88.8px;background:#ebebeb">
<div style="position:absolute;left:10.5px;top:4.5px"><svg width="17" height="17" viewBox="0 0 17 17"><path d="M1.5 5.5 L4 4 H7 V15.5 H1.5Z M1.5 5.5 H7" fill="none" stroke="#333" stroke-width="1.1"/><path d="M7.5 3 L10 1.5 H14.5 V15.5 H8 M10 1.5 V15.5" fill="none" stroke="#333" stroke-width="1.1"/></svg></div>
<span style="left:31px;color:#5c5c5c">2-spodni</span>
</div>
<div class="tab" style="left:579.2px;width:87.0px;background:#ebebeb">
<div style="position:absolute;left:10.5px;top:4.5px"><svg width="17" height="17" viewBox="0 0 17 17"><path d="M1.5 5.5 L4 4 H7 V15.5 H1.5Z M1.5 5.5 H7" fill="none" stroke="#333" stroke-width="1.1"/><path d="M7.5 3 L10 1.5 H14.5 V15.5 H8 M10 1.5 V15.5" fill="none" stroke="#333" stroke-width="1.1"/></svg></div>
<span style="left:31px;color:#5c5c5c">2-vrchni</span>
</div>
<div class="tab" style="left:668.2px;width:130.5px;background:#ebebeb">
<div style="position:absolute;left:10.5px;top:4.5px"><svg width="17" height="17" viewBox="0 0 17 17"><path d="M1.2 0.8 H13.7 L16.6 4.3 V16.6 H4.6 L1.2 13Z" fill="#fff" stroke="#333" stroke-width="1.1" stroke-linejoin="round"/><path d="M1.8 1.4 H12 V12 H4.6 L1.8 9Z" fill="#8c8c8c"/><path d="M1.2 0.8 L4.6 4.8 H12 V12 H4.6 Z M4.6 12 V16.6 M12 4.8 L13.7 0.8" fill="none" stroke="#333" stroke-width="1"/></svg></div>
<span style="left:31px;color:#5c5c5c">sestava stojan 1</span>
</div>
<div class="tab" style="left:801.2px;width:131.2px;background:#ebebeb">
<div style="position:absolute;left:10.5px;top:4.5px"><svg width="17" height="17" viewBox="0 0 17 17"><path d="M1.2 0.8 H13.7 L16.6 4.3 V16.6 H4.6 L1.2 13Z" fill="#fff" stroke="#333" stroke-width="1.1" stroke-linejoin="round"/><path d="M1.8 1.4 H12 V12 H4.6 L1.8 9Z" fill="#8c8c8c"/><path d="M1.2 0.8 L4.6 4.8 H12 V12 H4.6 Z M4.6 12 V16.6 M12 4.8 L13.7 0.8" fill="none" stroke="#333" stroke-width="1"/></svg></div>
<span style="left:31px;color:#5c5c5c">sestava stojan 2</span>
</div>
<div class="tab" style="left:934.5px;width:131.3px;background:#ffffff">
<div style="position:absolute;left:10.5px;top:4.5px"><svg width="17" height="17" viewBox="0 0 17 17"><path d="M1.2 0.8 H13.7 L16.6 4.3 V16.6 H4.6 L1.2 13Z" fill="#fff" stroke="#333" stroke-width="1.1" stroke-linejoin="round"/><path d="M1.8 1.4 H12 V12 H4.6 L1.8 9Z" fill="#8c8c8c"/><path d="M1.2 0.8 L4.6 4.8 H12 V12 H4.6 Z M4.6 12 V16.6 M12 4.8 L13.7 0.8" fill="none" stroke="#333" stroke-width="1"/></svg></div>
<span style="left:31px;color:#333">sestava stojan 3</span>
<div style="position:absolute;left:0;bottom:-1px;width:100%;height:2px;background:#2f5fc8"></div>
</div>
<div class="tab" style="left:1067.2px;width:97.8px;background:#ebebeb">
<div style="position:absolute;left:10.5px;top:4.5px"><svg width="19" height="17" viewBox="0 0 19 17"><rect x="1.5" y="1.5" width="16" height="14" fill="none" stroke="#333" stroke-width="1.3"/><rect x="10" y="10" width="7.5" height="5.5" fill="none" stroke="#333" stroke-width="1.3"/></svg></div>
<span style="left:31px;color:#5c5c5c">Drawing 2</span>
</div>
<div class="tab" style="left:1166.7px;width:93.3px;background:#ebebeb">
<div style="position:absolute;left:10.5px;top:4.5px"><svg width="19" height="17" viewBox="0 0 19 17"><rect x="1.5" y="1.5" width="16" height="14" fill="none" stroke="#333" stroke-width="1.3"/><rect x="10" y="10" width="7.5" height="5.5" fill="none" stroke="#333" stroke-width="1.3"/></svg></div>
<span style="left:31px;color:#5c5c5c">Drawing 3</span>
</div>
</div></body></html>
